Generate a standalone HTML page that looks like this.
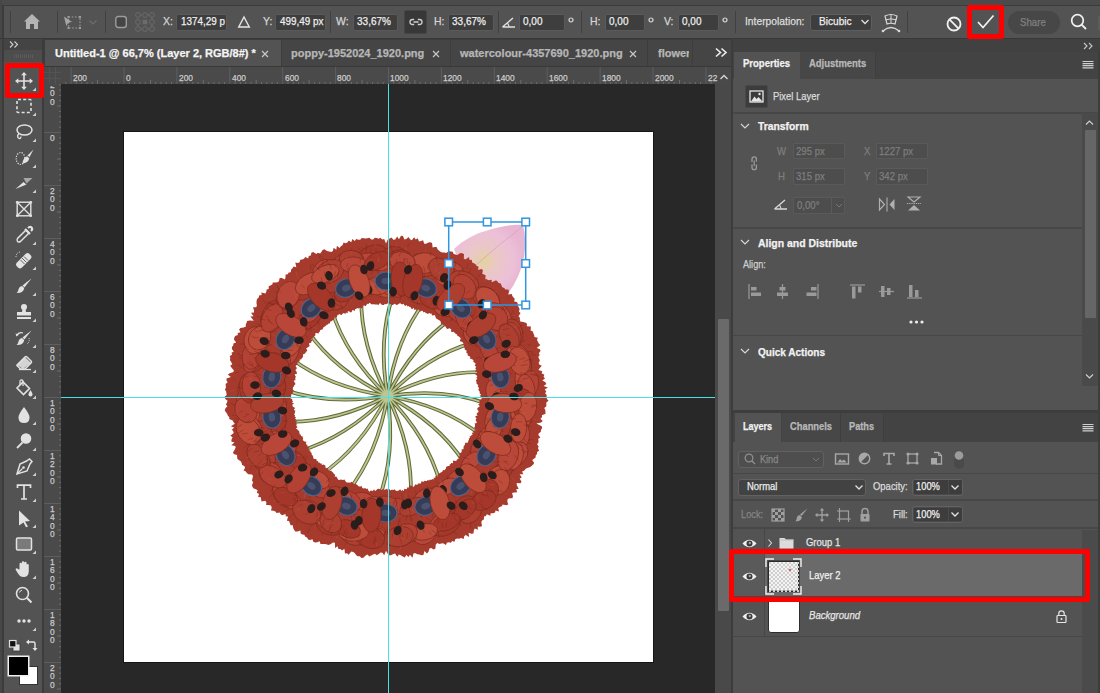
<!DOCTYPE html>
<html><head><meta charset="utf-8">
<style>
*{margin:0;padding:0;box-sizing:border-box}
html,body{width:1100px;height:693px;overflow:hidden;background:#3c3c3c;font-family:"Liberation Sans",sans-serif;color:#d8d8d8}
.a{position:absolute}
.t{position:absolute;white-space:nowrap;-webkit-text-stroke:0.25px currentColor}
svg.a{overflow:visible}
</style></head><body>
<div class="a" style="left:0px;top:0px;width:1100px;height:5px;background:#4b4b4b;"></div>
<div class="a" style="left:0px;top:0px;width:2px;height:693px;background:#474747;"></div>
<div class="a" style="left:4px;top:6px;width:1096px;height:32px;background:#535353;"></div>
<div class="a" style="left:10px;top:11px;width:1px;height:22px;background:#404040;"></div>
<div class="a" style="left:57px;top:11px;width:1px;height:22px;background:#404040;"></div>
<div class="a" style="left:105px;top:11px;width:1px;height:22px;background:#404040;"></div>
<div class="a" style="left:330px;top:11px;width:1px;height:22px;background:#404040;"></div>
<div class="a" style="left:498px;top:11px;width:1px;height:22px;background:#404040;"></div>
<div class="a" style="left:581px;top:11px;width:1px;height:22px;background:#404040;"></div>
<div class="a" style="left:735px;top:11px;width:1px;height:22px;background:#404040;"></div>
<div class="a" style="left:907px;top:11px;width:1px;height:22px;background:#404040;"></div>
<svg class="a" style="left:22px;top:12px;" width="20" height="20" viewBox="0 0 20 20"><path d="M10 2 L18 9.5 L16 9.5 L16 17 L12 17 L12 12 L8 12 L8 17 L4 17 L4 9.5 L2 9.5 Z" fill="#b4b4b4"/></svg>
<svg class="a" style="left:62px;top:14px;" width="20" height="16" viewBox="0 0 20 16"><rect x="6.5" y="3" width="11.5" height="11" fill="none" stroke="#9c9c9c" stroke-width="1.2" stroke-dasharray="1.6 1.6"/><rect x="5.5" y="2" width="2" height="2" fill="#9c9c9c"/><rect x="17" y="2" width="2" height="2" fill="#9c9c9c"/><rect x="5.5" y="13" width="2" height="2" fill="#9c9c9c"/><rect x="17" y="13" width="2" height="2" fill="#9c9c9c"/><path d="M2 2.5 L10 8 L6.3 8.6 L4.3 12 Z" fill="#a6a6a6"/></svg>
<svg class="a" style="left:88px;top:18px;" width="10" height="8" viewBox="0 0 10 8"><path d="M1.5 2.5 L5 6 L8.5 2.5" fill="none" stroke="#6e6e6e" stroke-width="1.1"/></svg>
<svg class="a" style="left:114px;top:15px;" width="14" height="14" viewBox="0 0 14 14"><rect x="1.8" y="1.5" width="10.5" height="11" rx="2.5" fill="#454545" stroke="#9c9c9c" stroke-width="1.4"/></svg>
<svg class="a" style="left:134px;top:11px;" width="22" height="22" viewBox="0 0 22 22"><circle cx="4" cy="4" r="2.4" fill="none" stroke="#6a6a6a" stroke-width="1"/><circle cx="4" cy="11" r="2.4" fill="none" stroke="#6a6a6a" stroke-width="1"/><circle cx="4" cy="18" r="2.4" fill="none" stroke="#6a6a6a" stroke-width="1"/><circle cx="11" cy="4" r="2.4" fill="none" stroke="#6a6a6a" stroke-width="1"/><rect x="8.7" y="8.7" width="4.6" height="4.6" fill="#6c6c6c"/><circle cx="11" cy="18" r="2.4" fill="none" stroke="#6a6a6a" stroke-width="1"/><circle cx="18" cy="4" r="2.4" fill="none" stroke="#6a6a6a" stroke-width="1"/><circle cx="18" cy="11" r="2.4" fill="none" stroke="#6a6a6a" stroke-width="1"/><circle cx="18" cy="18" r="2.4" fill="none" stroke="#6a6a6a" stroke-width="1"/><path d="M6.4 4 H8.6 M13.4 4 H15.6 M4 6.4 V8.6 M18 6.4 V8.6 M4 13.4 V15.6 M18 13.4 V15.6 M6.4 18 H8.6 M13.4 18 H15.6" stroke="#6a6a6a" stroke-width="1"/></svg>
<div class="t" style="left:163px;top:16.19px;font-size:11px;line-height:11px;color:#d6d6d6;font-weight:400;font-style:normal;transform:scaleX(0.95);transform-origin:0 0;">X:</div>
<div class="a" style="left:176px;top:13.5px;width:51px;height:17.0px;background:#3e3e3e;border:1px solid #5a5a5a;border-radius:2px"></div>
<div class="t" style="left:181px;top:15.77px;font-size:11.5px;line-height:11.5px;color:#f0f0f0;font-weight:400;font-style:normal;transform:scaleX(0.86);transform-origin:0 0;width:52px;overflow:hidden">1374,29 p</div>
<svg class="a" style="left:236px;top:14px;" width="16" height="16" viewBox="0 0 16 16"><path d="M8 3 L13.3 13 L2.7 13 Z" fill="none" stroke="#e6e6e6" stroke-width="1.4" stroke-linejoin="miter"/></svg>
<div class="t" style="left:262.5px;top:16.19px;font-size:11px;line-height:11px;color:#d6d6d6;font-weight:400;font-style:normal;transform:scaleX(0.95);transform-origin:0 0;">Y:</div>
<div class="a" style="left:275px;top:13.5px;width:51px;height:17.0px;background:#3e3e3e;border:1px solid #5a5a5a;border-radius:2px"></div>
<div class="t" style="left:280px;top:15.77px;font-size:11.5px;line-height:11.5px;color:#f0f0f0;font-weight:400;font-style:normal;transform:scaleX(0.86);transform-origin:0 0;">499,49 px</div>
<div class="t" style="left:336px;top:16.19px;font-size:11px;line-height:11px;color:#d6d6d6;font-weight:400;font-style:normal;transform:scaleX(0.95);transform-origin:0 0;">W:</div>
<div class="a" style="left:353px;top:13.5px;width:45px;height:17.0px;background:#3e3e3e;border:1px solid #5a5a5a;border-radius:2px"></div>
<div class="t" style="left:357px;top:15.77px;font-size:11.5px;line-height:11.5px;color:#f0f0f0;font-weight:400;font-style:normal;transform:scaleX(0.87);transform-origin:0 0;">33,67%</div>
<div class="a" style="left:404px;top:10px;width:23px;height:24px;background:#383838;border-radius:2px;border:1px solid #454545"></div>
<svg class="a" style="left:408px;top:16px;" width="16" height="12" viewBox="0 0 16 12"><path d="M6.2 3.5 H4.5 A2.5 2.5 0 0 0 4.5 8.5 H6.2 M9.8 3.5 H11.5 A2.5 2.5 0 0 1 11.5 8.5 H9.8 M5.5 6 H10.5" fill="none" stroke="#cfcfcf" stroke-width="1.3"/></svg>
<div class="t" style="left:434px;top:16.19px;font-size:11px;line-height:11px;color:#d6d6d6;font-weight:400;font-style:normal;transform:scaleX(0.95);transform-origin:0 0;">H:</div>
<div class="a" style="left:448px;top:13.5px;width:46px;height:17.0px;background:#3e3e3e;border:1px solid #5a5a5a;border-radius:2px"></div>
<div class="t" style="left:452px;top:15.77px;font-size:11.5px;line-height:11.5px;color:#f0f0f0;font-weight:400;font-style:normal;transform:scaleX(0.87);transform-origin:0 0;">33,67%</div>
<svg class="a" style="left:500px;top:14px;" width="18" height="16" viewBox="0 0 18 16"><path d="M2.5 13 H15 M2.5 13 L13 4" fill="none" stroke="#e0e0e0" stroke-width="1.4"/><path d="M9 13 A7 7 0 0 0 7.5 9.2" fill="none" stroke="#e0e0e0" stroke-width="1.2"/></svg>
<div class="a" style="left:519px;top:13.5px;width:46px;height:17.0px;background:#3e3e3e;border:1px solid #5a5a5a;border-radius:2px"></div>
<div class="t" style="left:523px;top:15.77px;font-size:11.5px;line-height:11.5px;color:#f0f0f0;font-weight:400;font-style:normal;transform:scaleX(0.87);transform-origin:0 0;">0,00</div>
<svg class="a" style="left:567px;top:16px;" width="8" height="8" viewBox="0 0 8 8"><circle cx="4" cy="4" r="2" fill="none" stroke="#dcdcdc" stroke-width="1.2"/></svg>
<div class="t" style="left:590px;top:16.19px;font-size:11px;line-height:11px;color:#d6d6d6;font-weight:400;font-style:normal;transform:scaleX(0.95);transform-origin:0 0;">H:</div>
<div class="a" style="left:605px;top:13.5px;width:40px;height:17.0px;background:#3e3e3e;border:1px solid #5a5a5a;border-radius:2px"></div>
<div class="t" style="left:609px;top:15.77px;font-size:11.5px;line-height:11.5px;color:#f0f0f0;font-weight:400;font-style:normal;transform:scaleX(0.87);transform-origin:0 0;">0,00</div>
<svg class="a" style="left:647px;top:16px;" width="8" height="8" viewBox="0 0 8 8"><circle cx="4" cy="4" r="2" fill="none" stroke="#dcdcdc" stroke-width="1.2"/></svg>
<div class="t" style="left:664px;top:16.19px;font-size:11px;line-height:11px;color:#d6d6d6;font-weight:400;font-style:normal;transform:scaleX(0.95);transform-origin:0 0;">V:</div>
<div class="a" style="left:678px;top:13.5px;width:41px;height:17.0px;background:#3e3e3e;border:1px solid #5a5a5a;border-radius:2px"></div>
<div class="t" style="left:682px;top:15.77px;font-size:11.5px;line-height:11.5px;color:#f0f0f0;font-weight:400;font-style:normal;transform:scaleX(0.87);transform-origin:0 0;">0,00</div>
<svg class="a" style="left:721px;top:16px;" width="8" height="8" viewBox="0 0 8 8"><circle cx="4" cy="4" r="2" fill="none" stroke="#dcdcdc" stroke-width="1.2"/></svg>
<div class="t" style="left:745px;top:16.19px;font-size:11px;line-height:11px;color:#dedede;font-weight:400;font-style:normal;transform:scaleX(0.935);transform-origin:0 0;">Interpolation:</div>
<div class="a" style="left:810px;top:13.5px;width:62px;height:17px;background:#3e3e3e;border:1px solid #5e5e5e;border-radius:3px"></div>
<div class="t" style="left:819px;top:16.19px;font-size:11px;line-height:11px;color:#efefef;font-weight:400;font-style:normal;transform:scaleX(0.92);transform-origin:0 0;">Bicubic</div>
<svg class="a" style="left:860px;top:18px;" width="10" height="8" viewBox="0 0 10 8"><path d="M1.5 2 L5 5.5 L8.5 2" fill="none" stroke="#e0e0e0" stroke-width="1.3"/></svg>
<svg class="a" style="left:880px;top:13px;" width="22" height="20" viewBox="0 0 22 20"><path d="M5 3 Q11 0 17 3 L15 11 Q11 9.5 7 11 Z" fill="none" stroke="#d8d8d8" stroke-width="1.2"/><path d="M11 1.8 V10 M5.8 6.8 Q11 5 16.2 6.8" fill="none" stroke="#d8d8d8" stroke-width="1"/><path d="M3 18 Q11 11 19 18" fill="none" stroke="#d8d8d8" stroke-width="1.3"/><circle cx="3" cy="18" r="1.3" fill="#d8d8d8"/><circle cx="19" cy="18" r="1.3" fill="#d8d8d8"/></svg>
<svg class="a" style="left:944px;top:15px;" width="20" height="18" viewBox="0 0 20 18"><circle cx="10" cy="9" r="6.5" fill="none" stroke="#f2f2f2" stroke-width="1.8"/><path d="M5.4 4.4 L14.6 13.6" stroke="#f2f2f2" stroke-width="1.8"/></svg>
<svg class="a" style="left:975px;top:12px;" width="22" height="20" viewBox="0 0 22 20"><path d="M3 10 L8 15.5 L18.5 3.5" fill="none" stroke="#f4f4f4" stroke-width="1.7"/></svg>
<div class="a" style="left:1008px;top:10.5px;width:52px;height:23.5px;background:#474747;border-radius:12px"></div>
<div class="t" style="left:1020px;top:16.69px;font-size:11px;line-height:11px;color:#808080;font-weight:400;font-style:normal;transform:scaleX(0.88);transform-origin:0 0;">Share</div>
<svg class="a" style="left:1067.5px;top:12px;" width="22" height="22" viewBox="0 0 22 22"><circle cx="9.5" cy="8.5" r="5.8" fill="none" stroke="#f0f0f0" stroke-width="1.7"/><path d="M13.6 12.6 L18 17" stroke="#f0f0f0" stroke-width="1.9"/></svg>
<div class="a" style="left:1098px;top:16px;width:2px;height:14px;background:#5c5c5c;"></div>
<div class="a" style="left:0px;top:38px;width:1100px;height:1px;background:#383838;"></div>
<div class="a" style="left:44px;top:39px;width:688px;height:27px;background:#3d3d3d;"></div>
<div class="a" style="left:45px;top:40px;width:236px;height:26px;background:#535353;"></div>
<div class="t" style="left:55px;top:47.89px;font-size:11px;line-height:11px;color:#f4f4f4;font-weight:700;font-style:normal;">Untitled-1 @ 66,7% (Layer 2, RGB/8#) *</div>
<svg class="a" style="left:259px;top:48px;" width="12" height="12" viewBox="0 0 12 12"><path d="M3 3 L9 9 M9 3 L3 9" stroke="#c8c8c8" stroke-width="1.2"/></svg>
<div class="a" style="left:282px;top:40px;width:168px;height:26px;background:#454545;"></div>
<div class="t" style="left:291px;top:47.89px;font-size:11px;line-height:11px;color:#b6b6b6;font-weight:700;font-style:normal;">poppy-1952024_1920.png</div>
<svg class="a" style="left:430px;top:48px;" width="12" height="12" viewBox="0 0 12 12"><path d="M3 3 L9 9 M9 3 L3 9" stroke="#c8c8c8" stroke-width="1.2"/></svg>
<div class="a" style="left:451px;top:40px;width:196px;height:26px;background:#454545;"></div>
<div class="t" style="left:460px;top:47.89px;font-size:11px;line-height:11px;color:#b6b6b6;font-weight:700;font-style:normal;">watercolour-4357690_1920.png</div>
<svg class="a" style="left:627px;top:48px;" width="12" height="12" viewBox="0 0 12 12"><path d="M3 3 L9 9 M9 3 L3 9" stroke="#c8c8c8" stroke-width="1.2"/></svg>
<div class="a" style="left:648px;top:40px;width:44px;height:26px;background:#454545;"></div>
<div class="t" style="left:658px;top:47.89px;font-size:11px;line-height:11px;color:#b6b6b6;font-weight:700;font-style:normal;width:31px;overflow:hidden">flower</div>
<div class="a" style="left:693px;top:40px;width:38px;height:26px;background:#454545;"></div>
<svg class="a" style="left:713px;top:47px;" width="16" height="12" viewBox="0 0 16 12"><path d="M3 1.5 L7.5 5.5 L3 9.5 M8.5 1.5 L13 5.5 L8.5 9.5" fill="none" stroke="#eeeeee" stroke-width="1.6"/></svg>
<div class="a" style="left:44px;top:66px;width:687px;height:1.2px;background:#383838;"></div>
<div class="a" style="left:4px;top:39px;width:37.5px;height:11px;background:#444444;"></div>
<svg class="a" style="left:8px;top:40px;" width="14" height="9" viewBox="0 0 14 9"><path d="M2 1.5 L5 4.5 L2 7.5 M6.5 1.5 L9.5 4.5 L6.5 7.5" fill="none" stroke="#cfcfcf" stroke-width="1.1"/></svg>
<div class="a" style="left:4px;top:50px;width:37.5px;height:643px;background:#535353;"></div>
<div class="a" style="left:4px;top:50px;width:37.5px;height:12px;background:#4d4d4d;"></div>
<svg class="a" style="left:14px;top:54px;" width="20" height="5" viewBox="0 0 20 5"><rect x="0" y="0.5" width="1" height="3.5" fill="#5c5c5c"/><rect x="2" y="0.5" width="1" height="3.5" fill="#5c5c5c"/><rect x="4" y="0.5" width="1" height="3.5" fill="#5c5c5c"/><rect x="6" y="0.5" width="1" height="3.5" fill="#5c5c5c"/><rect x="8" y="0.5" width="1" height="3.5" fill="#5c5c5c"/><rect x="10" y="0.5" width="1" height="3.5" fill="#5c5c5c"/><rect x="12" y="0.5" width="1" height="3.5" fill="#5c5c5c"/><rect x="14" y="0.5" width="1" height="3.5" fill="#5c5c5c"/><rect x="16" y="0.5" width="1" height="3.5" fill="#5c5c5c"/><rect x="18" y="0.5" width="1" height="3.5" fill="#5c5c5c"/></svg>
<svg class="a" style="left:13.5px;top:70.8px;" width="20" height="20" viewBox="0 0 20 20"><path d="M10 2.5 V17.5 M2.5 10 H17.5" stroke="#e2e2e2" stroke-width="1.6"/><path d="M10 1 L12.8 4.3 H7.2 Z M10 19 L12.8 15.7 H7.2 Z M1 10 L4.3 7.2 V12.8 Z M19 10 L15.7 7.2 V12.8 Z" fill="#e2e2e2"/></svg>
<svg class="a" style="left:32px;top:86.8px;" width="5" height="5" viewBox="0 0 5 5"><path d="M4 0.5 V4 H0.5 Z" fill="#d0d0d0"/></svg>
<svg class="a" style="left:13.5px;top:96px;" width="20" height="20" viewBox="0 0 20 20"><rect x="3" y="3.5" width="14" height="13" rx="1" fill="none" stroke="#e2e2e2" stroke-width="1.6" stroke-dasharray="3 2.2"/></svg>
<svg class="a" style="left:32px;top:112px;" width="5" height="5" viewBox="0 0 5 5"><path d="M4 0.5 V4 H0.5 Z" fill="#d0d0d0"/></svg>
<svg class="a" style="left:13.5px;top:121.6px;" width="20" height="20" viewBox="0 0 20 20"><ellipse cx="10.5" cy="8" rx="7.5" ry="5" fill="none" stroke="#e2e2e2" stroke-width="1.5"/><path d="M5 11.5 Q2.5 14 4.5 16 Q6.5 17.5 7 14.5" fill="none" stroke="#e2e2e2" stroke-width="1.4"/></svg>
<svg class="a" style="left:32px;top:137.6px;" width="5" height="5" viewBox="0 0 5 5"><path d="M4 0.5 V4 H0.5 Z" fill="#d0d0d0"/></svg>
<svg class="a" style="left:13.5px;top:147.6px;" width="20" height="20" viewBox="0 0 20 20"><ellipse cx="6.5" cy="10.5" rx="4.3" ry="6" fill="none" stroke="#e2e2e2" stroke-width="1.2" stroke-dasharray="1.2 1.3"/><path d="M19.5 1.5 L15.5 9 L13.5 7.5 Z" fill="#e2e2e2"/><path d="M13.2 8.2 Q9 9.5 8.5 15.5 Q14 15 15.3 10.5 Z" fill="#e2e2e2"/></svg>
<svg class="a" style="left:32px;top:163.6px;" width="5" height="5" viewBox="0 0 5 5"><path d="M4 0.5 V4 H0.5 Z" fill="#d0d0d0"/></svg>
<svg class="a" style="left:13.5px;top:173.3px;" width="20" height="20" viewBox="0 0 20 20"><path d="M1.5 16 L9.5 9 L12.5 11.5 Z" fill="#e2e2e2"/><path d="M9.5 5 L18.5 5 L12.5 10.5 Z" fill="#a8a8a8"/></svg>
<svg class="a" style="left:32px;top:189.3px;" width="5" height="5" viewBox="0 0 5 5"><path d="M4 0.5 V4 H0.5 Z" fill="#d0d0d0"/></svg>
<svg class="a" style="left:13.5px;top:199px;" width="20" height="20" viewBox="0 0 20 20"><rect x="3.2" y="3.2" width="13.6" height="13.6" fill="none" stroke="#e2e2e2" stroke-width="1.4"/><path d="M3.2 3.2 L16.8 16.8 M16.8 3.2 L3.2 16.8" stroke="#e2e2e2" stroke-width="1.3"/><circle cx="3.2" cy="3.2" r="1.3" fill="#e2e2e2"/><circle cx="16.8" cy="3.2" r="1.3" fill="#e2e2e2"/><circle cx="3.2" cy="16.8" r="1.3" fill="#e2e2e2"/><circle cx="16.8" cy="16.8" r="1.3" fill="#e2e2e2"/></svg>
<svg class="a" style="left:13.5px;top:224.5px;" width="20" height="20" viewBox="0 0 20 20"><path d="M12 5 L15 8 L6.5 16.5 Q4.5 17.5 3.5 16.5 Q2.5 15.5 3.5 13.5 Z" fill="none" stroke="#e2e2e2" stroke-width="1.5"/><path d="M11 4 L16 9 M14 3 Q16 1 17.5 2.5 Q19 4 17 6" fill="none" stroke="#e2e2e2" stroke-width="2.2"/></svg>
<svg class="a" style="left:32px;top:240.5px;" width="5" height="5" viewBox="0 0 5 5"><path d="M4 0.5 V4 H0.5 Z" fill="#d0d0d0"/></svg>
<svg class="a" style="left:13.5px;top:250.3px;" width="20" height="20" viewBox="0 0 20 20"><path d="M3 12.5 L11.5 4 Q13.5 2 15.5 4 L16.5 5 Q18.5 7 16.5 9 L8 17.5 Q6 19.5 4 17.5 L3 16.5 Q1 14.5 3 12.5 Z" fill="#e2e2e2"/><path d="M8 8 L12.5 12.5 M10 6.5 L14 10.5 M6.5 10 L10.5 14" stroke="#535353" stroke-width="0.9"/><path d="M2 7 Q2 3 6 2" fill="none" stroke="#e2e2e2" stroke-width="1" stroke-dasharray="1 1"/></svg>
<svg class="a" style="left:32px;top:266.3px;" width="5" height="5" viewBox="0 0 5 5"><path d="M4 0.5 V4 H0.5 Z" fill="#d0d0d0"/></svg>
<svg class="a" style="left:13.5px;top:276px;" width="20" height="20" viewBox="0 0 20 20"><path d="M17.5 2.5 Q13 8 10.5 11.5 L8.5 9.5 Q12 6.5 17.5 2.5 Z" fill="#e2e2e2"/><path d="M8 10 Q5 10.5 4.5 13.5 Q4 16 2.5 17 Q7 17.5 9 15 Q10 13.5 10.2 12 Z" fill="#e2e2e2"/></svg>
<svg class="a" style="left:32px;top:292px;" width="5" height="5" viewBox="0 0 5 5"><path d="M4 0.5 V4 H0.5 Z" fill="#d0d0d0"/></svg>
<svg class="a" style="left:13.5px;top:301.8px;" width="20" height="20" viewBox="0 0 20 20"><circle cx="10" cy="5" r="3" fill="#e2e2e2"/><path d="M8.5 7 H11.5 L12 10 H17 V13.5 H3 V10 H8 Z" fill="#e2e2e2"/><rect x="3" y="15" width="14" height="2" fill="#e2e2e2"/></svg>
<svg class="a" style="left:32px;top:317.8px;" width="5" height="5" viewBox="0 0 5 5"><path d="M4 0.5 V4 H0.5 Z" fill="#d0d0d0"/></svg>
<svg class="a" style="left:13.5px;top:327.6px;" width="20" height="20" viewBox="0 0 20 20"><path d="M17.5 2.5 Q13 8 10.5 11.5 L8.5 9.5 Q12 6.5 17.5 2.5 Z" fill="#e2e2e2"/><path d="M8 10 Q5 10.5 4.5 13.5 Q4 16 2.5 17 Q7 17.5 9 15 Q10 13.5 10.2 12 Z" fill="#e2e2e2"/><path d="M2.5 7.5 Q5 3.5 9 5" fill="none" stroke="#e2e2e2" stroke-width="1.3"/><path d="M1.5 5.5 L2.5 8.5 L5 6.5 Z" fill="#e2e2e2"/><path d="M15 10 Q16 14 13 16" fill="none" stroke="#e2e2e2" stroke-width="1" stroke-dasharray="1 1"/></svg>
<svg class="a" style="left:32px;top:343.6px;" width="5" height="5" viewBox="0 0 5 5"><path d="M4 0.5 V4 H0.5 Z" fill="#d0d0d0"/></svg>
<svg class="a" style="left:13.5px;top:353.3px;" width="20" height="20" viewBox="0 0 20 20"><path d="M3 12 L11 4 Q12 3 13 4 L17 8 Q18 9 17 10 L11 16 H6.5 L3.5 13 Q2.5 12.5 3 12 Z" fill="none" stroke="#e2e2e2" stroke-width="1.5"/><path d="M3 12 L11 4 L17 10 L9 16 Z" fill="#e2e2e2" opacity="0.9"/><path d="M5 16.5 H17" stroke="#e2e2e2" stroke-width="1.3"/></svg>
<svg class="a" style="left:32px;top:369.3px;" width="5" height="5" viewBox="0 0 5 5"><path d="M4 0.5 V4 H0.5 Z" fill="#d0d0d0"/></svg>
<svg class="a" style="left:13.5px;top:379.1px;" width="20" height="20" viewBox="0 0 20 20"><path d="M3 9 L9 3 L15.5 9.5 L9.5 15.5 Z" fill="none" stroke="#e2e2e2" stroke-width="1.6"/><path d="M6 6 V2.5 Q6 1 7.5 1 Q9 1 9 2.5 V7" fill="none" stroke="#e2e2e2" stroke-width="1.3"/><path d="M16.5 11 Q18.5 14 18.5 15.5 Q18.5 17.5 16.5 17.5 Q14.5 17.5 14.5 15.5 Q14.5 14 16.5 11 Z" fill="#e2e2e2"/></svg>
<svg class="a" style="left:32px;top:395.1px;" width="5" height="5" viewBox="0 0 5 5"><path d="M4 0.5 V4 H0.5 Z" fill="#d0d0d0"/></svg>
<svg class="a" style="left:13.5px;top:404.8px;" width="20" height="20" viewBox="0 0 20 20"><path d="M10 2 Q15.5 9 15.5 12.5 Q15.5 18 10 18 Q4.5 18 4.5 12.5 Q4.5 9 10 2 Z" fill="#e2e2e2"/></svg>
<svg class="a" style="left:32px;top:420.8px;" width="5" height="5" viewBox="0 0 5 5"><path d="M4 0.5 V4 H0.5 Z" fill="#d0d0d0"/></svg>
<svg class="a" style="left:13.5px;top:430.6px;" width="20" height="20" viewBox="0 0 20 20"><circle cx="12" cy="7.5" r="5.3" fill="#e2e2e2"/><path d="M8.5 11.5 L3 17" stroke="#e2e2e2" stroke-width="1.8"/></svg>
<svg class="a" style="left:32px;top:446.6px;" width="5" height="5" viewBox="0 0 5 5"><path d="M4 0.5 V4 H0.5 Z" fill="#d0d0d0"/></svg>
<svg class="a" style="left:13.5px;top:456.3px;" width="20" height="20" viewBox="0 0 20 20"><path d="M15.5 3 L18 5.5 L16 8 L13 15 Q8 16.5 3 18 Q4.5 13 6 8 L12.5 5 Z" fill="none" stroke="#e2e2e2" stroke-width="1.5"/><path d="M3 18 L8.5 12.5" stroke="#e2e2e2" stroke-width="1.1"/><circle cx="9.5" cy="11.5" r="1.3" fill="#e2e2e2"/></svg>
<svg class="a" style="left:32px;top:472.3px;" width="5" height="5" viewBox="0 0 5 5"><path d="M4 0.5 V4 H0.5 Z" fill="#d0d0d0"/></svg>
<svg class="a" style="left:13.5px;top:482.1px;" width="20" height="20" viewBox="0 0 20 20"><path d="M3.5 6 V3.2 H16.5 V6 M10 3.2 V17 M7 17 H13" fill="none" stroke="#e2e2e2" stroke-width="1.7"/></svg>
<svg class="a" style="left:32px;top:498.1px;" width="5" height="5" viewBox="0 0 5 5"><path d="M4 0.5 V4 H0.5 Z" fill="#d0d0d0"/></svg>
<svg class="a" style="left:13.5px;top:507.79999999999995px;" width="20" height="20" viewBox="0 0 20 20"><path d="M5 2.5 L16 13 L11 13.5 L14 18.5 L12 19.3 L9.5 14.5 L5 17.5 Z" fill="#e2e2e2"/></svg>
<svg class="a" style="left:32px;top:523.8px;" width="5" height="5" viewBox="0 0 5 5"><path d="M4 0.5 V4 H0.5 Z" fill="#d0d0d0"/></svg>
<svg class="a" style="left:13.5px;top:533.6px;" width="20" height="20" viewBox="0 0 20 20"><rect x="2.5" y="4" width="15" height="12" rx="1.3" fill="#7a7a7a" stroke="#e2e2e2" stroke-width="1.5"/></svg>
<svg class="a" style="left:32px;top:549.6px;" width="5" height="5" viewBox="0 0 5 5"><path d="M4 0.5 V4 H0.5 Z" fill="#d0d0d0"/></svg>
<svg class="a" style="left:13.5px;top:559.3px;" width="20" height="20" viewBox="0 0 20 20"><path d="M5.5 10.5 V5 Q5.5 3.8 6.7 3.8 Q7.8 3.8 7.8 5 V9 V3.5 Q7.8 2.3 9 2.3 Q10.2 2.3 10.2 3.5 V9 V4 Q10.2 2.8 11.4 2.8 Q12.6 2.8 12.6 4 V9.5 V6 Q12.6 5 13.7 5 Q14.8 5 14.8 6 V12 Q14.8 18 9.5 18 Q6 18 4 14.5 L1.8 11 Q1.2 9.8 2.3 9.4 Q3.3 9 4.2 10.2 Z" fill="#e2e2e2"/></svg>
<svg class="a" style="left:32px;top:575.3px;" width="5" height="5" viewBox="0 0 5 5"><path d="M4 0.5 V4 H0.5 Z" fill="#d0d0d0"/></svg>
<svg class="a" style="left:13.5px;top:585.1px;" width="20" height="20" viewBox="0 0 20 20"><circle cx="8.5" cy="8.5" r="6" fill="none" stroke="#e2e2e2" stroke-width="1.6"/><path d="M12.8 12.8 L17.5 17.5" stroke="#e2e2e2" stroke-width="2"/><path d="M5.5 7.5 Q6 5.5 8 5.2" fill="none" stroke="#e2e2e2" stroke-width="1"/></svg>
<svg class="a" style="left:13.5px;top:610.8px;" width="20" height="20" viewBox="0 0 20 20"><circle cx="5" cy="10" r="1.7" fill="#e2e2e2"/><circle cx="10" cy="10" r="1.7" fill="#e2e2e2"/><circle cx="15" cy="10" r="1.7" fill="#e2e2e2"/></svg>
<svg class="a" style="left:32px;top:626.8px;" width="5" height="5" viewBox="0 0 5 5"><path d="M4 0.5 V4 H0.5 Z" fill="#d0d0d0"/></svg>
<svg class="a" style="left:8px;top:639px;" width="13" height="13" viewBox="0 0 13 13"><rect x="5" y="5" width="7" height="7" fill="#e0e0e0" stroke="#3a3a3a" stroke-width="0.8"/><rect x="1.5" y="1.5" width="6.5" height="6.5" fill="#111" stroke="#e0e0e0" stroke-width="1.2"/></svg>
<svg class="a" style="left:25px;top:639px;" width="13" height="13" viewBox="0 0 13 13"><path d="M3.5 3 H8.5 Q10 3 10 4.5 V9.5" fill="none" stroke="#e6e6e6" stroke-width="1.4"/><path d="M1 3 L4 0.5 V5.5 Z M10 12 L7.5 9 H12.5 Z" fill="#e6e6e6"/></svg>
<div class="a" style="left:19px;top:665.5px;width:19px;height:19px;background:#ffffff;border:1px solid #333"></div>
<div class="a" style="left:8.5px;top:656.5px;width:19.5px;height:18px;background:#000000;box-shadow:0 0 0 1.5px #f0f0f0"></div>
<div class="a" style="left:44px;top:67px;width:687px;height:17px;background:#4a4a4a;"></div>
<svg class="a" style="left:719px;top:74px;" width="10" height="7" viewBox="0 0 10 7"><path d="M1.5 5 L5 1.5 L8.5 5" fill="none" stroke="#d8d8d8" stroke-width="1.3"/></svg>
<div class="a" style="left:44px;top:67px;width:17px;height:626px;background:#4a4a4a;"></div>
<svg class="a" style="left:44px;top:67px;" width="17" height="17" viewBox="0 0 17 17"><path d="M5.5 0 V17 M11.5 0 V17 M0 5.5 H17 M0 11.5 H17" stroke="#545454" stroke-width="1"/></svg>
<svg class="a" style="left:61px;top:67px;overflow:hidden" width="654" height="17" viewBox="0 0 654 17"><path d="M4.8 15 V17" stroke="#6c6c6c" stroke-width="1"/><path d="M10.1 0 V17" stroke="#5e5e5e" stroke-width="1"/><path d="M15.4 15 V17" stroke="#6c6c6c" stroke-width="1"/><path d="M20.7 15 V17" stroke="#6c6c6c" stroke-width="1"/><path d="M26.0 15 V17" stroke="#6c6c6c" stroke-width="1"/><path d="M31.3 15 V17" stroke="#6c6c6c" stroke-width="1"/><path d="M36.5 13 V17" stroke="#6c6c6c" stroke-width="1"/><path d="M41.8 15 V17" stroke="#6c6c6c" stroke-width="1"/><path d="M47.1 15 V17" stroke="#6c6c6c" stroke-width="1"/><path d="M52.4 15 V17" stroke="#6c6c6c" stroke-width="1"/><path d="M57.7 15 V17" stroke="#6c6c6c" stroke-width="1"/><path d="M63.0 0 V17" stroke="#5e5e5e" stroke-width="1"/><path d="M68.3 15 V17" stroke="#6c6c6c" stroke-width="1"/><path d="M73.6 15 V17" stroke="#6c6c6c" stroke-width="1"/><path d="M78.9 15 V17" stroke="#6c6c6c" stroke-width="1"/><path d="M84.2 15 V17" stroke="#6c6c6c" stroke-width="1"/><path d="M89.5 13 V17" stroke="#6c6c6c" stroke-width="1"/><path d="M94.7 15 V17" stroke="#6c6c6c" stroke-width="1"/><path d="M100.0 15 V17" stroke="#6c6c6c" stroke-width="1"/><path d="M105.3 15 V17" stroke="#6c6c6c" stroke-width="1"/><path d="M110.6 15 V17" stroke="#6c6c6c" stroke-width="1"/><path d="M115.9 0 V17" stroke="#5e5e5e" stroke-width="1"/><path d="M121.2 15 V17" stroke="#6c6c6c" stroke-width="1"/><path d="M126.5 15 V17" stroke="#6c6c6c" stroke-width="1"/><path d="M131.8 15 V17" stroke="#6c6c6c" stroke-width="1"/><path d="M137.1 15 V17" stroke="#6c6c6c" stroke-width="1"/><path d="M142.3 13 V17" stroke="#6c6c6c" stroke-width="1"/><path d="M147.6 15 V17" stroke="#6c6c6c" stroke-width="1"/><path d="M152.9 15 V17" stroke="#6c6c6c" stroke-width="1"/><path d="M158.2 15 V17" stroke="#6c6c6c" stroke-width="1"/><path d="M163.5 15 V17" stroke="#6c6c6c" stroke-width="1"/><path d="M168.8 0 V17" stroke="#5e5e5e" stroke-width="1"/><path d="M174.1 15 V17" stroke="#6c6c6c" stroke-width="1"/><path d="M179.4 15 V17" stroke="#6c6c6c" stroke-width="1"/><path d="M184.7 15 V17" stroke="#6c6c6c" stroke-width="1"/><path d="M190.0 15 V17" stroke="#6c6c6c" stroke-width="1"/><path d="M195.2 13 V17" stroke="#6c6c6c" stroke-width="1"/><path d="M200.5 15 V17" stroke="#6c6c6c" stroke-width="1"/><path d="M205.8 15 V17" stroke="#6c6c6c" stroke-width="1"/><path d="M211.1 15 V17" stroke="#6c6c6c" stroke-width="1"/><path d="M216.4 15 V17" stroke="#6c6c6c" stroke-width="1"/><path d="M221.7 0 V17" stroke="#5e5e5e" stroke-width="1"/><path d="M227.0 15 V17" stroke="#6c6c6c" stroke-width="1"/><path d="M232.3 15 V17" stroke="#6c6c6c" stroke-width="1"/><path d="M237.6 15 V17" stroke="#6c6c6c" stroke-width="1"/><path d="M242.9 15 V17" stroke="#6c6c6c" stroke-width="1"/><path d="M248.1 13 V17" stroke="#6c6c6c" stroke-width="1"/><path d="M253.4 15 V17" stroke="#6c6c6c" stroke-width="1"/><path d="M258.7 15 V17" stroke="#6c6c6c" stroke-width="1"/><path d="M264.0 15 V17" stroke="#6c6c6c" stroke-width="1"/><path d="M269.3 15 V17" stroke="#6c6c6c" stroke-width="1"/><path d="M274.6 0 V17" stroke="#5e5e5e" stroke-width="1"/><path d="M279.9 15 V17" stroke="#6c6c6c" stroke-width="1"/><path d="M285.2 15 V17" stroke="#6c6c6c" stroke-width="1"/><path d="M290.5 15 V17" stroke="#6c6c6c" stroke-width="1"/><path d="M295.8 15 V17" stroke="#6c6c6c" stroke-width="1"/><path d="M301.1 13 V17" stroke="#6c6c6c" stroke-width="1"/><path d="M306.3 15 V17" stroke="#6c6c6c" stroke-width="1"/><path d="M311.6 15 V17" stroke="#6c6c6c" stroke-width="1"/><path d="M316.9 15 V17" stroke="#6c6c6c" stroke-width="1"/><path d="M322.2 15 V17" stroke="#6c6c6c" stroke-width="1"/><path d="M327.5 0 V17" stroke="#5e5e5e" stroke-width="1"/><path d="M332.8 15 V17" stroke="#6c6c6c" stroke-width="1"/><path d="M338.1 15 V17" stroke="#6c6c6c" stroke-width="1"/><path d="M343.4 15 V17" stroke="#6c6c6c" stroke-width="1"/><path d="M348.7 15 V17" stroke="#6c6c6c" stroke-width="1"/><path d="M353.9 13 V17" stroke="#6c6c6c" stroke-width="1"/><path d="M359.2 15 V17" stroke="#6c6c6c" stroke-width="1"/><path d="M364.5 15 V17" stroke="#6c6c6c" stroke-width="1"/><path d="M369.8 15 V17" stroke="#6c6c6c" stroke-width="1"/><path d="M375.1 15 V17" stroke="#6c6c6c" stroke-width="1"/><path d="M380.4 0 V17" stroke="#5e5e5e" stroke-width="1"/><path d="M385.7 15 V17" stroke="#6c6c6c" stroke-width="1"/><path d="M391.0 15 V17" stroke="#6c6c6c" stroke-width="1"/><path d="M396.3 15 V17" stroke="#6c6c6c" stroke-width="1"/><path d="M401.6 15 V17" stroke="#6c6c6c" stroke-width="1"/><path d="M406.8 13 V17" stroke="#6c6c6c" stroke-width="1"/><path d="M412.1 15 V17" stroke="#6c6c6c" stroke-width="1"/><path d="M417.4 15 V17" stroke="#6c6c6c" stroke-width="1"/><path d="M422.7 15 V17" stroke="#6c6c6c" stroke-width="1"/><path d="M428.0 15 V17" stroke="#6c6c6c" stroke-width="1"/><path d="M433.3 0 V17" stroke="#5e5e5e" stroke-width="1"/><path d="M438.6 15 V17" stroke="#6c6c6c" stroke-width="1"/><path d="M443.9 15 V17" stroke="#6c6c6c" stroke-width="1"/><path d="M449.2 15 V17" stroke="#6c6c6c" stroke-width="1"/><path d="M454.5 15 V17" stroke="#6c6c6c" stroke-width="1"/><path d="M459.8 13 V17" stroke="#6c6c6c" stroke-width="1"/><path d="M465.0 15 V17" stroke="#6c6c6c" stroke-width="1"/><path d="M470.3 15 V17" stroke="#6c6c6c" stroke-width="1"/><path d="M475.6 15 V17" stroke="#6c6c6c" stroke-width="1"/><path d="M480.9 15 V17" stroke="#6c6c6c" stroke-width="1"/><path d="M486.2 0 V17" stroke="#5e5e5e" stroke-width="1"/><path d="M491.5 15 V17" stroke="#6c6c6c" stroke-width="1"/><path d="M496.8 15 V17" stroke="#6c6c6c" stroke-width="1"/><path d="M502.1 15 V17" stroke="#6c6c6c" stroke-width="1"/><path d="M507.4 15 V17" stroke="#6c6c6c" stroke-width="1"/><path d="M512.7 13 V17" stroke="#6c6c6c" stroke-width="1"/><path d="M517.9 15 V17" stroke="#6c6c6c" stroke-width="1"/><path d="M523.2 15 V17" stroke="#6c6c6c" stroke-width="1"/><path d="M528.5 15 V17" stroke="#6c6c6c" stroke-width="1"/><path d="M533.8 15 V17" stroke="#6c6c6c" stroke-width="1"/><path d="M539.1 0 V17" stroke="#5e5e5e" stroke-width="1"/><path d="M544.4 15 V17" stroke="#6c6c6c" stroke-width="1"/><path d="M549.7 15 V17" stroke="#6c6c6c" stroke-width="1"/><path d="M555.0 15 V17" stroke="#6c6c6c" stroke-width="1"/><path d="M560.3 15 V17" stroke="#6c6c6c" stroke-width="1"/><path d="M565.5 13 V17" stroke="#6c6c6c" stroke-width="1"/><path d="M570.8 15 V17" stroke="#6c6c6c" stroke-width="1"/><path d="M576.1 15 V17" stroke="#6c6c6c" stroke-width="1"/><path d="M581.4 15 V17" stroke="#6c6c6c" stroke-width="1"/><path d="M586.7 15 V17" stroke="#6c6c6c" stroke-width="1"/><path d="M592.0 0 V17" stroke="#5e5e5e" stroke-width="1"/><path d="M597.3 15 V17" stroke="#6c6c6c" stroke-width="1"/><path d="M602.6 15 V17" stroke="#6c6c6c" stroke-width="1"/><path d="M607.9 15 V17" stroke="#6c6c6c" stroke-width="1"/><path d="M613.2 15 V17" stroke="#6c6c6c" stroke-width="1"/><path d="M618.5 13 V17" stroke="#6c6c6c" stroke-width="1"/><path d="M623.7 15 V17" stroke="#6c6c6c" stroke-width="1"/><path d="M629.0 15 V17" stroke="#6c6c6c" stroke-width="1"/><path d="M634.3 15 V17" stroke="#6c6c6c" stroke-width="1"/><path d="M639.6 15 V17" stroke="#6c6c6c" stroke-width="1"/><path d="M644.9 0 V17" stroke="#5e5e5e" stroke-width="1"/><path d="M650.2 15 V17" stroke="#6c6c6c" stroke-width="1"/></svg>
<div class="t" style="left:72.89999999999999px;top:73.16px;font-size:9.5px;line-height:9.5px;color:#cdcdcd;font-weight:400;font-style:normal;transform:scaleX(0.88);transform-origin:0 0;">200</div>
<div class="t" style="left:125.8px;top:73.16px;font-size:9.5px;line-height:9.5px;color:#cdcdcd;font-weight:400;font-style:normal;transform:scaleX(0.88);transform-origin:0 0;">0</div>
<div class="t" style="left:178.70000000000002px;top:73.16px;font-size:9.5px;line-height:9.5px;color:#cdcdcd;font-weight:400;font-style:normal;transform:scaleX(0.88);transform-origin:0 0;">200</div>
<div class="t" style="left:231.60000000000002px;top:73.16px;font-size:9.5px;line-height:9.5px;color:#cdcdcd;font-weight:400;font-style:normal;transform:scaleX(0.88);transform-origin:0 0;">400</div>
<div class="t" style="left:284.5px;top:73.16px;font-size:9.5px;line-height:9.5px;color:#cdcdcd;font-weight:400;font-style:normal;transform:scaleX(0.88);transform-origin:0 0;">600</div>
<div class="t" style="left:337.40000000000003px;top:73.16px;font-size:9.5px;line-height:9.5px;color:#cdcdcd;font-weight:400;font-style:normal;transform:scaleX(0.88);transform-origin:0 0;">800</div>
<div class="t" style="left:390.3px;top:73.16px;font-size:9.5px;line-height:9.5px;color:#cdcdcd;font-weight:400;font-style:normal;transform:scaleX(0.88);transform-origin:0 0;">1000</div>
<div class="t" style="left:443.2px;top:73.16px;font-size:9.5px;line-height:9.5px;color:#cdcdcd;font-weight:400;font-style:normal;transform:scaleX(0.88);transform-origin:0 0;">1200</div>
<div class="t" style="left:496.1px;top:73.16px;font-size:9.5px;line-height:9.5px;color:#cdcdcd;font-weight:400;font-style:normal;transform:scaleX(0.88);transform-origin:0 0;">1400</div>
<div class="t" style="left:549.0px;top:73.16px;font-size:9.5px;line-height:9.5px;color:#cdcdcd;font-weight:400;font-style:normal;transform:scaleX(0.88);transform-origin:0 0;">1600</div>
<div class="t" style="left:601.8999999999999px;top:73.16px;font-size:9.5px;line-height:9.5px;color:#cdcdcd;font-weight:400;font-style:normal;transform:scaleX(0.88);transform-origin:0 0;">1800</div>
<div class="t" style="left:654.8px;top:73.16px;font-size:9.5px;line-height:9.5px;color:#cdcdcd;font-weight:400;font-style:normal;transform:scaleX(0.88);transform-origin:0 0;">2000</div>
<div class="t" style="left:707.6999999999999px;top:73.16px;font-size:9.5px;line-height:9.5px;color:#cdcdcd;font-weight:400;font-style:normal;transform:scaleX(0.88);transform-origin:0 0;">22</div>
<svg class="a" style="left:44px;top:84px;overflow:hidden" width="17" height="609" viewBox="0 0 17 609"><path d="M15 0.8 H17" stroke="#6c6c6c" stroke-width="1"/><path d="M15 6.1 H17" stroke="#6c6c6c" stroke-width="1"/><path d="M15 11.4 H17" stroke="#6c6c6c" stroke-width="1"/><path d="M15 16.7 H17" stroke="#6c6c6c" stroke-width="1"/><path d="M13 22.0 H17" stroke="#6c6c6c" stroke-width="1"/><path d="M15 27.3 H17" stroke="#6c6c6c" stroke-width="1"/><path d="M15 32.6 H17" stroke="#6c6c6c" stroke-width="1"/><path d="M15 37.9 H17" stroke="#6c6c6c" stroke-width="1"/><path d="M15 43.2 H17" stroke="#6c6c6c" stroke-width="1"/><path d="M0 48.5 H17" stroke="#5e5e5e" stroke-width="1"/><path d="M15 53.8 H17" stroke="#6c6c6c" stroke-width="1"/><path d="M15 59.1 H17" stroke="#6c6c6c" stroke-width="1"/><path d="M15 64.4 H17" stroke="#6c6c6c" stroke-width="1"/><path d="M15 69.7 H17" stroke="#6c6c6c" stroke-width="1"/><path d="M13 75.0 H17" stroke="#6c6c6c" stroke-width="1"/><path d="M15 80.3 H17" stroke="#6c6c6c" stroke-width="1"/><path d="M15 85.6 H17" stroke="#6c6c6c" stroke-width="1"/><path d="M15 90.9 H17" stroke="#6c6c6c" stroke-width="1"/><path d="M15 96.2 H17" stroke="#6c6c6c" stroke-width="1"/><path d="M0 101.5 H17" stroke="#5e5e5e" stroke-width="1"/><path d="M15 106.8 H17" stroke="#6c6c6c" stroke-width="1"/><path d="M15 112.1 H17" stroke="#6c6c6c" stroke-width="1"/><path d="M15 117.4 H17" stroke="#6c6c6c" stroke-width="1"/><path d="M15 122.7 H17" stroke="#6c6c6c" stroke-width="1"/><path d="M13 128.0 H17" stroke="#6c6c6c" stroke-width="1"/><path d="M15 133.3 H17" stroke="#6c6c6c" stroke-width="1"/><path d="M15 138.6 H17" stroke="#6c6c6c" stroke-width="1"/><path d="M15 143.9 H17" stroke="#6c6c6c" stroke-width="1"/><path d="M15 149.2 H17" stroke="#6c6c6c" stroke-width="1"/><path d="M0 154.5 H17" stroke="#5e5e5e" stroke-width="1"/><path d="M15 159.8 H17" stroke="#6c6c6c" stroke-width="1"/><path d="M15 165.1 H17" stroke="#6c6c6c" stroke-width="1"/><path d="M15 170.4 H17" stroke="#6c6c6c" stroke-width="1"/><path d="M15 175.7 H17" stroke="#6c6c6c" stroke-width="1"/><path d="M13 181.0 H17" stroke="#6c6c6c" stroke-width="1"/><path d="M15 186.3 H17" stroke="#6c6c6c" stroke-width="1"/><path d="M15 191.6 H17" stroke="#6c6c6c" stroke-width="1"/><path d="M15 196.9 H17" stroke="#6c6c6c" stroke-width="1"/><path d="M15 202.2 H17" stroke="#6c6c6c" stroke-width="1"/><path d="M0 207.5 H17" stroke="#5e5e5e" stroke-width="1"/><path d="M15 212.8 H17" stroke="#6c6c6c" stroke-width="1"/><path d="M15 218.1 H17" stroke="#6c6c6c" stroke-width="1"/><path d="M15 223.4 H17" stroke="#6c6c6c" stroke-width="1"/><path d="M15 228.7 H17" stroke="#6c6c6c" stroke-width="1"/><path d="M13 234.0 H17" stroke="#6c6c6c" stroke-width="1"/><path d="M15 239.3 H17" stroke="#6c6c6c" stroke-width="1"/><path d="M15 244.6 H17" stroke="#6c6c6c" stroke-width="1"/><path d="M15 249.9 H17" stroke="#6c6c6c" stroke-width="1"/><path d="M15 255.2 H17" stroke="#6c6c6c" stroke-width="1"/><path d="M0 260.5 H17" stroke="#5e5e5e" stroke-width="1"/><path d="M15 265.8 H17" stroke="#6c6c6c" stroke-width="1"/><path d="M15 271.1 H17" stroke="#6c6c6c" stroke-width="1"/><path d="M15 276.4 H17" stroke="#6c6c6c" stroke-width="1"/><path d="M15 281.7 H17" stroke="#6c6c6c" stroke-width="1"/><path d="M13 287.0 H17" stroke="#6c6c6c" stroke-width="1"/><path d="M15 292.3 H17" stroke="#6c6c6c" stroke-width="1"/><path d="M15 297.6 H17" stroke="#6c6c6c" stroke-width="1"/><path d="M15 302.9 H17" stroke="#6c6c6c" stroke-width="1"/><path d="M15 308.2 H17" stroke="#6c6c6c" stroke-width="1"/><path d="M0 313.5 H17" stroke="#5e5e5e" stroke-width="1"/><path d="M15 318.8 H17" stroke="#6c6c6c" stroke-width="1"/><path d="M15 324.1 H17" stroke="#6c6c6c" stroke-width="1"/><path d="M15 329.4 H17" stroke="#6c6c6c" stroke-width="1"/><path d="M15 334.7 H17" stroke="#6c6c6c" stroke-width="1"/><path d="M13 340.0 H17" stroke="#6c6c6c" stroke-width="1"/><path d="M15 345.3 H17" stroke="#6c6c6c" stroke-width="1"/><path d="M15 350.6 H17" stroke="#6c6c6c" stroke-width="1"/><path d="M15 355.9 H17" stroke="#6c6c6c" stroke-width="1"/><path d="M15 361.2 H17" stroke="#6c6c6c" stroke-width="1"/><path d="M0 366.5 H17" stroke="#5e5e5e" stroke-width="1"/><path d="M15 371.8 H17" stroke="#6c6c6c" stroke-width="1"/><path d="M15 377.1 H17" stroke="#6c6c6c" stroke-width="1"/><path d="M15 382.4 H17" stroke="#6c6c6c" stroke-width="1"/><path d="M15 387.7 H17" stroke="#6c6c6c" stroke-width="1"/><path d="M13 393.0 H17" stroke="#6c6c6c" stroke-width="1"/><path d="M15 398.3 H17" stroke="#6c6c6c" stroke-width="1"/><path d="M15 403.6 H17" stroke="#6c6c6c" stroke-width="1"/><path d="M15 408.9 H17" stroke="#6c6c6c" stroke-width="1"/><path d="M15 414.2 H17" stroke="#6c6c6c" stroke-width="1"/><path d="M0 419.5 H17" stroke="#5e5e5e" stroke-width="1"/><path d="M15 424.8 H17" stroke="#6c6c6c" stroke-width="1"/><path d="M15 430.1 H17" stroke="#6c6c6c" stroke-width="1"/><path d="M15 435.4 H17" stroke="#6c6c6c" stroke-width="1"/><path d="M15 440.7 H17" stroke="#6c6c6c" stroke-width="1"/><path d="M13 446.0 H17" stroke="#6c6c6c" stroke-width="1"/><path d="M15 451.3 H17" stroke="#6c6c6c" stroke-width="1"/><path d="M15 456.6 H17" stroke="#6c6c6c" stroke-width="1"/><path d="M15 461.9 H17" stroke="#6c6c6c" stroke-width="1"/><path d="M15 467.2 H17" stroke="#6c6c6c" stroke-width="1"/><path d="M0 472.5 H17" stroke="#5e5e5e" stroke-width="1"/><path d="M15 477.8 H17" stroke="#6c6c6c" stroke-width="1"/><path d="M15 483.1 H17" stroke="#6c6c6c" stroke-width="1"/><path d="M15 488.4 H17" stroke="#6c6c6c" stroke-width="1"/><path d="M15 493.7 H17" stroke="#6c6c6c" stroke-width="1"/><path d="M13 499.0 H17" stroke="#6c6c6c" stroke-width="1"/><path d="M15 504.3 H17" stroke="#6c6c6c" stroke-width="1"/><path d="M15 509.6 H17" stroke="#6c6c6c" stroke-width="1"/><path d="M15 514.9 H17" stroke="#6c6c6c" stroke-width="1"/><path d="M15 520.2 H17" stroke="#6c6c6c" stroke-width="1"/><path d="M0 525.5 H17" stroke="#5e5e5e" stroke-width="1"/><path d="M15 530.8 H17" stroke="#6c6c6c" stroke-width="1"/><path d="M15 536.1 H17" stroke="#6c6c6c" stroke-width="1"/><path d="M15 541.4 H17" stroke="#6c6c6c" stroke-width="1"/><path d="M15 546.7 H17" stroke="#6c6c6c" stroke-width="1"/><path d="M13 552.0 H17" stroke="#6c6c6c" stroke-width="1"/><path d="M15 557.3 H17" stroke="#6c6c6c" stroke-width="1"/><path d="M15 562.6 H17" stroke="#6c6c6c" stroke-width="1"/><path d="M15 567.9 H17" stroke="#6c6c6c" stroke-width="1"/><path d="M15 573.2 H17" stroke="#6c6c6c" stroke-width="1"/><path d="M0 578.5 H17" stroke="#5e5e5e" stroke-width="1"/><path d="M15 583.8 H17" stroke="#6c6c6c" stroke-width="1"/><path d="M15 589.1 H17" stroke="#6c6c6c" stroke-width="1"/><path d="M15 594.4 H17" stroke="#6c6c6c" stroke-width="1"/><path d="M15 599.7 H17" stroke="#6c6c6c" stroke-width="1"/><path d="M13 605.0 H17" stroke="#6c6c6c" stroke-width="1"/></svg>
<div class="t" style="left:50.2px;top:80.06px;font-size:9.5px;line-height:9.5px;color:#cdcdcd;font-weight:400;font-style:normal;transform:scaleX(0.88);transform-origin:0 0;">2</div>
<div class="t" style="left:50.2px;top:88.36px;font-size:9.5px;line-height:9.5px;color:#cdcdcd;font-weight:400;font-style:normal;transform:scaleX(0.88);transform-origin:0 0;">0</div>
<div class="t" style="left:50.2px;top:96.66px;font-size:9.5px;line-height:9.5px;color:#cdcdcd;font-weight:400;font-style:normal;transform:scaleX(0.88);transform-origin:0 0;">0</div>
<div class="t" style="left:50.2px;top:133.06px;font-size:9.5px;line-height:9.5px;color:#cdcdcd;font-weight:400;font-style:normal;transform:scaleX(0.88);transform-origin:0 0;">0</div>
<div class="t" style="left:50.2px;top:186.06px;font-size:9.5px;line-height:9.5px;color:#cdcdcd;font-weight:400;font-style:normal;transform:scaleX(0.88);transform-origin:0 0;">2</div>
<div class="t" style="left:50.2px;top:194.36px;font-size:9.5px;line-height:9.5px;color:#cdcdcd;font-weight:400;font-style:normal;transform:scaleX(0.88);transform-origin:0 0;">0</div>
<div class="t" style="left:50.2px;top:202.66px;font-size:9.5px;line-height:9.5px;color:#cdcdcd;font-weight:400;font-style:normal;transform:scaleX(0.88);transform-origin:0 0;">0</div>
<div class="t" style="left:50.2px;top:239.06px;font-size:9.5px;line-height:9.5px;color:#cdcdcd;font-weight:400;font-style:normal;transform:scaleX(0.88);transform-origin:0 0;">4</div>
<div class="t" style="left:50.2px;top:247.36px;font-size:9.5px;line-height:9.5px;color:#cdcdcd;font-weight:400;font-style:normal;transform:scaleX(0.88);transform-origin:0 0;">0</div>
<div class="t" style="left:50.2px;top:255.66px;font-size:9.5px;line-height:9.5px;color:#cdcdcd;font-weight:400;font-style:normal;transform:scaleX(0.88);transform-origin:0 0;">0</div>
<div class="t" style="left:50.2px;top:292.06px;font-size:9.5px;line-height:9.5px;color:#cdcdcd;font-weight:400;font-style:normal;transform:scaleX(0.88);transform-origin:0 0;">6</div>
<div class="t" style="left:50.2px;top:300.36px;font-size:9.5px;line-height:9.5px;color:#cdcdcd;font-weight:400;font-style:normal;transform:scaleX(0.88);transform-origin:0 0;">0</div>
<div class="t" style="left:50.2px;top:308.66px;font-size:9.5px;line-height:9.5px;color:#cdcdcd;font-weight:400;font-style:normal;transform:scaleX(0.88);transform-origin:0 0;">0</div>
<div class="t" style="left:50.2px;top:345.06px;font-size:9.5px;line-height:9.5px;color:#cdcdcd;font-weight:400;font-style:normal;transform:scaleX(0.88);transform-origin:0 0;">8</div>
<div class="t" style="left:50.2px;top:353.36px;font-size:9.5px;line-height:9.5px;color:#cdcdcd;font-weight:400;font-style:normal;transform:scaleX(0.88);transform-origin:0 0;">0</div>
<div class="t" style="left:50.2px;top:361.66px;font-size:9.5px;line-height:9.5px;color:#cdcdcd;font-weight:400;font-style:normal;transform:scaleX(0.88);transform-origin:0 0;">0</div>
<div class="t" style="left:50.2px;top:398.06px;font-size:9.5px;line-height:9.5px;color:#cdcdcd;font-weight:400;font-style:normal;transform:scaleX(0.88);transform-origin:0 0;">1</div>
<div class="t" style="left:50.2px;top:406.36px;font-size:9.5px;line-height:9.5px;color:#cdcdcd;font-weight:400;font-style:normal;transform:scaleX(0.88);transform-origin:0 0;">0</div>
<div class="t" style="left:50.2px;top:414.66px;font-size:9.5px;line-height:9.5px;color:#cdcdcd;font-weight:400;font-style:normal;transform:scaleX(0.88);transform-origin:0 0;">0</div>
<div class="t" style="left:50.2px;top:422.96px;font-size:9.5px;line-height:9.5px;color:#cdcdcd;font-weight:400;font-style:normal;transform:scaleX(0.88);transform-origin:0 0;">0</div>
<div class="t" style="left:50.2px;top:451.06px;font-size:9.5px;line-height:9.5px;color:#cdcdcd;font-weight:400;font-style:normal;transform:scaleX(0.88);transform-origin:0 0;">1</div>
<div class="t" style="left:50.2px;top:459.36px;font-size:9.5px;line-height:9.5px;color:#cdcdcd;font-weight:400;font-style:normal;transform:scaleX(0.88);transform-origin:0 0;">2</div>
<div class="t" style="left:50.2px;top:467.66px;font-size:9.5px;line-height:9.5px;color:#cdcdcd;font-weight:400;font-style:normal;transform:scaleX(0.88);transform-origin:0 0;">0</div>
<div class="t" style="left:50.2px;top:475.96px;font-size:9.5px;line-height:9.5px;color:#cdcdcd;font-weight:400;font-style:normal;transform:scaleX(0.88);transform-origin:0 0;">0</div>
<div class="t" style="left:50.2px;top:504.06px;font-size:9.5px;line-height:9.5px;color:#cdcdcd;font-weight:400;font-style:normal;transform:scaleX(0.88);transform-origin:0 0;">1</div>
<div class="t" style="left:50.2px;top:512.36px;font-size:9.5px;line-height:9.5px;color:#cdcdcd;font-weight:400;font-style:normal;transform:scaleX(0.88);transform-origin:0 0;">4</div>
<div class="t" style="left:50.2px;top:520.66px;font-size:9.5px;line-height:9.5px;color:#cdcdcd;font-weight:400;font-style:normal;transform:scaleX(0.88);transform-origin:0 0;">0</div>
<div class="t" style="left:50.2px;top:528.96px;font-size:9.5px;line-height:9.5px;color:#cdcdcd;font-weight:400;font-style:normal;transform:scaleX(0.88);transform-origin:0 0;">0</div>
<div class="t" style="left:50.2px;top:557.06px;font-size:9.5px;line-height:9.5px;color:#cdcdcd;font-weight:400;font-style:normal;transform:scaleX(0.88);transform-origin:0 0;">1</div>
<div class="t" style="left:50.2px;top:565.36px;font-size:9.5px;line-height:9.5px;color:#cdcdcd;font-weight:400;font-style:normal;transform:scaleX(0.88);transform-origin:0 0;">6</div>
<div class="t" style="left:50.2px;top:573.66px;font-size:9.5px;line-height:9.5px;color:#cdcdcd;font-weight:400;font-style:normal;transform:scaleX(0.88);transform-origin:0 0;">0</div>
<div class="t" style="left:50.2px;top:581.96px;font-size:9.5px;line-height:9.5px;color:#cdcdcd;font-weight:400;font-style:normal;transform:scaleX(0.88);transform-origin:0 0;">0</div>
<div class="t" style="left:50.2px;top:610.06px;font-size:9.5px;line-height:9.5px;color:#cdcdcd;font-weight:400;font-style:normal;transform:scaleX(0.88);transform-origin:0 0;">1</div>
<div class="t" style="left:50.2px;top:618.36px;font-size:9.5px;line-height:9.5px;color:#cdcdcd;font-weight:400;font-style:normal;transform:scaleX(0.88);transform-origin:0 0;">8</div>
<div class="t" style="left:50.2px;top:626.66px;font-size:9.5px;line-height:9.5px;color:#cdcdcd;font-weight:400;font-style:normal;transform:scaleX(0.88);transform-origin:0 0;">0</div>
<div class="t" style="left:50.2px;top:634.96px;font-size:9.5px;line-height:9.5px;color:#cdcdcd;font-weight:400;font-style:normal;transform:scaleX(0.88);transform-origin:0 0;">0</div>
<div class="t" style="left:50.2px;top:663.06px;font-size:9.5px;line-height:9.5px;color:#cdcdcd;font-weight:400;font-style:normal;transform:scaleX(0.88);transform-origin:0 0;">2</div>
<div class="t" style="left:50.2px;top:671.36px;font-size:9.5px;line-height:9.5px;color:#cdcdcd;font-weight:400;font-style:normal;transform:scaleX(0.88);transform-origin:0 0;">0</div>
<div class="t" style="left:50.2px;top:679.66px;font-size:9.5px;line-height:9.5px;color:#cdcdcd;font-weight:400;font-style:normal;transform:scaleX(0.88);transform-origin:0 0;">0</div>
<div class="a" style="left:44px;top:67px;width:17px;height:17px;background:#4a4a4a;"></div>
<div class="a" style="left:44px;top:84px;width:14px;height:1.8px;background:#4a4a4a;"></div>
<svg class="a" style="left:44px;top:67px;" width="17" height="17" viewBox="0 0 17 17"><path d="M5.5 0 V17 M11.5 0 V17 M0 5.5 H17 M0 11.5 H17" stroke="#545454" stroke-width="1"/></svg>
<div class="a" style="left:61px;top:84px;width:654px;height:609px;background:#282828;"></div>
<div class="a" style="left:715px;top:84px;width:16px;height:609px;background:#494949;"></div>
<div class="a" style="left:718px;top:319px;width:11px;height:292px;background:#6a6a6a;border-radius:1px"></div>
<div class="a" style="left:124px;top:132px;width:529px;height:530px;background:#ffffff;box-shadow:0 0 0 1px #161616"></div>
<svg class="a" style="left:440px;top:215px;" width="100" height="100" viewBox="0 0 100 100"><defs><radialGradient id="pg" cx="0.42" cy="0.5" r="0.55"><stop offset="0" stop-color="#e2d49a"/><stop offset="0.3" stop-color="#eac8c4"/><stop offset="0.75" stop-color="#ecc0d8"/><stop offset="1" stop-color="#e8b6d2"/></radialGradient></defs><path d="M14 34 Q28 20 52 14 Q70 9 83 10 Q87 24 84 42 Q80 64 66 81 L30 60 Q18 46 14 34 Z" fill="url(#pg)"/><path d="M36 50 Q58 30 82 12" fill="none" stroke="#d9a3bd" stroke-width="0.8"/></svg>
<svg class="a" style="left:205.5px;top:217.0px;" width="360" height="360" viewBox="0 0 360 360"><path d="M181.5 179.0 Q171.7 122.2 187.1 78.2 M181.5 179.0 Q189.9 122.2 218.2 85.4 M181.5 179.0 Q207.1 127.8 245.6 101.9 M181.5 179.0 Q221.8 138.5 266.5 125.9 M181.5 179.0 Q232.5 153.2 279.0 155.3 M181.5 179.0 Q238.1 170.4 281.8 187.1 M181.5 179.0 Q238.1 188.6 274.6 218.2 M181.5 179.0 Q232.5 205.8 258.1 245.6 M181.5 179.0 Q221.8 220.5 234.1 266.5 M181.5 179.0 Q207.1 231.2 204.7 279.0 M181.5 179.0 Q189.9 236.8 172.9 281.8 M181.5 179.0 Q171.7 236.8 141.8 274.6 M181.5 179.0 Q154.5 231.2 114.4 258.1 M181.5 179.0 Q139.8 220.5 93.5 234.1 M181.5 179.0 Q129.1 205.8 81.0 204.7 M181.5 179.0 Q123.5 188.6 78.2 172.9 M181.5 179.0 Q123.5 170.4 85.4 141.8 M181.5 179.0 Q129.1 153.2 101.9 114.4 M181.5 179.0 Q139.8 138.5 125.9 93.5 M181.5 179.0 Q154.5 127.8 155.3 81.0" fill="none" stroke="#5f6b3a" stroke-width="3.8"/><path d="M181.5 179.0 Q171.7 122.2 187.1 78.2 M181.5 179.0 Q189.9 122.2 218.2 85.4 M181.5 179.0 Q207.1 127.8 245.6 101.9 M181.5 179.0 Q221.8 138.5 266.5 125.9 M181.5 179.0 Q232.5 153.2 279.0 155.3 M181.5 179.0 Q238.1 170.4 281.8 187.1 M181.5 179.0 Q238.1 188.6 274.6 218.2 M181.5 179.0 Q232.5 205.8 258.1 245.6 M181.5 179.0 Q221.8 220.5 234.1 266.5 M181.5 179.0 Q207.1 231.2 204.7 279.0 M181.5 179.0 Q189.9 236.8 172.9 281.8 M181.5 179.0 Q171.7 236.8 141.8 274.6 M181.5 179.0 Q154.5 231.2 114.4 258.1 M181.5 179.0 Q139.8 220.5 93.5 234.1 M181.5 179.0 Q129.1 205.8 81.0 204.7 M181.5 179.0 Q123.5 188.6 78.2 172.9 M181.5 179.0 Q123.5 170.4 85.4 141.8 M181.5 179.0 Q129.1 153.2 101.9 114.4 M181.5 179.0 Q139.8 138.5 125.9 93.5 M181.5 179.0 Q154.5 127.8 155.3 81.0" fill="none" stroke="#bfc590" stroke-width="1.7"/><path d="M340.5 180.0 L341.0 181.9 L342.5 183.8 L340.3 185.6 L340.3 187.5 L340.4 189.3 L338.2 191.1 L339.3 193.0 L339.4 194.9 L339.6 196.8 L335.8 198.2 L336.1 200.1 L334.4 201.7 L336.7 203.9 L335.1 205.5 L330.4 206.5 L335.7 209.3 L336.1 211.3 L334.9 212.9 L334.9 214.8 L332.9 216.2 L332.3 218.0 L334.4 220.4 L332.2 221.7 L332.5 223.7 L332.4 225.6 L331.1 227.2 L332.6 229.6 L332.0 231.3 L333.1 233.7 L331.1 235.0 L331.0 236.9 L329.7 238.5 L329.6 240.4 L327.9 241.8 L326.2 243.1 L328.2 246.0 L327.2 247.6 L325.5 248.9 L323.8 250.2 L321.1 250.9 L319.5 252.1 L318.4 253.6 L316.1 254.4 L317.3 257.2 L313.6 257.2 L315.8 260.5 L313.7 261.4 L315.5 264.7 L314.5 266.3 L310.7 266.0 L310.8 268.2 L312.7 271.8 L310.2 272.3 L311.2 275.3 L308.2 275.4 L306.0 276.1 L307.0 279.2 L306.4 281.2 L303.5 281.2 L301.7 282.1 L301.3 284.3 L302.2 287.5 L300.2 288.2 L296.7 287.6 L295.7 289.2 L293.8 289.9 L292.2 290.9 L293.0 294.4 L289.5 293.4 L289.1 295.6 L287.1 296.2 L284.6 296.2 L284.4 298.7 L280.8 297.3 L279.9 299.0 L278.0 299.6 L277.9 302.4 L276.3 303.3 L275.3 305.0 L276.0 309.0 L274.3 309.8 L271.7 309.4 L271.9 312.8 L268.8 311.6 L267.8 313.5 L267.5 316.4 L265.4 316.7 L262.6 315.7 L263.1 320.1 L259.7 318.1 L258.2 319.2 L257.7 322.1 L255.0 321.1 L253.2 321.7 L251.1 321.5 L249.3 322.2 L248.5 324.7 L246.1 323.9 L244.9 325.8 L242.6 325.2 L240.9 325.8 L239.9 328.1 L237.1 326.3 L235.3 326.6 L233.5 327.0 L231.3 326.1 L229.8 327.4 L229.3 331.7 L227.6 332.4 L225.2 331.0 L223.5 331.6 L222.5 334.8 L221.0 336.5 L218.4 334.0 L217.4 337.9 L215.6 338.2 L213.5 337.5 L211.5 337.2 L209.4 336.2 L207.6 336.3 L206.4 340.7 L204.0 337.7 L202.5 339.9 L200.3 338.0 L198.8 340.6 L196.8 339.6 L194.8 338.2 L192.9 337.5 L191.2 339.7 L189.1 336.5 L187.3 336.9 L185.5 337.9 L183.7 338.6 L181.8 336.8 L180.0 333.8 L178.2 338.2 L176.4 335.7 L174.6 335.4 L172.7 337.0 L170.8 338.2 L169.0 336.8 L167.1 337.5 L165.2 338.5 L163.2 339.5 L161.6 337.5 L159.6 338.5 L157.4 340.8 L155.5 341.0 L153.8 339.3 L151.9 339.2 L150.2 338.3 L148.7 336.0 L147.1 335.0 L145.3 334.4 L142.6 337.7 L141.1 336.2 L139.0 336.6 L138.4 331.7 L136.0 333.5 L134.5 332.0 L132.5 332.1 L131.5 329.2 L129.0 331.0 L128.9 325.7 L127.0 325.6 L124.5 327.2 L122.2 328.0 L120.5 327.2 L118.7 326.9 L116.6 326.9 L114.5 327.1 L113.7 324.3 L111.3 325.2 L109.1 325.5 L107.3 324.7 L106.5 322.2 L104.0 322.9 L102.1 322.4 L101.1 320.4 L99.3 319.7 L98.3 317.8 L96.3 317.6 L94.7 316.6 L94.4 313.5 L91.6 314.4 L89.3 314.5 L88.1 312.8 L87.2 310.9 L86.8 308.3 L84.6 308.2 L83.8 306.1 L83.1 304.1 L80.9 303.8 L82.1 299.4 L79.8 299.4 L79.5 296.9 L76.0 298.3 L74.5 297.1 L73.6 295.5 L70.5 296.1 L69.5 294.4 L67.5 293.8 L65.0 293.6 L65.7 290.4 L65.0 288.5 L62.7 288.1 L60.1 288.0 L60.4 285.2 L59.2 283.8 L55.5 284.5 L55.1 282.3 L54.8 280.2 L52.1 279.9 L53.1 276.8 L50.9 276.1 L51.6 273.3 L49.9 272.2 L47.7 271.5 L46.5 270.0 L46.0 268.2 L47.2 265.1 L45.9 263.8 L46.5 261.3 L47.0 258.9 L46.0 257.4 L42.4 257.3 L40.8 256.1 L39.9 254.5 L37.6 253.6 L39.1 250.8 L38.3 249.1 L36.1 248.1 L35.7 246.3 L35.0 244.6 L33.2 243.3 L31.4 242.0 L31.1 240.1 L31.1 238.1 L28.2 237.3 L26.9 235.7 L28.5 233.1 L29.6 230.8 L29.3 229.0 L25.3 228.3 L28.5 225.4 L25.3 224.4 L25.6 222.3 L26.6 220.2 L24.3 218.8 L27.7 216.1 L27.2 214.3 L25.9 212.7 L28.1 210.5 L24.9 209.2 L28.8 206.7 L27.4 205.1 L26.7 203.4 L23.2 202.0 L23.3 200.2 L21.8 198.5 L21.1 196.7 L19.8 195.0 L18.7 193.2 L19.5 191.2 L21.4 189.2 L19.9 187.5 L21.0 185.6 L21.6 183.7 L19.4 181.9 L18.3 180.0 L20.7 178.1 L20.4 176.3 L20.2 174.4 L18.9 172.5 L19.9 170.7 L19.8 168.8 L19.6 166.9 L21.7 165.2 L20.5 163.2 L20.5 161.4 L24.9 160.0 L21.9 157.8 L23.7 156.2 L27.4 154.9 L27.8 153.2 L25.8 151.0 L24.2 148.8 L26.3 147.3 L25.3 145.2 L23.9 143.0 L24.3 141.2 L23.8 139.1 L26.1 137.8 L25.5 135.7 L27.8 134.4 L25.9 131.9 L25.9 129.9 L27.2 128.4 L27.4 126.5 L30.2 125.5 L27.9 122.6 L28.3 120.8 L29.1 119.0 L31.8 118.1 L31.7 116.0 L34.5 115.2 L33.1 112.6 L34.4 111.1 L37.6 110.5 L39.9 109.6 L39.7 107.5 L40.5 105.9 L41.1 104.1 L43.8 103.5 L47.8 103.7 L44.4 99.6 L47.5 99.3 L45.1 95.7 L48.0 95.4 L48.0 93.2 L47.0 90.3 L50.2 90.2 L50.9 88.5 L50.5 85.9 L50.6 83.7 L51.2 81.8 L52.8 80.6 L53.0 78.4 L55.7 78.1 L55.3 75.4 L59.5 76.5 L60.3 74.7 L60.6 72.5 L62.7 71.9 L62.7 69.3 L64.4 68.4 L66.3 67.6 L66.8 65.5 L69.3 65.4 L71.7 65.2 L73.1 64.0 L73.4 61.6 L75.1 60.7 L79.0 62.4 L79.5 60.2 L79.6 57.5 L81.8 57.3 L82.7 55.5 L84.8 55.2 L85.1 52.6 L86.5 51.3 L87.5 49.5 L90.3 50.3 L89.3 45.6 L91.9 46.0 L93.6 45.3 L94.2 42.7 L96.3 42.5 L98.0 41.8 L99.2 40.0 L102.2 41.6 L102.8 38.9 L104.8 38.6 L105.4 35.7 L107.2 35.1 L110.3 37.1 L111.7 35.7 L114.1 36.6 L115.4 34.9 L116.6 33.0 L118.3 32.3 L121.0 33.9 L123.2 34.4 L125.3 35.1 L126.9 34.1 L127.6 30.7 L130.3 32.8 L130.9 28.8 L133.5 31.0 L134.9 29.3 L136.5 28.2 L137.6 25.4 L139.7 26.2 L141.4 25.4 L142.9 23.5 L145.2 25.2 L146.4 21.9 L148.8 24.1 L150.2 22.0 L152.3 22.8 L154.2 22.7 L155.8 21.0 L157.7 21.3 L159.6 21.4 L161.4 21.2 L163.3 20.7 L165.3 22.4 L167.1 22.4 L168.9 20.7 L170.7 20.9 L172.6 21.8 L174.4 20.8 L176.3 22.5 L178.2 22.1 L180.0 26.5 L181.8 22.6 L183.7 21.6 L185.6 20.6 L187.3 22.8 L189.2 22.4 L191.2 19.4 L192.9 22.3 L195.1 18.7 L196.9 19.1 L198.4 22.5 L200.3 22.0 L202.5 20.0 L204.0 22.2 L205.8 23.2 L208.2 20.2 L209.7 22.4 L211.8 21.2 L213.0 24.6 L215.1 23.9 L217.1 23.3 L218.2 26.8 L220.1 26.7 L222.4 25.4 L224.4 25.3 L226.1 25.9 L226.6 30.6 L228.7 30.0 L230.6 30.1 L231.7 32.5 L233.2 33.8 L234.7 35.1 L236.4 35.5 L238.4 35.4 L240.2 35.9 L243.0 34.1 L244.7 34.6 L246.7 34.8 L247.7 37.0 L249.5 37.4 L251.3 38.0 L254.4 36.1 L256.4 36.3 L258.0 37.3 L257.8 41.5 L259.4 42.5 L263.0 40.0 L263.5 42.9 L265.7 42.8 L266.2 45.6 L268.0 46.2 L269.5 47.3 L270.7 48.9 L272.5 49.5 L272.2 53.0 L275.3 52.0 L276.9 52.9 L276.2 56.8 L278.0 57.5 L279.7 58.3 L279.2 61.8 L281.0 62.5 L282.8 63.2 L285.6 62.8 L285.8 65.2 L290.1 63.3 L291.5 64.6 L292.7 65.9 L294.8 66.5 L295.5 68.4 L296.3 70.3 L298.3 71.0 L299.3 72.5 L302.3 72.5 L303.0 74.4 L302.3 77.4 L305.8 77.0 L306.3 78.9 L307.5 80.4 L308.7 81.8 L308.2 84.6 L310.9 84.9 L311.7 86.6 L311.9 88.8 L312.9 90.4 L313.6 92.1 L312.9 94.8 L314.6 95.9 L312.5 99.3 L313.8 100.6 L313.9 102.7 L314.3 104.5 L317.3 105.0 L319.8 105.7 L321.1 107.1 L320.7 109.3 L324.8 109.4 L324.8 111.4 L324.5 113.6 L326.9 114.6 L327.4 116.4 L328.2 118.1 L328.4 120.0 L331.8 120.7 L331.0 123.0 L331.9 124.7 L332.8 126.4 L334.3 127.9 L330.7 131.0 L333.6 132.0 L334.6 133.7 L332.8 136.2 L333.7 137.9 L332.3 140.1 L333.1 141.8 L333.9 143.5 L332.6 145.7 L333.2 147.4 L335.8 148.8 L333.8 151.0 L332.4 153.1 L336.3 154.3 L335.6 156.3 L338.4 157.7 L337.6 159.7 L339.0 161.4 L336.3 163.6 L339.2 165.1 L340.4 166.9 L337.6 169.0 L341.9 170.6 L338.7 172.6 L340.3 174.4 L339.1 176.3 L340.7 178.1Z M275.3 180.0 L273.5 178.9 L275.3 177.8 L273.8 176.7 L273.7 175.6 L273.6 174.5 L272.8 173.5 L272.4 172.5 L273.0 171.3 L272.5 170.3 L271.6 169.3 L272.4 168.1 L271.2 167.2 L270.3 166.2 L270.7 165.1 L270.0 164.1 L270.1 163.0 L271.3 161.7 L270.3 160.8 L271.3 159.5 L270.9 158.5 L269.1 157.8 L271.1 156.1 L270.9 155.1 L268.8 154.5 L270.6 152.9 L269.4 152.1 L269.4 151.0 L270.4 149.5 L268.7 148.9 L269.3 147.5 L269.5 146.2 L268.3 145.5 L267.1 144.8 L267.6 143.4 L266.6 142.6 L265.5 141.9 L263.8 141.5 L264.4 140.1 L263.4 139.3 L262.3 138.7 L261.4 137.9 L261.8 136.5 L260.4 136.0 L260.5 134.7 L260.5 133.5 L259.5 132.9 L258.6 132.2 L258.7 130.8 L257.9 130.1 L258.1 128.7 L257.1 128.0 L257.5 126.4 L256.9 125.5 L256.0 124.8 L254.5 124.5 L253.8 123.7 L254.8 121.5 L254.2 120.7 L253.4 119.9 L252.5 119.2 L251.3 118.7 L251.1 117.4 L250.0 117.0 L249.1 116.3 L248.3 115.6 L247.6 114.7 L245.7 115.0 L245.0 114.3 L245.3 112.4 L244.3 111.8 L243.4 111.2 L241.2 112.0 L240.4 111.3 L239.9 110.2 L239.3 109.3 L238.8 108.2 L237.2 108.5 L237.1 107.0 L235.6 107.1 L234.8 106.4 L234.8 104.5 L233.9 104.0 L233.2 103.1 L232.0 102.8 L231.4 101.9 L230.2 101.6 L229.6 100.6 L229.3 99.0 L228.7 97.9 L227.0 98.6 L225.9 98.3 L225.6 96.6 L224.3 96.7 L223.4 96.1 L221.7 97.0 L220.8 96.2 L219.6 96.3 L219.1 94.8 L217.7 95.4 L216.9 94.5 L216.2 93.4 L214.5 94.5 L213.7 93.7 L212.9 92.9 L212.0 92.1 L210.6 92.9 L209.5 92.6 L208.3 92.9 L207.9 90.7 L206.3 92.1 L205.3 91.7 L204.6 90.1 L203.6 89.9 L202.7 89.0 L201.5 89.4 L200.7 87.9 L199.3 89.0 L198.4 88.2 L197.6 86.7 L196.3 87.4 L195.3 87.1 L194.3 86.3 L193.2 86.4 L191.9 87.5 L190.8 87.9 L189.7 87.5 L188.7 86.7 L187.5 87.6 L186.4 88.3 L185.4 86.9 L184.3 87.3 L183.3 86.5 L182.2 86.4 L181.1 86.5 L180.0 87.6 L178.9 86.8 L177.9 87.9 L176.8 87.9 L175.7 87.7 L174.5 86.3 L173.5 86.4 L172.5 87.9 L171.4 87.5 L170.3 87.5 L169.2 87.4 L168.1 87.2 L167.0 87.2 L165.9 87.5 L164.6 86.5 L163.4 85.7 L162.5 86.9 L161.3 86.8 L160.4 87.9 L159.6 89.3 L158.3 88.4 L157.2 88.5 L156.5 90.4 L155.7 91.4 L154.4 90.7 L153.4 91.0 L152.3 91.4 L151.0 90.9 L150.3 92.0 L149.1 92.0 L148.7 94.1 L147.3 93.3 L146.1 93.2 L145.7 95.1 L144.7 95.4 L143.0 94.3 L141.8 94.3 L141.6 96.4 L140.0 95.5 L139.4 96.9 L137.7 95.9 L136.8 96.4 L136.1 97.5 L135.1 97.9 L133.3 97.0 L132.5 97.7 L131.4 98.1 L131.1 99.7 L130.4 100.6 L128.8 100.1 L128.4 101.5 L127.8 102.6 L126.9 103.3 L125.9 103.7 L125.1 104.4 L124.0 104.8 L123.9 106.5 L122.5 106.4 L121.9 107.4 L120.8 107.8 L120.1 108.6 L119.2 109.2 L118.3 109.8 L117.3 110.4 L117.0 111.6 L116.3 112.5 L115.1 112.8 L114.1 113.3 L113.9 114.6 L113.0 115.3 L112.6 116.4 L110.6 116.0 L109.3 116.3 L109.4 117.9 L108.9 118.9 L107.8 119.4 L107.0 120.2 L106.8 121.4 L105.0 121.4 L106.3 123.8 L105.3 124.4 L105.2 125.7 L103.7 125.9 L102.9 126.7 L103.6 128.5 L103.4 129.6 L102.1 130.0 L101.3 130.8 L100.1 131.4 L101.4 133.4 L100.7 134.2 L100.0 135.1 L99.4 135.9 L98.8 136.8 L97.2 137.2 L96.9 138.3 L97.1 139.6 L96.6 140.5 L95.8 141.3 L95.4 142.3 L93.5 142.7 L93.9 144.0 L92.7 144.7 L91.5 145.4 L91.5 146.6 L91.3 147.7 L89.9 148.4 L89.7 149.5 L90.9 151.1 L90.4 152.0 L89.3 152.9 L90.3 154.3 L90.8 155.5 L91.0 156.7 L88.8 157.3 L89.0 158.4 L89.9 159.7 L89.4 160.7 L89.2 161.8 L89.6 163.0 L87.7 163.7 L88.3 164.9 L89.1 166.1 L89.5 167.3 L88.1 168.2 L88.2 169.3 L86.9 170.2 L86.9 171.3 L86.9 172.4 L87.7 173.5 L87.4 174.6 L86.7 175.7 L86.6 176.7 L84.9 177.8 L85.4 178.9 L84.7 180.0 L84.2 181.1 L86.3 182.2 L86.0 183.3 L87.2 184.3 L85.9 185.5 L88.1 186.4 L86.4 187.6 L86.5 188.7 L86.9 189.8 L88.9 190.7 L88.6 191.8 L87.8 193.0 L89.5 193.8 L88.8 195.0 L89.0 196.0 L88.0 197.3 L89.1 198.2 L88.6 199.4 L90.0 200.2 L89.1 201.6 L90.1 202.4 L89.0 203.8 L91.1 204.4 L89.5 206.0 L91.0 206.6 L90.4 208.0 L90.5 209.1 L91.5 209.9 L90.0 211.6 L91.2 212.3 L91.9 213.2 L93.1 213.9 L93.3 215.0 L93.5 216.1 L93.6 217.3 L95.0 217.8 L94.9 219.1 L96.8 219.4 L96.7 220.6 L97.2 221.6 L96.7 223.1 L97.5 223.8 L98.5 224.6 L100.4 224.7 L100.1 226.1 L100.0 227.4 L101.5 227.8 L101.3 229.2 L102.1 230.0 L103.5 230.3 L102.0 232.6 L102.9 233.3 L104.6 233.5 L104.2 235.0 L105.4 235.6 L105.7 236.7 L105.8 237.9 L106.8 238.6 L107.1 239.7 L107.4 240.9 L107.9 241.9 L109.6 241.9 L110.7 242.4 L110.6 243.9 L112.2 243.9 L112.1 245.6 L113.6 245.6 L114.2 246.5 L115.8 246.5 L115.8 248.1 L117.9 247.4 L118.6 248.2 L119.5 248.8 L119.4 250.5 L120.2 251.2 L121.9 251.0 L122.3 252.1 L122.5 253.6 L123.7 253.9 L125.2 253.6 L125.8 254.6 L126.7 255.2 L127.5 255.9 L127.9 257.2 L129.1 257.3 L128.8 259.8 L130.3 259.6 L131.0 260.6 L131.6 261.7 L132.2 262.8 L133.3 263.1 L134.9 262.5 L136.0 262.7 L137.0 263.1 L138.5 262.6 L139.2 263.7 L139.9 264.7 L140.7 265.6 L141.9 265.5 L143.1 265.5 L144.2 265.8 L145.7 264.8 L146.5 265.8 L147.5 266.2 L148.2 267.3 L149.7 266.4 L150.5 267.4 L151.4 268.1 L152.2 269.1 L153.2 269.6 L154.3 269.5 L155.6 268.9 L156.2 270.8 L157.2 271.5 L158.4 271.2 L159.5 271.2 L160.5 272.0 L161.6 271.6 L162.4 273.5 L163.3 274.7 L164.7 273.4 L165.7 273.7 L166.8 273.9 L168.1 272.3 L169.0 274.0 L170.2 273.2 L171.4 272.1 L172.5 271.7 L173.6 272.1 L174.6 272.8 L175.7 273.0 L176.8 272.1 L177.8 273.5 L178.9 272.2 L180.0 272.4 L181.1 271.6 L182.2 273.7 L183.2 271.7 L184.4 273.5 L185.4 272.7 L186.5 272.8 L187.6 272.9 L188.6 272.2 L189.9 273.8 L191.0 274.1 L192.1 273.8 L193.1 273.3 L194.1 272.3 L195.5 274.1 L196.4 273.1 L197.7 273.9 L198.4 271.8 L199.6 272.1 L200.7 272.3 L201.4 270.3 L202.6 270.7 L203.3 269.2 L204.3 268.6 L205.4 268.6 L206.9 270.0 L207.9 269.5 L208.7 268.4 L209.5 267.2 L210.8 267.7 L211.8 267.5 L212.5 266.3 L213.7 266.4 L215.0 266.5 L215.3 264.4 L216.5 264.5 L217.8 264.8 L218.5 263.8 L219.8 264.0 L221.0 264.1 L221.6 262.9 L223.1 263.4 L223.9 262.5 L225.3 262.9 L226.1 262.1 L227.7 262.6 L227.7 260.4 L229.2 260.9 L229.4 259.0 L231.2 259.9 L231.5 258.4 L232.2 257.3 L232.9 256.5 L234.0 256.1 L234.9 255.5 L235.8 254.9 L236.6 254.2 L237.0 252.9 L238.6 253.2 L239.2 252.2 L240.0 251.5 L240.1 250.0 L241.0 249.4 L242.1 248.9 L243.5 248.9 L243.7 247.5 L244.6 246.9 L245.3 246.0 L247.0 246.2 L246.9 244.6 L247.3 243.5 L249.4 243.9 L250.6 243.6 L251.2 242.6 L251.9 241.8 L253.2 241.5 L252.8 239.7 L253.8 239.1 L253.3 237.3 L253.9 236.3 L254.9 235.8 L255.5 234.9 L255.8 233.7 L255.6 232.3 L257.4 232.2 L257.6 231.0 L257.5 229.7 L258.1 228.8 L258.8 228.0 L259.0 226.9 L259.2 225.7 L261.5 225.8 L262.2 224.9 L262.1 223.7 L263.1 223.0 L262.7 221.6 L264.1 221.0 L263.5 219.5 L265.2 219.1 L265.4 218.0 L266.8 217.4 L265.7 215.8 L267.8 215.5 L267.0 214.0 L268.6 213.4 L270.3 212.9 L268.1 210.9 L268.7 210.0 L269.0 208.9 L269.1 207.8 L268.6 206.5 L270.7 206.0 L270.6 204.8 L269.8 203.5 L269.8 202.4 L270.5 201.4 L269.4 200.1 L269.5 199.0 L271.7 198.4 L270.5 197.0 L271.1 196.1 L272.3 195.2 L272.6 194.1 L271.6 192.9 L271.2 191.7 L271.7 190.7 L273.4 189.8 L273.6 188.7 L272.1 187.5 L273.9 186.6 L273.1 185.4 L273.6 184.4 L273.2 183.3 L275.2 182.2 L275.8 181.1Z" fill="#a63b2d" fill-rule="evenodd"/><ellipse cx="118.2" cy="54.3" rx="12.8" ry="10.6" transform="rotate(-48.7 118.2 54.3)" fill="#b8473a" stroke="#7e2a1d" stroke-width="0.7"/><ellipse cx="141.5" cy="43.8" rx="15.8" ry="8.8" transform="rotate(-19.8 141.5 43.8)" fill="#ad3f31" stroke="#7e2a1d" stroke-width="0.7"/><ellipse cx="165.9" cy="38.0" rx="15.1" ry="9.2" transform="rotate(-22.2 165.9 38.0)" fill="#a43729" stroke="#7e2a1d" stroke-width="0.7"/><ellipse cx="188.5" cy="39.7" rx="13.1" ry="10.2" transform="rotate(3.6 188.5 39.7)" fill="#a43729" stroke="#7e2a1d" stroke-width="0.7"/><ellipse cx="218.4" cy="47.5" rx="14.6" ry="10.7" transform="rotate(20.7 218.4 47.5)" fill="#ad3f31" stroke="#7e2a1d" stroke-width="0.7"/><ellipse cx="244.3" cy="53.2" rx="12.7" ry="8.7" transform="rotate(8.5 244.3 53.2)" fill="#b8473a" stroke="#7e2a1d" stroke-width="0.7"/><ellipse cx="167.8" cy="44.9" rx="15.7" ry="8.2" transform="rotate(15.2 167.8 44.9)" fill="#b8473a" stroke="#7e2a1d" stroke-width="0.7"/><ellipse cx="192.9" cy="43.3" rx="13.0" ry="10.4" transform="rotate(-15.2 192.9 43.3)" fill="#a43729" stroke="#7e2a1d" stroke-width="0.7"/><ellipse cx="219.8" cy="49.4" rx="12.7" ry="10.2" transform="rotate(-6.6 219.8 49.4)" fill="#ad3f31" stroke="#7e2a1d" stroke-width="0.7"/><ellipse cx="241.3" cy="59.4" rx="13.8" ry="10.3" transform="rotate(21.2 241.3 59.4)" fill="#bd4c3a" stroke="#7e2a1d" stroke-width="0.7"/><ellipse cx="254.3" cy="66.7" rx="15.1" ry="10.7" transform="rotate(24.3 254.3 66.7)" fill="#bd4c3a" stroke="#7e2a1d" stroke-width="0.7"/><ellipse cx="280.3" cy="83.6" rx="14.0" ry="10.5" transform="rotate(55.3 280.3 83.6)" fill="#b34234" stroke="#7e2a1d" stroke-width="0.7"/><ellipse cx="218.3" cy="46.1" rx="14.4" ry="10.3" transform="rotate(-3.4 218.3 46.1)" fill="#bd4c3a" stroke="#7e2a1d" stroke-width="0.7"/><ellipse cx="236.2" cy="53.4" rx="15.1" ry="10.4" transform="rotate(38.5 236.2 53.4)" fill="#ad3f31" stroke="#7e2a1d" stroke-width="0.7"/><ellipse cx="258.0" cy="64.5" rx="15.4" ry="9.8" transform="rotate(22.1 258.0 64.5)" fill="#ad3f31" stroke="#7e2a1d" stroke-width="0.7"/><ellipse cx="280.2" cy="81.2" rx="14.3" ry="10.6" transform="rotate(29.4 280.2 81.2)" fill="#ad3f31" stroke="#7e2a1d" stroke-width="0.7"/><ellipse cx="295.2" cy="100.6" rx="15.2" ry="9.5" transform="rotate(66.6 295.2 100.6)" fill="#b8473a" stroke="#7e2a1d" stroke-width="0.7"/><ellipse cx="307.1" cy="116.1" rx="14.3" ry="9.6" transform="rotate(77.9 307.1 116.1)" fill="#ad3f31" stroke="#7e2a1d" stroke-width="0.7"/><ellipse cx="258.6" cy="69.7" rx="13.7" ry="10.1" transform="rotate(51.5 258.6 69.7)" fill="#b34234" stroke="#7e2a1d" stroke-width="0.7"/><ellipse cx="281.7" cy="82.2" rx="14.0" ry="10.0" transform="rotate(46.7 281.7 82.2)" fill="#bd4c3a" stroke="#7e2a1d" stroke-width="0.7"/><ellipse cx="290.3" cy="99.9" rx="14.8" ry="10.5" transform="rotate(68.4 290.3 99.9)" fill="#b8473a" stroke="#7e2a1d" stroke-width="0.7"/><ellipse cx="305.0" cy="119.8" rx="14.8" ry="10.1" transform="rotate(87.1 305.0 119.8)" fill="#ad3f31" stroke="#7e2a1d" stroke-width="0.7"/><ellipse cx="316.3" cy="143.4" rx="15.9" ry="8.4" transform="rotate(72.7 316.3 143.4)" fill="#b8473a" stroke="#7e2a1d" stroke-width="0.7"/><ellipse cx="317.3" cy="163.2" rx="14.1" ry="8.3" transform="rotate(85.8 317.3 163.2)" fill="#bd4c3a" stroke="#7e2a1d" stroke-width="0.7"/><ellipse cx="290.7" cy="101.6" rx="12.1" ry="11.0" transform="rotate(67.9 290.7 101.6)" fill="#b34234" stroke="#7e2a1d" stroke-width="0.7"/><ellipse cx="303.1" cy="119.8" rx="14.2" ry="8.7" transform="rotate(62.0 303.1 119.8)" fill="#ad3f31" stroke="#7e2a1d" stroke-width="0.7"/><ellipse cx="312.7" cy="143.1" rx="15.9" ry="9.8" transform="rotate(51.4 312.7 143.1)" fill="#bd4c3a" stroke="#7e2a1d" stroke-width="0.7"/><ellipse cx="322.5" cy="168.4" rx="14.9" ry="9.7" transform="rotate(105.9 322.5 168.4)" fill="#b34234" stroke="#7e2a1d" stroke-width="0.7"/><ellipse cx="315.5" cy="195.9" rx="15.4" ry="10.8" transform="rotate(82.4 315.5 195.9)" fill="#bd4c3a" stroke="#7e2a1d" stroke-width="0.7"/><ellipse cx="311.3" cy="218.0" rx="13.4" ry="8.6" transform="rotate(108.6 311.3 218.0)" fill="#ad3f31" stroke="#7e2a1d" stroke-width="0.7"/><ellipse cx="313.4" cy="144.0" rx="14.4" ry="10.3" transform="rotate(73.5 313.4 144.0)" fill="#bd4c3a" stroke="#7e2a1d" stroke-width="0.7"/><ellipse cx="320.2" cy="172.6" rx="15.5" ry="8.6" transform="rotate(81.1 320.2 172.6)" fill="#b8473a" stroke="#7e2a1d" stroke-width="0.7"/><ellipse cx="317.0" cy="187.6" rx="15.8" ry="9.9" transform="rotate(94.1 317.0 187.6)" fill="#a43729" stroke="#7e2a1d" stroke-width="0.7"/><ellipse cx="314.8" cy="216.2" rx="14.6" ry="8.7" transform="rotate(85.2 314.8 216.2)" fill="#b8473a" stroke="#7e2a1d" stroke-width="0.7"/><ellipse cx="310.6" cy="237.1" rx="13.4" ry="10.3" transform="rotate(124.8 310.6 237.1)" fill="#b8473a" stroke="#7e2a1d" stroke-width="0.7"/><ellipse cx="295.3" cy="255.1" rx="13.5" ry="8.2" transform="rotate(142.2 295.3 255.1)" fill="#a43729" stroke="#7e2a1d" stroke-width="0.7"/><ellipse cx="321.7" cy="190.0" rx="14.7" ry="8.9" transform="rotate(99.4 321.7 190.0)" fill="#bd4c3a" stroke="#7e2a1d" stroke-width="0.7"/><ellipse cx="312.6" cy="211.0" rx="14.4" ry="8.1" transform="rotate(93.8 312.6 211.0)" fill="#bd4c3a" stroke="#7e2a1d" stroke-width="0.7"/><ellipse cx="307.5" cy="239.2" rx="14.1" ry="9.6" transform="rotate(105.6 307.5 239.2)" fill="#bd4c3a" stroke="#7e2a1d" stroke-width="0.7"/><ellipse cx="290.6" cy="259.4" rx="12.8" ry="8.8" transform="rotate(136.3 290.6 259.4)" fill="#bd4c3a" stroke="#7e2a1d" stroke-width="0.7"/><ellipse cx="280.8" cy="275.9" rx="13.4" ry="8.3" transform="rotate(127.1 280.8 275.9)" fill="#b34234" stroke="#7e2a1d" stroke-width="0.7"/><ellipse cx="259.8" cy="289.3" rx="12.1" ry="9.9" transform="rotate(147.2 259.8 289.3)" fill="#a43729" stroke="#7e2a1d" stroke-width="0.7"/><ellipse cx="302.2" cy="238.7" rx="15.4" ry="9.7" transform="rotate(108.3 302.2 238.7)" fill="#b8473a" stroke="#7e2a1d" stroke-width="0.7"/><ellipse cx="293.6" cy="265.1" rx="12.9" ry="9.9" transform="rotate(106.3 293.6 265.1)" fill="#bd4c3a" stroke="#7e2a1d" stroke-width="0.7"/><ellipse cx="280.8" cy="275.6" rx="14.0" ry="10.8" transform="rotate(122.7 280.8 275.6)" fill="#a43729" stroke="#7e2a1d" stroke-width="0.7"/><ellipse cx="263.9" cy="295.0" rx="12.8" ry="10.3" transform="rotate(136.4 263.9 295.0)" fill="#ad3f31" stroke="#7e2a1d" stroke-width="0.7"/><ellipse cx="239.4" cy="307.8" rx="15.6" ry="10.4" transform="rotate(154.0 239.4 307.8)" fill="#a43729" stroke="#7e2a1d" stroke-width="0.7"/><ellipse cx="214.2" cy="315.2" rx="14.8" ry="8.1" transform="rotate(160.4 214.2 315.2)" fill="#a43729" stroke="#7e2a1d" stroke-width="0.7"/><ellipse cx="277.7" cy="283.5" rx="13.1" ry="9.1" transform="rotate(154.0 277.7 283.5)" fill="#a43729" stroke="#7e2a1d" stroke-width="0.7"/><ellipse cx="259.2" cy="292.5" rx="13.0" ry="8.1" transform="rotate(137.2 259.2 292.5)" fill="#a43729" stroke="#7e2a1d" stroke-width="0.7"/><ellipse cx="237.4" cy="304.5" rx="14.7" ry="8.6" transform="rotate(153.7 237.4 304.5)" fill="#b34234" stroke="#7e2a1d" stroke-width="0.7"/><ellipse cx="218.3" cy="316.9" rx="12.1" ry="10.1" transform="rotate(150.2 218.3 316.9)" fill="#b8473a" stroke="#7e2a1d" stroke-width="0.7"/><ellipse cx="191.0" cy="319.5" rx="13.6" ry="9.2" transform="rotate(164.3 191.0 319.5)" fill="#bd4c3a" stroke="#7e2a1d" stroke-width="0.7"/><ellipse cx="164.3" cy="317.2" rx="15.6" ry="8.1" transform="rotate(168.3 164.3 317.2)" fill="#b34234" stroke="#7e2a1d" stroke-width="0.7"/><ellipse cx="240.7" cy="305.0" rx="13.9" ry="8.1" transform="rotate(159.4 240.7 305.0)" fill="#a43729" stroke="#7e2a1d" stroke-width="0.7"/><ellipse cx="218.9" cy="314.9" rx="12.9" ry="8.0" transform="rotate(166.1 218.9 314.9)" fill="#bd4c3a" stroke="#7e2a1d" stroke-width="0.7"/><ellipse cx="197.0" cy="318.3" rx="15.4" ry="10.3" transform="rotate(152.0 197.0 318.3)" fill="#b34234" stroke="#7e2a1d" stroke-width="0.7"/><ellipse cx="164.0" cy="319.6" rx="15.2" ry="8.8" transform="rotate(166.7 164.0 319.6)" fill="#b8473a" stroke="#7e2a1d" stroke-width="0.7"/><ellipse cx="145.4" cy="316.4" rx="14.8" ry="10.1" transform="rotate(217.4 145.4 316.4)" fill="#ad3f31" stroke="#7e2a1d" stroke-width="0.7"/><ellipse cx="123.9" cy="308.2" rx="14.0" ry="9.7" transform="rotate(197.1 123.9 308.2)" fill="#a43729" stroke="#7e2a1d" stroke-width="0.7"/><ellipse cx="193.5" cy="319.7" rx="14.0" ry="9.9" transform="rotate(167.6 193.5 319.7)" fill="#ad3f31" stroke="#7e2a1d" stroke-width="0.7"/><ellipse cx="163.6" cy="319.9" rx="15.5" ry="11.0" transform="rotate(202.6 163.6 319.9)" fill="#a43729" stroke="#7e2a1d" stroke-width="0.7"/><ellipse cx="147.8" cy="314.8" rx="15.1" ry="9.4" transform="rotate(176.6 147.8 314.8)" fill="#bd4c3a" stroke="#7e2a1d" stroke-width="0.7"/><ellipse cx="119.6" cy="301.2" rx="13.0" ry="9.5" transform="rotate(221.3 119.6 301.2)" fill="#bd4c3a" stroke="#7e2a1d" stroke-width="0.7"/><ellipse cx="101.6" cy="296.1" rx="13.5" ry="10.0" transform="rotate(198.2 101.6 296.1)" fill="#ad3f31" stroke="#7e2a1d" stroke-width="0.7"/><ellipse cx="77.5" cy="277.7" rx="14.3" ry="9.3" transform="rotate(236.7 77.5 277.7)" fill="#b34234" stroke="#7e2a1d" stroke-width="0.7"/><ellipse cx="142.3" cy="311.9" rx="12.6" ry="8.6" transform="rotate(202.0 142.3 311.9)" fill="#a43729" stroke="#7e2a1d" stroke-width="0.7"/><ellipse cx="124.7" cy="304.8" rx="12.1" ry="9.8" transform="rotate(226.0 124.7 304.8)" fill="#ad3f31" stroke="#7e2a1d" stroke-width="0.7"/><ellipse cx="103.2" cy="293.6" rx="13.0" ry="10.0" transform="rotate(208.4 103.2 293.6)" fill="#ad3f31" stroke="#7e2a1d" stroke-width="0.7"/><ellipse cx="83.7" cy="282.6" rx="12.5" ry="8.1" transform="rotate(212.5 83.7 282.6)" fill="#b34234" stroke="#7e2a1d" stroke-width="0.7"/><ellipse cx="66.0" cy="254.1" rx="13.3" ry="8.1" transform="rotate(239.1 66.0 254.1)" fill="#bd4c3a" stroke="#7e2a1d" stroke-width="0.7"/><ellipse cx="58.5" cy="240.1" rx="13.8" ry="10.6" transform="rotate(251.2 58.5 240.1)" fill="#ad3f31" stroke="#7e2a1d" stroke-width="0.7"/><ellipse cx="100.6" cy="295.2" rx="15.1" ry="10.9" transform="rotate(209.0 100.6 295.2)" fill="#ad3f31" stroke="#7e2a1d" stroke-width="0.7"/><ellipse cx="79.7" cy="279.7" rx="12.6" ry="8.5" transform="rotate(205.5 79.7 279.7)" fill="#a43729" stroke="#7e2a1d" stroke-width="0.7"/><ellipse cx="64.5" cy="256.4" rx="12.6" ry="10.7" transform="rotate(225.0 64.5 256.4)" fill="#b34234" stroke="#7e2a1d" stroke-width="0.7"/><ellipse cx="54.6" cy="242.3" rx="13.1" ry="8.7" transform="rotate(242.7 54.6 242.3)" fill="#a43729" stroke="#7e2a1d" stroke-width="0.7"/><ellipse cx="45.2" cy="215.6" rx="12.6" ry="8.0" transform="rotate(268.2 45.2 215.6)" fill="#b8473a" stroke="#7e2a1d" stroke-width="0.7"/><ellipse cx="43.3" cy="196.7" rx="12.6" ry="10.4" transform="rotate(287.6 43.3 196.7)" fill="#bd4c3a" stroke="#7e2a1d" stroke-width="0.7"/><ellipse cx="66.8" cy="259.5" rx="15.2" ry="9.2" transform="rotate(212.8 66.8 259.5)" fill="#b34234" stroke="#7e2a1d" stroke-width="0.7"/><ellipse cx="51.2" cy="238.8" rx="13.0" ry="8.6" transform="rotate(235.0 51.2 238.8)" fill="#ad3f31" stroke="#7e2a1d" stroke-width="0.7"/><ellipse cx="45.0" cy="211.2" rx="15.3" ry="10.2" transform="rotate(240.8 45.0 211.2)" fill="#b8473a" stroke="#7e2a1d" stroke-width="0.7"/><ellipse cx="40.9" cy="187.8" rx="14.7" ry="8.8" transform="rotate(243.0 40.9 187.8)" fill="#b34234" stroke="#7e2a1d" stroke-width="0.7"/><ellipse cx="41.3" cy="169.7" rx="12.0" ry="8.6" transform="rotate(297.2 41.3 169.7)" fill="#b8473a" stroke="#7e2a1d" stroke-width="0.7"/><ellipse cx="48.2" cy="142.0" rx="13.0" ry="10.8" transform="rotate(285.8 48.2 142.0)" fill="#a43729" stroke="#7e2a1d" stroke-width="0.7"/><ellipse cx="42.5" cy="213.8" rx="15.1" ry="11.0" transform="rotate(236.3 42.5 213.8)" fill="#bd4c3a" stroke="#7e2a1d" stroke-width="0.7"/><ellipse cx="40.0" cy="193.2" rx="13.0" ry="10.7" transform="rotate(240.8 40.0 193.2)" fill="#b34234" stroke="#7e2a1d" stroke-width="0.7"/><ellipse cx="42.7" cy="171.4" rx="14.9" ry="9.5" transform="rotate(262.4 42.7 171.4)" fill="#a43729" stroke="#7e2a1d" stroke-width="0.7"/><ellipse cx="46.4" cy="142.9" rx="13.2" ry="8.2" transform="rotate(293.2 46.4 142.9)" fill="#b34234" stroke="#7e2a1d" stroke-width="0.7"/><ellipse cx="53.6" cy="125.4" rx="15.0" ry="8.6" transform="rotate(305.5 53.6 125.4)" fill="#b34234" stroke="#7e2a1d" stroke-width="0.7"/><ellipse cx="67.0" cy="103.2" rx="13.4" ry="8.5" transform="rotate(297.9 67.0 103.2)" fill="#ad3f31" stroke="#7e2a1d" stroke-width="0.7"/><ellipse cx="45.4" cy="168.9" rx="14.0" ry="9.2" transform="rotate(265.8 45.4 168.9)" fill="#b34234" stroke="#7e2a1d" stroke-width="0.7"/><ellipse cx="44.6" cy="140.3" rx="12.1" ry="8.5" transform="rotate(264.7 44.6 140.3)" fill="#b34234" stroke="#7e2a1d" stroke-width="0.7"/><ellipse cx="48.9" cy="123.2" rx="13.7" ry="10.9" transform="rotate(279.4 48.9 123.2)" fill="#bd4c3a" stroke="#7e2a1d" stroke-width="0.7"/><ellipse cx="65.2" cy="96.2" rx="15.3" ry="8.2" transform="rotate(300.6 65.2 96.2)" fill="#a43729" stroke="#7e2a1d" stroke-width="0.7"/><ellipse cx="82.8" cy="77.5" rx="14.1" ry="8.0" transform="rotate(328.0 82.8 77.5)" fill="#bd4c3a" stroke="#7e2a1d" stroke-width="0.7"/><ellipse cx="105.5" cy="66.9" rx="14.5" ry="9.0" transform="rotate(323.6 105.5 66.9)" fill="#bd4c3a" stroke="#7e2a1d" stroke-width="0.7"/><ellipse cx="53.6" cy="121.0" rx="12.5" ry="10.5" transform="rotate(304.5 53.6 121.0)" fill="#bd4c3a" stroke="#7e2a1d" stroke-width="0.7"/><ellipse cx="66.0" cy="100.9" rx="15.3" ry="9.5" transform="rotate(298.5 66.0 100.9)" fill="#b34234" stroke="#7e2a1d" stroke-width="0.7"/><ellipse cx="82.1" cy="81.1" rx="12.1" ry="9.9" transform="rotate(312.6 82.1 81.1)" fill="#b34234" stroke="#7e2a1d" stroke-width="0.7"/><ellipse cx="98.8" cy="71.6" rx="13.3" ry="9.6" transform="rotate(314.6 98.8 71.6)" fill="#a43729" stroke="#7e2a1d" stroke-width="0.7"/><ellipse cx="124.0" cy="54.4" rx="14.9" ry="11.0" transform="rotate(331.1 124.0 54.4)" fill="#ad3f31" stroke="#7e2a1d" stroke-width="0.7"/><ellipse cx="145.6" cy="42.0" rx="12.4" ry="8.6" transform="rotate(367.2 145.6 42.0)" fill="#ad3f31" stroke="#7e2a1d" stroke-width="0.7"/><ellipse cx="82.4" cy="77.8" rx="14.0" ry="11.0" transform="rotate(294.6 82.4 77.8)" fill="#b8473a" stroke="#7e2a1d" stroke-width="0.7"/><ellipse cx="103.1" cy="66.6" rx="15.2" ry="9.4" transform="rotate(327.7 103.1 66.6)" fill="#bd4c3a" stroke="#7e2a1d" stroke-width="0.7"/><ellipse cx="119.4" cy="56.9" rx="14.6" ry="8.2" transform="rotate(336.5 119.4 56.9)" fill="#bd4c3a" stroke="#7e2a1d" stroke-width="0.7"/><ellipse cx="148.4" cy="48.2" rx="14.0" ry="8.2" transform="rotate(365.0 148.4 48.2)" fill="#b8473a" stroke="#7e2a1d" stroke-width="0.7"/><ellipse cx="170.9" cy="44.1" rx="13.5" ry="8.3" transform="rotate(333.0 170.9 44.1)" fill="#a43729" stroke="#7e2a1d" stroke-width="0.7"/><ellipse cx="196.2" cy="44.2" rx="13.2" ry="9.2" transform="rotate(372.5 196.2 44.2)" fill="#b8473a" stroke="#7e2a1d" stroke-width="0.7"/><ellipse cx="155.8" cy="71.7" rx="13.7" ry="7.1" transform="rotate(2.0 155.8 71.7)" fill="#ad3f31" stroke="#7e2a1d" stroke-width="0.7"/><ellipse cx="180.2" cy="71.5" rx="13.9" ry="8.9" transform="rotate(1.9 180.2 71.5)" fill="#bd4c3a" stroke="#7e2a1d" stroke-width="0.7"/><ellipse cx="206.3" cy="70.6" rx="13.1" ry="8.7" transform="rotate(26.9 206.3 70.6)" fill="#b34234" stroke="#7e2a1d" stroke-width="0.7"/><ellipse cx="189.1" cy="72.7" rx="13.3" ry="7.3" transform="rotate(7.3 189.1 72.7)" fill="#b8473a" stroke="#7e2a1d" stroke-width="0.7"/><ellipse cx="214.0" cy="78.6" rx="13.8" ry="8.2" transform="rotate(14.2 214.0 78.6)" fill="#ad3f31" stroke="#7e2a1d" stroke-width="0.7"/><ellipse cx="236.5" cy="89.7" rx="11.6" ry="8.4" transform="rotate(43.1 236.5 89.7)" fill="#bd4c3a" stroke="#7e2a1d" stroke-width="0.7"/><ellipse cx="224.7" cy="83.3" rx="11.8" ry="7.7" transform="rotate(28.2 224.7 83.3)" fill="#a43729" stroke="#7e2a1d" stroke-width="0.7"/><ellipse cx="250.5" cy="95.5" rx="13.8" ry="7.7" transform="rotate(45.9 250.5 95.5)" fill="#ad3f31" stroke="#7e2a1d" stroke-width="0.7"/><ellipse cx="266.5" cy="117.1" rx="11.4" ry="8.8" transform="rotate(67.5 266.5 117.1)" fill="#b8473a" stroke="#7e2a1d" stroke-width="0.7"/><ellipse cx="259.8" cy="104.8" rx="13.8" ry="7.8" transform="rotate(54.0 259.8 104.8)" fill="#b34234" stroke="#7e2a1d" stroke-width="0.7"/><ellipse cx="275.1" cy="122.6" rx="12.1" ry="7.7" transform="rotate(61.4 275.1 122.6)" fill="#a43729" stroke="#7e2a1d" stroke-width="0.7"/><ellipse cx="286.8" cy="147.7" rx="13.0" ry="7.5" transform="rotate(70.5 286.8 147.7)" fill="#ad3f31" stroke="#7e2a1d" stroke-width="0.7"/><ellipse cx="283.5" cy="134.7" rx="12.2" ry="7.6" transform="rotate(54.4 283.5 134.7)" fill="#b34234" stroke="#7e2a1d" stroke-width="0.7"/><ellipse cx="289.0" cy="157.7" rx="12.4" ry="7.4" transform="rotate(87.1 289.0 157.7)" fill="#b8473a" stroke="#7e2a1d" stroke-width="0.7"/><ellipse cx="291.6" cy="186.8" rx="13.0" ry="7.7" transform="rotate(105.4 291.6 186.8)" fill="#b8473a" stroke="#7e2a1d" stroke-width="0.7"/><ellipse cx="287.1" cy="173.8" rx="11.2" ry="7.3" transform="rotate(86.8 287.1 173.8)" fill="#bd4c3a" stroke="#7e2a1d" stroke-width="0.7"/><ellipse cx="288.9" cy="200.5" rx="13.9" ry="9.0" transform="rotate(115.5 288.9 200.5)" fill="#bd4c3a" stroke="#7e2a1d" stroke-width="0.7"/><ellipse cx="278.7" cy="223.4" rx="12.6" ry="7.2" transform="rotate(100.5 278.7 223.4)" fill="#bd4c3a" stroke="#7e2a1d" stroke-width="0.7"/><ellipse cx="287.6" cy="212.1" rx="13.8" ry="8.0" transform="rotate(109.2 287.6 212.1)" fill="#bd4c3a" stroke="#7e2a1d" stroke-width="0.7"/><ellipse cx="273.3" cy="232.7" rx="12.2" ry="8.5" transform="rotate(107.0 273.3 232.7)" fill="#ad3f31" stroke="#7e2a1d" stroke-width="0.7"/><ellipse cx="257.7" cy="260.0" rx="13.4" ry="8.8" transform="rotate(140.7 257.7 260.0)" fill="#bd4c3a" stroke="#7e2a1d" stroke-width="0.7"/><ellipse cx="265.3" cy="244.5" rx="12.4" ry="7.0" transform="rotate(137.9 265.3 244.5)" fill="#b8473a" stroke="#7e2a1d" stroke-width="0.7"/><ellipse cx="252.5" cy="261.8" rx="12.7" ry="8.9" transform="rotate(146.7 252.5 261.8)" fill="#b8473a" stroke="#7e2a1d" stroke-width="0.7"/><ellipse cx="229.6" cy="278.2" rx="11.4" ry="8.1" transform="rotate(142.1 229.6 278.2)" fill="#b8473a" stroke="#7e2a1d" stroke-width="0.7"/><ellipse cx="240.6" cy="270.0" rx="12.1" ry="7.5" transform="rotate(148.8 240.6 270.0)" fill="#bd4c3a" stroke="#7e2a1d" stroke-width="0.7"/><ellipse cx="220.0" cy="280.0" rx="12.4" ry="8.1" transform="rotate(157.0 220.0 280.0)" fill="#b8473a" stroke="#7e2a1d" stroke-width="0.7"/><ellipse cx="189.1" cy="289.7" rx="11.4" ry="8.1" transform="rotate(165.4 189.1 289.7)" fill="#b34234" stroke="#7e2a1d" stroke-width="0.7"/><ellipse cx="206.5" cy="289.8" rx="13.9" ry="7.8" transform="rotate(151.8 206.5 289.8)" fill="#ad3f31" stroke="#7e2a1d" stroke-width="0.7"/><ellipse cx="177.8" cy="286.9" rx="13.2" ry="7.8" transform="rotate(175.0 177.8 286.9)" fill="#b34234" stroke="#7e2a1d" stroke-width="0.7"/><ellipse cx="157.6" cy="284.5" rx="11.9" ry="8.9" transform="rotate(196.4 157.6 284.5)" fill="#b8473a" stroke="#7e2a1d" stroke-width="0.7"/><ellipse cx="169.5" cy="287.9" rx="11.6" ry="8.1" transform="rotate(190.3 169.5 287.9)" fill="#bd4c3a" stroke="#7e2a1d" stroke-width="0.7"/><ellipse cx="143.6" cy="283.7" rx="13.0" ry="8.8" transform="rotate(212.7 143.6 283.7)" fill="#b34234" stroke="#7e2a1d" stroke-width="0.7"/><ellipse cx="113.5" cy="271.8" rx="11.3" ry="8.3" transform="rotate(208.9 113.5 271.8)" fill="#b34234" stroke="#7e2a1d" stroke-width="0.7"/><ellipse cx="133.9" cy="278.7" rx="12.3" ry="8.0" transform="rotate(200.8 133.9 278.7)" fill="#bd4c3a" stroke="#7e2a1d" stroke-width="0.7"/><ellipse cx="112.2" cy="262.7" rx="11.9" ry="8.1" transform="rotate(209.2 112.2 262.7)" fill="#bd4c3a" stroke="#7e2a1d" stroke-width="0.7"/><ellipse cx="91.4" cy="243.9" rx="11.7" ry="7.2" transform="rotate(230.3 91.4 243.9)" fill="#a43729" stroke="#7e2a1d" stroke-width="0.7"/><ellipse cx="99.1" cy="259.7" rx="12.6" ry="8.1" transform="rotate(232.4 99.1 259.7)" fill="#a43729" stroke="#7e2a1d" stroke-width="0.7"/><ellipse cx="81.9" cy="237.5" rx="11.0" ry="8.2" transform="rotate(253.5 81.9 237.5)" fill="#a43729" stroke="#7e2a1d" stroke-width="0.7"/><ellipse cx="71.8" cy="207.3" rx="13.5" ry="7.4" transform="rotate(263.7 71.8 207.3)" fill="#b8473a" stroke="#7e2a1d" stroke-width="0.7"/><ellipse cx="80.1" cy="226.0" rx="12.5" ry="8.5" transform="rotate(231.9 80.1 226.0)" fill="#b8473a" stroke="#7e2a1d" stroke-width="0.7"/><ellipse cx="71.4" cy="201.4" rx="13.4" ry="8.9" transform="rotate(263.3 71.4 201.4)" fill="#a43729" stroke="#7e2a1d" stroke-width="0.7"/><ellipse cx="71.9" cy="173.2" rx="13.0" ry="7.2" transform="rotate(288.1 71.9 173.2)" fill="#a43729" stroke="#7e2a1d" stroke-width="0.7"/><ellipse cx="71.8" cy="188.9" rx="13.5" ry="8.6" transform="rotate(269.6 71.8 188.9)" fill="#b8473a" stroke="#7e2a1d" stroke-width="0.7"/><ellipse cx="72.5" cy="157.1" rx="12.2" ry="7.2" transform="rotate(271.2 72.5 157.1)" fill="#a43729" stroke="#7e2a1d" stroke-width="0.7"/><ellipse cx="83.4" cy="135.9" rx="13.8" ry="8.5" transform="rotate(296.9 83.4 135.9)" fill="#b8473a" stroke="#7e2a1d" stroke-width="0.7"/><ellipse cx="75.1" cy="147.3" rx="12.0" ry="8.3" transform="rotate(299.7 75.1 147.3)" fill="#b8473a" stroke="#7e2a1d" stroke-width="0.7"/><ellipse cx="86.4" cy="128.8" rx="13.1" ry="7.3" transform="rotate(306.4 86.4 128.8)" fill="#bd4c3a" stroke="#7e2a1d" stroke-width="0.7"/><ellipse cx="102.8" cy="102.3" rx="13.7" ry="8.5" transform="rotate(325.3 102.8 102.3)" fill="#a43729" stroke="#7e2a1d" stroke-width="0.7"/><ellipse cx="91.5" cy="114.1" rx="11.3" ry="7.2" transform="rotate(301.0 91.5 114.1)" fill="#b34234" stroke="#7e2a1d" stroke-width="0.7"/><ellipse cx="105.1" cy="95.5" rx="11.3" ry="7.6" transform="rotate(307.7 105.1 95.5)" fill="#b8473a" stroke="#7e2a1d" stroke-width="0.7"/><ellipse cx="130.2" cy="83.9" rx="12.2" ry="8.8" transform="rotate(345.5 130.2 83.9)" fill="#ad3f31" stroke="#7e2a1d" stroke-width="0.7"/><ellipse cx="117.7" cy="85.2" rx="12.5" ry="8.4" transform="rotate(323.3 117.7 85.2)" fill="#bd4c3a" stroke="#7e2a1d" stroke-width="0.7"/><ellipse cx="138.8" cy="75.9" rx="11.5" ry="8.2" transform="rotate(329.5 138.8 75.9)" fill="#a43729" stroke="#7e2a1d" stroke-width="0.7"/><ellipse cx="170.9" cy="69.2" rx="12.1" ry="8.6" transform="rotate(360.8 170.9 69.2)" fill="#bd4c3a" stroke="#7e2a1d" stroke-width="0.7"/><path d="M52.0 115.5 L48.3 113.1 M30.2 198.5 L25.9 198.0 M191.5 290.8 L191.5 296.7 M175.5 280.4 L176.2 286.7 M154.7 61.9 L154.0 56.5 M325.3 157.7 L330.1 156.9 M196.2 317.5 L197.4 320.7 M236.9 99.0 L240.6 94.6 M70.7 143.3 L68.4 140.6 M193.1 39.3 L194.5 36.2 M201.2 285.9 L201.6 291.0 M280.9 275.7 L282.6 280.8 M299.8 117.9 L304.2 118.3 M157.8 69.2 L158.3 62.8 M169.8 290.2 L169.4 293.3 M177.5 293.1 L179.1 296.7 M68.5 190.6 L64.6 192.1 M35.2 171.6 L32.0 169.9 M259.8 76.7 L264.0 73.7 M49.8 151.3 L44.2 147.8 M173.8 279.8 L174.5 286.5 M205.5 73.2 L205.9 68.4 M160.6 32.4 L160.4 27.3 M116.2 269.3 L115.2 276.0 M303.9 131.4 L307.2 131.8 M282.7 256.6 L283.8 259.9 M127.2 315.0 L125.4 317.7 M269.8 220.8 L272.6 225.3 M122.9 47.8 L120.6 42.1 M291.5 238.7 L294.7 240.6 M104.2 278.7 L101.2 281.0 M72.6 241.5 L69.8 243.1 M39.2 126.7 L34.0 127.2 M144.2 289.8 L139.8 293.6 M327.6 157.6 L334.0 159.5 M270.0 141.0 L274.8 139.6 M128.6 59.8 L129.3 54.4 M287.5 244.9 L294.3 244.7 M290.6 273.5 L297.3 274.3 M319.8 208.5 L325.4 209.7 M58.5 113.1 L52.3 113.8 M308.1 238.2 L312.7 243.3 M83.5 243.3 L81.8 247.4 M194.1 69.5 L194.9 64.2 M111.5 295.3 L110.4 300.0 M258.6 107.9 L260.4 104.8 M41.1 198.4 L37.2 200.3 M117.1 88.2 L113.1 85.0 M256.7 105.2 L258.8 101.9 M114.3 300.2 L110.0 303.9 M81.9 154.8 L75.8 155.1 M204.0 297.4 L206.5 303.9 M88.8 295.4 L85.2 301.4 M272.5 285.7 L277.4 289.4 M209.6 65.9 L211.1 62.0 M173.4 57.0 L169.6 52.0 M62.1 180.8 L59.2 179.2 M247.2 264.9 L247.9 271.4 M285.2 131.7 L289.6 126.5 M147.1 34.7 L144.7 31.7 M116.6 49.0 L117.1 43.1 M67.4 213.7 L64.5 215.5 M273.6 142.2 L276.7 140.2 M288.5 214.7 L292.2 214.1 M55.1 158.7 L50.4 156.2 M33.0 155.1 L29.7 155.6 M281.0 232.8 L284.3 237.9 M74.2 177.5 L69.9 177.0 M141.3 315.2 L139.7 321.9 M65.5 93.4 L60.9 92.1 M321.6 128.1 L324.7 128.0 M99.0 238.4 L97.1 241.5 M170.7 71.8 L169.4 69.0 M217.8 61.4 L219.3 56.0 M220.2 269.2 L223.7 271.5 M171.3 310.7 L171.1 315.2 M98.5 99.6 L97.1 95.4 M75.3 121.6 L70.6 119.3 M107.1 307.9 L103.7 309.9 M267.7 63.9 L269.9 61.0 M292.3 169.1 L296.0 169.7 M192.1 308.5 L190.5 311.8 M158.3 280.0 L158.1 285.7 M64.2 134.7 L58.0 132.2 M109.7 246.9 L107.2 251.2 M62.3 120.8 L57.5 120.9 M56.5 181.9 L51.8 179.0 M157.2 299.2 L155.4 302.0 M193.9 321.9 L196.3 327.6 M282.2 108.5 L286.2 106.1 M296.8 138.7 L300.9 135.9 M247.6 75.2 L248.4 70.9 M211.0 319.5 L208.8 325.3 M296.8 113.0 L302.8 111.4 M231.6 48.7 L234.2 46.0 M143.7 284.3 L145.3 290.8 M64.4 171.4 L58.4 170.1 M305.7 101.4 L308.3 96.4 M128.8 90.6 L128.3 83.7 M140.1 279.5 L136.4 284.0 M310.7 167.7 L314.1 168.3 M315.0 232.1 L319.6 236.1 M269.9 88.5 L275.4 84.5 M62.0 186.0 L58.4 188.6 M254.7 299.3 L256.1 303.0 M201.4 46.5 L201.0 41.5 M164.6 286.2 L162.6 291.4 M287.7 139.1 L294.3 140.0 M142.4 324.5 L138.4 328.3 M197.4 66.0 L198.2 61.9 M81.3 187.5 L74.9 187.8 M44.0 203.3 L40.6 205.3 M83.6 126.4 L79.3 126.5 M290.3 217.5 L293.6 221.4 M103.4 87.9 L99.5 85.5 M32.3 204.4 L28.9 205.3 M125.3 52.3 L124.1 47.2 M315.8 124.6 L319.6 123.3 M306.0 177.9 L309.6 179.0 M278.6 216.9 L283.8 217.3 M154.0 45.5 L154.6 41.3 M98.6 71.3 L95.4 67.7 M276.5 256.4 L279.3 262.6 M274.7 214.8 L278.1 217.1 M83.9 219.7 L79.4 221.1 M175.7 60.9 L176.7 55.4 M105.6 113.9 L100.0 112.3 M295.8 221.5 L298.9 221.0 M84.9 257.7 L81.5 258.1 M254.1 80.8 L256.2 75.9 M283.0 169.4 L286.9 167.6 M263.0 86.6 L265.7 82.8 M264.3 107.6 L269.9 104.9 M69.0 217.3 L64.6 219.1 M127.4 300.3 L126.6 304.9 M197.4 59.2 L200.2 55.2 M67.1 213.1 L60.8 211.1 M206.5 63.9 L209.3 59.0 M140.8 311.1 L137.6 317.1 M120.9 74.5 L116.7 70.7 M196.2 54.4 L195.7 47.5 M156.6 84.9 L157.0 80.3 M172.2 310.5 L172.5 314.4 M287.7 175.7 L293.3 172.1 M56.7 109.2 L50.8 106.8 M65.2 106.8 L61.3 102.2 M82.5 127.3 L77.6 124.1 M34.5 138.4 L31.7 136.4 M118.0 302.1 L116.7 308.8 M65.0 128.4 L60.0 128.3 M77.0 76.4 L72.1 73.5 M221.4 67.3 L223.1 64.1 M57.8 211.1 L50.9 212.2 M291.5 146.5 L295.6 142.1 M138.0 308.3 L134.2 312.7 M98.2 256.6 L94.9 259.5 M296.2 197.8 L301.7 196.2 M125.7 314.4 L125.2 321.1 M225.3 273.0 L225.6 276.4 M172.3 68.7 L173.1 63.8 M319.8 204.9 L326.2 203.8 M140.9 50.3 L141.7 46.0 M204.3 300.6 L205.4 304.7 M229.0 61.4 L233.5 58.4 M198.2 287.7 L201.2 292.3 M292.9 154.2 L297.4 152.8 M249.1 49.9 L249.6 44.2 M96.6 287.3 L93.1 288.9 M256.1 101.3 L257.9 97.3 M160.5 82.3 L156.6 78.0 M248.7 73.4 L249.2 68.0 M291.9 212.0 L298.3 214.7 M245.1 103.5 L245.5 100.2 M145.1 79.2 L144.6 75.1 M141.5 71.9 L138.7 67.9 M72.0 136.2 L67.6 135.8 M150.8 287.5 L150.7 290.5 M86.4 118.9 L84.5 116.0 M57.2 204.2 L53.1 203.0 M183.3 48.8 L184.8 43.3 M60.3 179.6 L55.7 179.6 M56.4 204.7 L51.3 203.9 M265.4 111.7 L267.2 109.2 M318.0 208.0 L323.5 207.7 M232.2 315.0 L233.1 321.3 M130.6 51.2 L128.3 47.0 M42.5 132.6 L37.9 127.4 M231.7 93.1 L235.3 91.4 M59.3 146.2 L56.1 143.4 M29.4 164.0 L26.9 161.9 M284.8 188.8 L289.2 190.0 M278.3 261.9 L283.8 265.8 M190.0 50.8 L188.4 45.8 M37.2 212.9 L32.4 216.0 M60.1 221.5 L55.9 222.5 M113.6 107.9 L111.6 104.6 M202.4 278.5 L204.9 284.0 M303.3 146.5 L306.7 146.2 M169.1 321.4 L166.8 326.8 M272.6 214.8 L278.7 214.3 M209.4 274.1 L210.6 277.6 M290.7 150.1 L294.7 150.7 M232.8 300.9 L232.2 306.3 M303.2 214.7 L306.7 217.5 M178.0 316.3 L178.0 320.1 M288.0 158.2 L291.9 159.5 M134.0 90.5 L131.3 87.9 M144.4 319.0 L140.1 322.9 M116.4 64.9 L115.3 60.5 M79.8 184.1 L75.0 185.0 M82.2 160.7 L80.0 158.5 M100.5 263.3 L97.8 265.6 M271.9 125.4 L276.2 122.8 M192.7 52.6 L191.6 48.8 M163.9 80.0 L159.6 75.2 M225.5 294.0 L227.0 300.2 M176.3 41.2 L173.1 36.2 M227.9 86.4 L227.6 82.8 M322.9 205.8 L327.2 204.3 M317.4 221.5 L321.2 225.4 M280.4 204.0 L284.5 203.4 M262.3 250.0 L267.6 251.6 M241.9 290.3 L245.5 292.9 M66.3 128.1 L62.1 126.4 M306.8 212.3 L310.5 212.5 M325.6 188.5 L330.9 188.1 M36.4 141.4 L32.9 140.9 M149.4 66.6 L150.8 60.9 M289.0 208.6 L292.5 210.8 M209.0 47.7 L207.9 41.1 M67.2 269.4 L64.7 274.9 M316.6 162.5 L322.8 160.6 M62.0 87.9 L57.2 83.4 M297.1 83.1 L302.6 80.1 M281.7 154.1 L286.2 153.3 M274.8 283.0 L276.6 285.7 M158.7 292.8 L159.7 298.1 M43.6 226.7 L38.0 230.7 M90.2 281.0 L86.8 282.6 M220.4 301.0 L223.9 303.6 M277.1 180.6 L281.3 179.5 M311.9 172.8 L315.1 173.5 M193.6 302.7 L191.7 308.3 M290.4 132.5 L294.0 130.3 M127.1 307.2 L124.3 311.2 M260.9 294.3 L266.6 298.1 M101.3 109.2 L98.7 107.3 M235.9 305.3 L236.9 310.5 M278.2 160.0 L280.6 157.6 M42.3 215.9 L36.6 217.0 M252.7 87.7 L255.2 85.4 M288.2 197.6 L291.2 196.8 M296.2 229.3 L299.2 231.1 M232.1 76.4 L234.3 73.7 M160.4 35.7 L160.2 30.5 M267.6 78.2 L270.6 72.0 M200.1 49.7 L198.0 45.3 M69.7 196.5 L64.4 197.2 M80.0 173.4 L76.5 172.8 M117.3 42.1 L113.4 37.3 M60.0 214.3 L54.3 216.8 M288.5 120.9 L292.5 118.6 M85.1 298.7 L83.4 301.4 M297.9 244.3 L301.5 244.5 M64.7 240.3 L59.5 243.4 M147.2 292.6 L147.7 299.1 M325.3 190.4 L329.9 188.6 M275.8 290.1 L281.5 292.0 M130.7 83.1 L129.1 78.6 M320.9 226.7 L325.2 226.2 M199.4 78.8 L200.6 75.9 M36.1 207.4 L30.8 210.6 M305.0 216.5 L309.9 216.7 M274.0 125.9 L276.8 121.1 M312.3 111.1 L316.5 107.6 M156.1 35.3 L152.0 30.6 M75.3 177.3 L71.0 174.5 M253.2 96.9 L255.7 92.4 M247.6 300.2 L251.6 304.8 M61.3 245.0 L56.3 248.1 M255.3 249.2 L256.8 252.5 M47.6 183.1 L43.2 183.9 M247.5 314.6 L251.8 317.9 M141.9 55.8 L142.1 50.4 M67.2 88.6 L61.4 84.9 M109.9 85.6 L106.6 82.4 M110.0 87.0 L109.0 82.7 M221.3 52.3 L222.4 46.0 M110.8 93.4 L106.9 91.8 M224.3 39.1 L225.0 35.0 M257.7 250.3 L259.7 255.5 M275.9 235.9 L281.8 237.0 M263.7 99.1 L265.8 94.7 M149.5 296.4 L147.4 300.0 M309.8 204.9 L316.0 204.8 M217.2 276.7 L217.3 280.0 M102.0 121.0 L98.5 117.7 M138.2 269.7 L137.0 274.2 M295.0 159.8 L301.5 161.6 M87.2 133.2 L81.0 133.4 M84.2 144.0 L80.9 143.2 M264.2 306.0 L264.7 311.3 M313.5 142.6 L318.9 140.9 M203.2 48.2 L204.0 44.7 M72.7 244.8 L67.1 246.6 M52.9 120.4 L46.6 120.8 M241.0 258.7 L241.4 262.3 M135.7 292.8 L133.6 297.1 M154.3 317.4 L151.8 321.0 M212.0 88.4 L211.2 83.2 M255.2 112.8 L258.9 111.3 M67.5 107.8 L63.7 105.1 M215.4 297.2 L215.7 301.2 M261.9 245.0 L264.8 247.5 M95.4 132.3 L91.2 126.8 M103.0 252.5 L96.8 253.5 M240.5 304.7 L240.0 310.9 M206.6 280.1 L208.7 283.2 M299.0 93.6 L301.3 89.3 M113.8 268.2 L109.3 271.6 M199.8 60.6 L200.4 55.8 M96.4 268.9 L91.5 271.9 M120.8 293.7 L121.1 297.3 M91.5 256.1 L90.4 259.1 M47.1 246.9 L43.9 252.4 M132.3 287.1 L132.4 291.4 M59.3 103.0 L54.9 102.2 M257.2 240.1 L262.9 242.1 M157.1 41.4 L155.4 38.5 M124.4 307.7 L123.4 313.6 M68.8 214.7 L63.9 214.4 M169.6 321.2 L168.3 327.7 M323.7 142.3 L327.2 143.5 M223.2 314.5 L225.0 317.5 M46.2 230.9 L41.9 234.7 M295.8 93.4 L297.7 88.7 M154.9 290.3 L151.6 293.6 M62.5 100.1 L59.4 99.1 M166.4 65.1 L164.0 62.0 M293.6 217.6 L298.7 218.6 M76.3 135.1 L73.8 133.3 M116.4 286.5 L115.2 290.8 M287.4 216.2 L291.5 215.6 M301.3 202.8 L303.8 204.6 M102.5 273.4 L101.9 278.5 M292.7 263.4 L296.9 266.5 M103.1 295.0 L99.1 297.9 M254.9 54.5 L259.0 50.2 M57.3 210.2 L52.1 211.3 M240.7 49.2 L242.9 46.8 M83.2 93.3 L76.7 92.1 M63.8 198.4 L58.1 202.0 M83.2 139.5 L77.6 137.3 M169.6 66.6 L165.4 61.6 M201.8 315.6 L200.6 322.0 M164.1 280.2 L161.6 285.5 M317.8 235.1 L322.8 234.2 M65.4 194.8 L62.1 193.7 M275.2 138.5 L278.9 135.5 M131.7 89.0 L129.2 85.4 M60.8 200.6 L55.8 198.6 M313.5 118.7 L318.1 114.3 M184.3 302.2 L183.7 307.8 M91.2 302.8 L91.1 307.1 M271.3 238.6 L274.6 243.5 M286.3 208.5 L289.5 210.8 M269.2 113.1 L272.6 112.9 M314.2 155.7 L319.1 156.3 M193.6 55.7 L194.2 51.7 M119.9 82.2 L115.2 79.1 M286.8 160.2 L290.4 161.7 M320.7 134.3 L327.0 135.0 M235.4 64.4 L237.6 62.0 M253.4 57.2 L253.4 54.0 M165.0 57.1 L168.0 51.2 M53.2 223.9 L47.6 224.4 M91.0 277.7 L87.9 278.8 M156.6 40.8 L154.2 36.6 M51.8 220.6 L48.2 224.3 M298.8 182.8 L302.6 181.6 M201.4 297.9 L199.5 303.4 M136.4 92.1 L134.3 86.0 M165.1 50.1 L163.7 45.9 M300.3 237.9 L302.8 239.9 M293.4 109.1 L298.7 108.1 M317.2 144.5 L323.8 142.4 M310.2 192.0 L315.0 194.8 M90.9 104.2 L89.5 101.5 M72.9 73.3 L71.0 68.3 M201.2 30.0 L204.0 26.1 M102.2 239.0 L99.3 242.1 M298.6 174.3 L302.6 175.0 M273.2 245.3 L277.7 246.0 M81.8 110.5 L76.2 108.0 M286.7 164.7 L291.2 162.3 M293.1 190.2 L299.6 189.1 M54.5 189.1 L50.5 189.3 M286.5 226.4 L289.4 229.4 M197.0 45.5 L199.9 41.0 M174.4 80.1 L175.2 76.7 M261.1 52.1 L262.0 46.1 M60.2 126.2 L54.8 126.4 M302.6 155.4 L306.4 156.9 M104.4 246.8 L101.5 251.6 M202.6 291.4 L204.8 296.3 M105.0 53.8 L104.6 46.9 M277.7 127.4 L281.1 122.2 M91.9 130.3 L90.3 127.3 M275.4 277.6 L280.4 278.5 M206.9 83.3 L210.9 78.2 M58.5 182.8 L55.5 182.2 M302.2 210.6 L308.1 213.6 M281.6 271.3 L286.7 274.3 M197.4 52.3 L198.2 47.8 M161.9 291.3 L162.0 297.9 M195.6 63.9 L193.8 60.5 M314.7 148.5 L321.6 147.7 M277.9 220.5 L280.7 222.1 M72.3 76.3 L68.5 74.5 M198.9 283.4 L199.5 286.4 M77.3 236.5 L72.2 241.1 M238.8 68.3 L238.5 64.9 M67.8 88.0 L65.9 85.4 M194.8 314.0 L193.8 320.2 M183.6 285.5 L180.5 291.6 M292.4 121.3 L294.9 119.4 M265.0 126.1 L266.8 122.3 M265.1 100.5 L267.1 97.8 M214.6 295.8 L215.2 301.2 M283.9 252.0 L286.7 253.6 M219.7 75.9 L220.0 69.6 M69.9 267.4 L67.4 269.1 M47.3 148.9 L41.2 145.9 M197.9 286.5 L199.9 290.9 M83.7 146.5 L78.1 145.2 M278.6 212.0 L283.5 216.6 M266.9 99.6 L269.8 93.2 M157.7 32.9 L155.0 30.1 M251.2 252.5 L254.9 257.4 M77.8 195.3 L73.2 198.4 M266.6 276.5 L268.5 281.7 M228.5 87.4 L228.7 83.2 M81.6 185.5 L75.2 184.4 M224.5 64.4 L229.2 59.7 M247.4 55.8 L248.5 52.1 M310.4 228.2 L313.3 232.1 M150.3 297.0 L145.6 301.4 M186.3 34.6 L184.8 28.1 M105.4 112.7 L103.8 107.2 M75.1 176.2 L70.4 178.7 M81.5 204.3 L76.9 203.6 M170.4 36.4 L169.7 31.6 M312.1 227.6 L317.2 228.8 M254.8 276.7 L257.7 278.1 M285.7 237.5 L288.0 240.3 M68.5 87.8 L63.5 86.4 M156.4 321.2 L154.6 326.2 M112.9 106.3 L110.2 103.7 M263.1 56.4 L264.7 51.3 M302.3 216.8 L305.5 220.2 M209.2 284.3 L211.5 286.3 M231.2 44.4 L230.3 40.9 M81.9 129.0 L78.9 124.5 M178.0 67.6 L176.5 62.4 M186.7 69.0 L188.5 62.8 M270.2 107.1 L275.9 103.4 M174.0 312.4 L175.7 316.3 M306.5 212.2 L310.4 211.3 M197.5 76.7 L196.8 70.7 M83.1 292.2 L77.4 295.0 M309.2 163.9 L315.9 164.1 M80.1 123.3 L76.4 120.8 M182.4 312.3 L180.8 318.5 M195.4 277.3 L196.4 281.7 M252.4 75.6 L255.8 71.8 M53.1 136.1 L48.3 134.1 M189.1 283.4 L187.4 287.8 M286.8 142.8 L291.9 141.2 M77.6 210.4 L73.3 214.8 M195.5 291.3 L197.4 294.6 M290.3 240.4 L293.2 242.7 M73.8 102.7 L70.3 99.2 M145.4 297.5 L145.7 303.3 M166.5 51.5 L166.7 44.6 M47.3 137.9 L43.2 137.3 M54.8 236.6 L50.8 240.9 M324.8 137.0 L329.5 138.5 M94.5 98.4 L91.2 97.9 M65.3 105.9 L62.0 101.6 M53.1 233.8 L47.8 235.0 M52.4 140.0 L47.3 141.0 M118.4 59.1 L118.9 54.4 M74.6 192.6 L69.8 194.1 M253.9 305.8 L254.9 309.3 M240.4 290.0 L246.3 293.7 M241.5 104.6 L247.9 102.0 M54.8 222.1 L51.2 225.3 M105.2 275.5 L104.0 281.8 M60.8 150.1 L56.5 147.1 M86.9 112.9 L81.9 108.3 M163.1 306.0 L165.7 311.9 M105.9 80.8 L102.3 78.8 M193.8 300.3 L193.8 305.0 M163.3 310.0 L161.0 314.3 M216.9 76.3 L219.6 70.0 M123.5 275.5 L120.9 280.8 M135.1 78.4 L130.9 73.5 M263.0 91.8 L266.4 88.7 M54.2 161.8 L50.1 158.4 M175.4 78.0 L171.3 72.4 M314.3 226.2 L318.3 225.2 M235.7 291.1 L241.2 294.2 M229.6 264.2 L231.8 266.5 M30.0 188.5 L24.8 186.5 M56.2 100.6 L50.7 99.2 M94.2 268.7 L90.9 269.7 M72.6 191.6 L67.8 190.3 M161.1 307.9 L161.6 311.2 M227.8 295.3 L231.7 299.6 M131.5 60.2 L132.8 54.4 M104.1 311.4 L101.6 315.6 M224.7 271.3 L229.2 274.6 M279.2 202.0 L284.3 201.2 M168.4 318.7 L170.0 323.2 M114.9 43.0 L112.2 38.2 M48.2 147.8 L43.0 144.2 M181.6 319.9 L183.1 322.9 M73.0 175.0 L67.8 176.1 M293.3 137.9 L299.4 139.1 M46.9 220.9 L42.3 222.9 M274.6 273.8 L278.2 279.4 M128.6 294.9 L127.4 299.2 M193.9 83.6 L194.7 78.8 M262.7 289.6 L265.5 292.4 M181.8 309.8 L180.8 314.5 M55.1 243.5 L52.1 247.7 M69.2 185.5 L65.5 183.5 M43.5 197.3 L39.8 197.2 M260.4 253.9 L263.9 254.4 M305.4 97.5 L307.1 93.4 M166.6 47.2 L167.3 44.1 M280.1 225.2 L284.6 229.4 M192.5 304.3 L192.3 310.5 M74.2 163.1 L71.0 163.8 M51.7 160.2 L47.2 158.6 M58.1 128.2 L54.9 124.8 M37.4 151.4 L31.7 147.5 M198.7 46.4 L197.8 41.2 M286.7 260.0 L289.5 262.8 M55.8 140.2 L51.1 140.3 M135.2 307.7 L134.5 314.2 M132.6 292.0 L130.1 296.0 M185.2 40.9 L187.1 34.9 M299.8 158.5 L304.6 158.6 M124.3 311.3 L122.2 315.4 M63.9 165.5 L60.9 166.0 M32.4 202.3 L29.0 201.1 M318.4 156.0 L321.4 153.2 M253.7 111.3 L257.8 110.4 M114.3 53.8 L109.5 49.7 M77.8 177.1 L73.3 177.0 M226.3 77.0 L226.2 71.3 M175.9 280.1 L175.1 285.4 M152.3 63.1 L152.6 56.4 M48.1 119.6 L44.5 118.9 M56.8 138.7 L50.9 135.2 M322.6 222.9 L327.5 222.6 M190.1 48.8 L191.0 42.5 M175.7 302.8 L176.4 307.6 M88.0 128.9 L84.0 128.8 M304.1 201.3 L310.0 201.6 M286.6 104.8 L290.2 100.4 M273.5 111.1 L277.2 105.9 M308.5 140.0 L312.2 139.9 M246.1 278.0 L249.3 281.1 M111.6 260.8 L110.7 265.3 M213.0 68.3 L214.1 62.6 M323.5 156.9 L329.2 158.3 M306.9 103.4 L311.1 101.5 M286.2 229.2 L289.8 231.6 M318.3 186.5 L321.6 186.3 M37.3 193.5 L32.5 196.3 M124.9 84.9 L121.7 80.5 M297.0 146.7 L300.6 144.7 M292.1 149.4 L295.9 148.5 M108.4 49.7 L106.2 47.1 M159.0 57.5 L159.3 51.8 M263.4 234.7 L266.9 236.0 M226.6 282.7 L229.5 284.6 M43.0 158.7 L39.5 160.0 M166.2 79.6 L165.7 76.1 M139.1 314.1 L137.5 318.8 M110.7 250.0 L106.9 255.1 M227.8 89.0 L230.2 84.9 M237.0 263.5 L237.4 270.2 M306.9 180.0 L312.8 180.7 M74.6 195.0 L69.2 196.1 M137.0 90.5 L133.6 88.0 M190.0 57.1 L191.7 53.3 M68.0 165.4 L63.9 167.5 M272.0 216.7 L276.5 221.8 M37.0 139.2 L32.4 136.7 M275.7 254.0 L280.4 256.8 M113.5 85.1 L108.9 81.9 M59.7 187.9 L55.5 190.8 M186.5 316.2 L186.8 319.9 M310.5 175.5 L316.1 177.2 M296.0 156.6 L300.5 157.1 M301.2 199.6 L305.2 200.5 M164.3 36.5 L164.9 31.5 M297.1 243.6 L302.5 247.6 M55.1 187.6 L51.0 189.7 M225.7 313.1 L229.7 316.2 M73.0 85.6 L67.7 83.8 M282.2 148.1 L286.9 146.4 M236.4 276.4 L239.4 278.6 M308.1 213.9 L313.8 213.6 M294.8 144.0 L299.5 145.1 M107.4 81.2 L105.4 75.6 M144.0 274.2 L140.3 278.8 M96.5 119.0 L90.7 117.6 M218.8 54.7 L217.6 49.2 M89.2 283.0 L88.7 286.4 M56.9 254.6 L53.4 258.8 M304.6 250.3 L309.2 254.7 M217.0 313.2 L218.9 315.6 M116.2 315.4 L116.1 318.5 M166.0 41.8 L163.7 38.5 M271.3 60.5 L275.8 55.6 M298.5 250.1 L301.8 254.6 M187.4 55.6 L187.5 48.7 M55.5 223.9 L49.5 225.3 M284.3 139.4 L290.9 140.0 M124.0 261.1 L120.3 265.1 M303.6 148.1 L309.5 148.5 M245.5 296.5 L249.1 299.6 M161.9 295.5 L160.6 301.3 M137.1 270.4 L132.9 274.8 M252.4 59.9 L253.3 56.8 M69.8 206.3 L64.6 209.9 M301.3 191.1 L304.1 189.6 M77.7 99.4 L72.6 98.7 M63.3 133.2 L59.1 133.0 M248.9 282.6 L251.0 286.5 M128.5 80.4 L124.7 76.5 M177.0 71.8 L178.4 66.6 M218.5 59.8 L223.8 55.7 M210.8 67.4 L212.4 63.7 M253.9 257.1 L255.7 259.9 M67.9 276.1 L63.0 280.0" stroke="#7c2619" stroke-width="0.7" opacity="0.6"/><path d="M118.2 276.6 L118.0 278.7 M258.6 98.3 L260.6 97.8 M78.1 275.4 L74.8 276.0 M287.6 239.6 L291.6 239.3 M280.4 122.6 L282.4 119.2 M269.6 228.1 L271.9 231.9 M289.0 116.4 L291.2 116.0 M40.1 173.8 L36.2 173.3 M230.0 272.2 L231.2 274.1 M143.8 325.0 L142.6 326.8 M254.9 250.2 L259.3 252.1 M73.2 107.4 L70.2 106.1 M265.9 284.5 L267.6 287.1 M222.4 88.1 L223.2 85.0 M299.4 125.8 L301.7 124.6 M304.8 191.5 L306.8 190.7 M53.6 173.4 L51.0 173.0 M128.8 305.6 L127.3 307.1 M78.9 213.6 L76.1 214.1 M301.7 262.7 L304.1 264.0 M289.6 233.8 L294.5 234.1 M235.4 294.4 L238.4 296.9 M205.1 307.8 L207.0 309.7 M130.6 43.9 L130.9 39.5 M206.5 290.9 L206.9 294.7 M90.5 89.3 L88.1 88.1 M266.3 230.8 L270.1 230.9 M286.9 75.2 L289.3 74.7 M110.7 111.7 L108.1 109.9 M143.5 273.8 L144.1 276.5 M63.0 219.4 L60.3 218.9 M273.8 98.2 L276.5 94.7 M182.5 40.2 L183.4 37.3 M116.7 265.6 L116.1 268.9 M157.9 71.4 L158.5 67.9 M60.2 94.8 L57.5 91.7 M172.2 45.2 L172.5 40.5 M112.3 72.2 L112.3 68.6 M146.7 282.2 L146.5 285.7 M150.5 51.4 L149.4 49.7 M93.0 99.1 L89.9 96.5 M283.2 266.9 L288.0 267.9 M82.5 92.9 L79.7 90.3 M28.7 173.6 L24.1 173.8 M231.7 56.7 L235.4 54.3 M277.9 227.1 L279.7 229.1 M277.2 129.8 L280.7 129.7 M157.7 52.7 L159.3 48.2 M306.2 261.3 L308.4 263.1 M182.2 66.9 L183.6 64.3 M218.7 34.3 L219.6 32.3 M170.2 30.7 L168.8 26.8 M265.8 243.1 L267.9 244.9 M133.6 274.4 L132.2 276.1 M221.1 84.7 L224.0 82.7 M98.9 276.9 L98.4 281.4 M277.5 80.1 L279.8 76.6 M31.5 187.7 L29.6 188.9 M84.9 64.8 L82.7 63.6 M44.0 214.9 L40.3 215.1 M282.3 214.5 L285.4 216.7 M265.7 235.3 L268.3 236.7 M126.8 272.1 L125.4 273.8 M306.3 142.1 L309.8 138.9 M92.6 102.1 L89.6 98.7 M68.9 83.3 L64.2 82.0 M86.0 218.9 L83.3 221.3 M143.0 69.5 L143.3 67.5 M258.4 259.7 L261.8 260.6 M199.0 44.9 L199.6 42.7 M267.2 271.2 L269.1 272.4 M59.2 219.0 L55.3 218.2 M120.7 280.0 L118.7 281.8 M107.0 260.5 L105.4 262.5 M242.6 76.3 L244.7 72.4 M83.2 125.6 L80.9 123.3 M285.3 241.6 L287.9 242.4 M123.3 271.8 L123.3 275.5 M188.3 291.2 L187.4 293.6 M123.3 45.7 L121.6 43.9 M131.5 295.2 L128.3 298.3 M242.4 104.5 L243.4 102.7 M92.3 222.2 L90.4 224.6 M256.2 102.6 L257.3 99.9 M239.7 95.9 L240.6 92.7 M183.6 331.7 L182.5 335.7 M87.5 299.0 L83.9 302.3 M194.3 278.6 L194.9 282.2 M278.9 64.7 L280.6 60.6 M310.1 167.4 L312.0 166.5 M316.0 143.9 L320.3 143.6 M327.0 201.5 L329.5 202.8 M59.9 149.6 L57.3 147.1 M240.5 77.9 L241.1 73.3 M113.1 273.1 L112.0 275.0 M330.3 182.0 L334.7 182.0 M283.2 222.1 L287.5 222.7 M279.9 247.4 L283.6 247.9 M88.7 269.1 L86.0 272.4 M290.9 173.9 L294.5 171.7 M289.3 115.5 L291.8 115.1 M257.4 110.3 L262.0 109.5 M93.4 290.6 L90.5 293.6 M93.3 254.3 L89.1 255.9 M274.9 146.1 L278.6 145.8 M199.9 276.1 L199.2 280.8 M153.4 67.8 L153.9 64.5 M293.8 255.8 L297.3 257.9 M306.0 141.5 L309.6 138.6 M85.3 241.7 L81.9 242.6 M326.9 172.1 L330.8 174.3 M165.8 43.2 L165.3 41.0 M77.4 187.0 L72.9 188.0 M184.2 281.4 L185.1 284.9 M305.0 137.8 L307.4 135.6 M308.5 220.8 L312.2 221.9 M60.5 175.3 L56.4 177.6 M196.5 319.7 L197.4 322.5 M76.9 226.8 L74.3 230.3 M51.9 133.4 L49.5 131.6 M99.6 283.7 L98.6 285.8 M58.7 131.4 L55.4 132.0 M39.8 144.7 L37.0 145.0 M100.4 104.4 L98.2 103.8 M77.0 77.2 L74.3 73.8 M281.4 78.2 L283.1 76.0 M326.8 155.7 L330.8 155.6 M124.0 265.3 L123.3 268.1 M90.1 81.9 L89.1 78.2 M288.3 180.5 L290.6 180.1 M285.1 116.7 L287.7 113.1 M94.0 291.7 L91.7 293.4 M72.0 102.3 L70.1 101.3 M297.1 168.6 L299.6 170.0 M65.7 107.6 L63.1 105.3 M93.7 251.6 L92.2 254.0 M145.1 84.3 L144.3 82.1 M319.7 171.1 L323.6 172.0 M213.8 300.4 L214.3 302.4 M281.2 200.8 L283.6 200.8 M72.3 196.9 L70.5 198.2 M323.8 133.3 L327.2 130.0 M223.4 318.7 L224.8 320.2 M91.1 59.2 L90.0 54.5 M123.4 305.1 L119.6 308.1 M316.6 154.6 L320.9 154.8 M66.3 239.9 L61.9 241.7 M300.1 199.3 L304.3 201.2 M32.5 196.3 L28.7 198.1 M136.5 41.8 L137.0 39.9 M49.3 239.6 L47.7 240.9 M143.9 282.8 L141.3 285.8 M93.4 61.2 L91.6 59.7 M65.6 261.8 L61.4 261.8 M267.8 89.4 L271.7 87.7 M46.7 162.9 L42.8 160.6 M234.3 262.4 L235.1 266.4 M233.3 313.5 L236.4 316.6 M254.9 290.1 L258.2 292.2 M271.1 120.5 L275.6 120.3 M278.3 273.3 L279.4 276.8 M67.7 221.4 L65.0 221.2 M117.2 313.0 L115.5 314.3 M315.8 196.3 L320.6 195.9 M79.3 115.2 L78.1 113.3 M39.0 185.6 L37.1 186.5 M197.8 320.8 L199.1 322.3 M94.9 262.2 L90.6 263.6 M188.9 317.5 L188.1 320.5 M125.7 95.0 L123.6 92.3 M56.6 212.2 L52.8 213.7 M38.6 162.5 L34.7 163.6 M252.5 265.3 L256.1 268.5 M288.9 76.8 L291.4 73.5 M176.1 55.5 L176.0 50.6 M91.8 78.2 L88.4 76.5 M70.4 129.8 L67.5 127.0 M211.8 292.9 L211.0 295.6 M58.5 187.3 L53.8 186.0 M258.9 83.4 L260.1 81.4 M282.9 239.8 L285.8 241.5 M305.1 162.8 L307.3 161.6 M126.4 66.6 L125.0 63.7 M66.7 252.1 L65.1 255.5 M69.3 183.0 L65.5 183.3 M190.2 30.3 L191.1 26.2 M76.9 175.1 L72.9 176.4 M86.1 268.6 L83.4 269.5 M35.8 136.8 L33.8 136.3 M123.2 295.4 L121.1 298.7 M292.7 135.2 L295.8 135.0 M74.6 142.7 L69.9 142.7 M292.8 237.4 L295.7 241.2 M232.8 60.6 L233.4 57.1 M241.8 284.5 L243.8 288.5 M320.0 163.6 L323.7 163.6 M52.3 252.6 L49.6 256.2 M289.5 102.3 L292.4 101.3 M61.0 244.0 L57.6 245.2 M308.3 110.4 L311.1 108.4 M150.8 49.5 L150.3 47.3 M155.7 310.4 L155.8 312.9 M178.6 292.4 L177.0 295.7 M96.2 77.3 L93.1 74.4 M60.6 238.1 L58.0 238.5 M307.9 110.8 L310.1 110.8 M197.0 282.8 L198.3 286.4 M236.0 297.8 L237.4 301.1 M49.4 170.6 L45.3 169.1 M141.0 42.9 L140.7 39.5 M257.1 246.0 L259.1 248.7 M194.4 329.1 L194.7 331.9 M32.5 209.5 L30.4 210.7 M102.2 92.7 L99.4 91.6 M285.2 119.7 L287.8 116.9 M274.6 139.6 L277.0 136.3 M67.4 157.4 L62.5 156.8 M232.3 96.4 L234.8 95.3 M112.3 252.4 L110.8 254.7 M63.8 159.8 L60.9 159.3 M74.9 200.7 L71.4 201.0 M56.7 118.6 L53.4 118.2 M276.9 143.7 L279.5 142.4 M87.3 236.6 L84.1 239.9 M55.1 142.0 L52.8 141.5 M265.2 273.9 L266.5 277.9 M275.8 141.7 L279.2 141.1 M75.3 285.9 L72.0 287.1 M288.0 228.5 L290.8 231.5 M35.8 184.3 L31.6 184.9 M147.7 58.8 L148.2 56.6 M261.6 58.9 L263.8 57.3 M300.9 209.8 L303.7 210.5 M85.6 265.4 L82.6 266.7 M118.6 86.0 L116.5 84.4 M124.4 286.7 L121.8 289.2 M290.7 167.6 L293.6 167.4 M311.8 185.7 L313.9 186.0 M79.1 118.6 L74.4 117.1 M282.3 191.1 L284.8 192.2 M172.3 63.8 L170.1 59.7 M197.3 307.2 L196.5 310.8 M127.1 316.7 L124.9 319.9 M83.0 131.1 L81.0 128.0 M294.7 190.9 L297.5 190.3 M197.8 48.5 L198.7 46.3 M252.7 110.4 L254.3 109.2 M273.3 93.5 L275.6 90.8 M45.5 120.2 L42.7 117.7 M37.8 211.1 L33.5 212.0 M143.8 287.6 L141.4 291.9 M293.3 234.3 L296.1 236.0 M149.4 323.5 L147.4 326.4 M171.1 325.5 L170.7 329.2 M43.6 239.5 L40.1 240.8 M100.1 272.4 L98.4 274.7 M171.4 280.9 L172.9 283.6 M127.4 92.3 L124.2 88.9 M162.9 306.1 L161.7 308.7 M130.8 319.2 L131.2 321.3 M279.7 89.2 L282.1 87.7 M100.2 276.1 L98.2 278.2 M94.7 64.6 L93.2 62.2 M47.6 120.6 L45.4 118.0 M286.4 125.6 L289.6 125.9 M69.3 119.5 L65.7 117.0 M47.7 164.7 L44.9 164.8 M316.4 187.4 L320.6 188.9 M316.4 155.4 L318.5 154.5 M270.8 131.5 L275.4 130.9 M245.2 266.8 L247.0 270.5 M303.9 203.6 L306.0 205.1 M84.7 158.2 L81.8 159.3 M301.1 98.8 L302.6 95.0 M283.2 137.7 L287.1 137.4 M83.6 142.6 L81.5 140.9 M263.9 262.6 L267.7 265.5 M256.4 288.6 L257.1 291.6 M85.6 286.8 L84.1 291.1 M63.7 144.8 L62.0 143.1 M108.6 289.4 L106.7 290.4 M313.6 163.4 L316.0 163.6 M59.3 204.0 L57.2 205.5 M253.1 72.2 L256.4 69.6 M76.4 253.9 L73.8 255.1 M52.9 239.0 L50.5 240.6 M266.3 228.9 L268.9 228.7 M75.2 234.0 L72.9 238.0 M281.8 170.4 L286.1 169.2 M183.5 310.5 L185.3 313.0 M271.6 278.3 L272.2 282.4 M177.3 319.3 L177.2 322.3 M158.7 297.7 L159.3 302.4 M49.3 247.3 L46.0 247.6 M66.4 155.2 L62.6 153.6 M68.9 283.6 L66.8 284.3 M155.3 46.2 L155.7 42.8 M308.8 216.6 L313.3 217.3 M171.9 45.0 L172.9 41.6 M76.9 190.2 L73.4 189.5 M242.8 285.1 L246.8 287.0 M255.9 91.8 L258.4 90.1 M79.0 129.7 L76.7 128.8 M296.7 83.1 L300.4 81.2 M123.4 44.0 L121.6 42.4 M234.5 98.4 L236.1 95.2 M294.4 115.5 L295.8 113.2 M54.5 201.9 L51.2 202.2 M288.1 224.2 L292.5 224.8 M220.3 278.9 L220.0 283.7 M84.7 244.6 L81.7 245.0 M305.5 98.9 L309.7 97.3 M290.5 279.7 L291.7 281.9 M118.3 257.4 L116.8 261.1 M261.5 110.8 L264.3 107.9 M287.5 213.1 L289.9 214.8 M200.0 32.9 L199.4 30.5 M99.7 261.8 L97.4 263.1 M306.5 184.4 L308.8 183.9 M148.1 298.2 L145.6 302.3 M43.1 244.8 L41.2 246.8 M88.6 74.8 L85.9 71.6 M160.4 66.4 L161.0 61.6 M219.8 59.7 L221.1 55.2 M295.7 143.3 L299.9 140.8 M52.8 167.0 L49.7 165.2 M241.6 92.5 L244.1 89.2 M94.7 238.4 L90.0 238.4 M159.4 53.3 L158.5 51.2 M131.5 269.5 L130.5 272.4 M93.9 232.4 L91.5 232.4 M76.6 143.0 L73.3 142.5 M73.7 189.8 L69.9 188.0 M76.3 71.9 L73.4 68.6 M46.3 161.3 L43.4 162.5 M44.5 222.1 L41.8 225.1 M225.9 91.7 L226.2 88.1 M146.0 284.3 L143.9 287.5 M273.3 97.1 L273.9 95.0 M269.5 233.1 L271.9 233.8 M264.3 296.5 L266.2 298.9 M203.0 75.6 L201.8 72.3 M32.6 194.1 L29.1 195.3 M96.7 87.4 L94.8 84.4 M144.8 38.3 L146.3 33.7 M229.9 55.0 L229.9 50.6 M226.3 315.7 L228.9 317.7 M176.7 75.7 L178.0 73.2 M232.8 312.3 L232.8 315.1 M86.1 266.8 L82.5 268.7" stroke="#d2624c" stroke-width="0.6" opacity="0.45"/><ellipse cx="180.0" cy="64.0" rx="11" ry="9" transform="rotate(0.0 180.0 64.0)" fill="#363c56" stroke="#55628a" stroke-width="1.1"/><ellipse cx="180.0" cy="64.0" rx="4.5" ry="3.2" transform="rotate(0.0 180.0 64.0)" fill="#4f5878" opacity="0.8"/><ellipse cx="194.5" cy="61.9" rx="17" ry="9.5" transform="rotate(-93.5 194.5 61.9)" fill="#a43729" stroke="#7e2a1d" stroke-width="0.7"/><ellipse cx="164.4" cy="48.9" rx="4.8" ry="3.8" transform="rotate(-73.3 164.4 48.9)" fill="#2a1d1b"/><ellipse cx="162.5" cy="72.5" rx="4.8" ry="3.8" transform="rotate(-113.2 162.5 72.5)" fill="#2a1d1b"/><ellipse cx="202.3" cy="53.7" rx="4.8" ry="3.8" transform="rotate(-98.3 202.3 53.7)" fill="#2a1d1b"/><ellipse cx="187.1" cy="74.8" rx="4.8" ry="3.8" transform="rotate(-89.9 187.1 74.8)" fill="#2a1d1b"/><ellipse cx="219.7" cy="71.0" rx="11" ry="9" transform="rotate(20.0 219.7 71.0)" fill="#363c56" stroke="#55628a" stroke-width="1.1"/><ellipse cx="219.7" cy="71.0" rx="4.5" ry="3.2" transform="rotate(20.0 219.7 71.0)" fill="#4f5878" opacity="0.8"/><ellipse cx="206.8" cy="64.0" rx="17" ry="9.5" transform="rotate(-75.6 206.8 64.0)" fill="#a43729" stroke="#7e2a1d" stroke-width="0.7"/><ellipse cx="238.0" cy="60.6" rx="4.8" ry="3.8" transform="rotate(-56.9 238.0 60.6)" fill="#2a1d1b"/><ellipse cx="230.3" cy="83.8" rx="4.8" ry="3.8" transform="rotate(-82.2 230.3 83.8)" fill="#2a1d1b"/><ellipse cx="202.1" cy="52.7" rx="4.8" ry="3.8" transform="rotate(-64.5 202.1 52.7)" fill="#2a1d1b"/><ellipse cx="208.4" cy="78.7" rx="4.8" ry="3.8" transform="rotate(-63.7 208.4 78.7)" fill="#2a1d1b"/><ellipse cx="254.6" cy="91.1" rx="11" ry="9" transform="rotate(40.0 254.6 91.1)" fill="#363c56" stroke="#55628a" stroke-width="1.1"/><ellipse cx="254.6" cy="91.1" rx="4.5" ry="3.2" transform="rotate(40.0 254.6 91.1)" fill="#4f5878" opacity="0.8"/><ellipse cx="244.8" cy="80.2" rx="17" ry="9.5" transform="rotate(-44.3 244.8 80.2)" fill="#ad3f31" stroke="#7e2a1d" stroke-width="0.7"/><ellipse cx="275.7" cy="86.6" rx="4.8" ry="3.8" transform="rotate(-64.7 275.7 86.6)" fill="#2a1d1b"/><ellipse cx="265.3" cy="108.5" rx="4.8" ry="3.8" transform="rotate(-57.7 265.3 108.5)" fill="#2a1d1b"/><ellipse cx="241.4" cy="68.0" rx="4.8" ry="3.8" transform="rotate(-68.1 241.4 68.0)" fill="#2a1d1b"/><ellipse cx="239.1" cy="95.0" rx="4.8" ry="3.8" transform="rotate(-21.5 239.1 95.0)" fill="#2a1d1b"/><ellipse cx="280.5" cy="122.0" rx="11" ry="9" transform="rotate(60.0 280.5 122.0)" fill="#363c56" stroke="#55628a" stroke-width="1.1"/><ellipse cx="280.5" cy="122.0" rx="4.5" ry="3.2" transform="rotate(60.0 280.5 122.0)" fill="#4f5878" opacity="0.8"/><ellipse cx="275.0" cy="108.4" rx="17" ry="9.5" transform="rotate(-35.6 275.0 108.4)" fill="#ad3f31" stroke="#7e2a1d" stroke-width="0.7"/><ellipse cx="300.2" cy="126.7" rx="4.8" ry="3.8" transform="rotate(-25.5 300.2 126.7)" fill="#2a1d1b"/><ellipse cx="282.8" cy="143.5" rx="4.8" ry="3.8" transform="rotate(-27.2 282.8 143.5)" fill="#2a1d1b"/><ellipse cx="276.9" cy="98.0" rx="4.8" ry="3.8" transform="rotate(-58.3 276.9 98.0)" fill="#2a1d1b"/><ellipse cx="267.7" cy="123.1" rx="4.8" ry="3.8" transform="rotate(-21.7 267.7 123.1)" fill="#2a1d1b"/><ellipse cx="294.2" cy="159.9" rx="11" ry="9" transform="rotate(80.0 294.2 159.9)" fill="#363c56" stroke="#55628a" stroke-width="1.1"/><ellipse cx="294.2" cy="159.9" rx="4.5" ry="3.2" transform="rotate(80.0 294.2 159.9)" fill="#4f5878" opacity="0.8"/><ellipse cx="293.8" cy="145.2" rx="17" ry="9.5" transform="rotate(-15.7 293.8 145.2)" fill="#b8473a" stroke="#7e2a1d" stroke-width="0.7"/><ellipse cx="312.3" cy="170.9" rx="4.8" ry="3.8" transform="rotate(-24.9 312.3 170.9)" fill="#2a1d1b"/><ellipse cx="290.5" cy="179.4" rx="4.8" ry="3.8" transform="rotate(-28.0 290.5 179.4)" fill="#2a1d1b"/><ellipse cx="299.3" cy="137.3" rx="4.8" ry="3.8" transform="rotate(-3.2 299.3 137.3)" fill="#2a1d1b"/><ellipse cx="280.8" cy="157.2" rx="4.8" ry="3.8" transform="rotate(8.7 280.8 157.2)" fill="#2a1d1b"/><ellipse cx="294.2" cy="200.1" rx="11" ry="9" transform="rotate(100.0 294.2 200.1)" fill="#363c56" stroke="#55628a" stroke-width="1.1"/><ellipse cx="294.2" cy="200.1" rx="4.5" ry="3.2" transform="rotate(100.0 294.2 200.1)" fill="#4f5878" opacity="0.8"/><ellipse cx="298.8" cy="186.2" rx="17" ry="9.5" transform="rotate(6.3 298.8 186.2)" fill="#bd4c3a" stroke="#7e2a1d" stroke-width="0.7"/><ellipse cx="309.7" cy="215.1" rx="4.8" ry="3.8" transform="rotate(20.9 309.7 215.1)" fill="#2a1d1b"/><ellipse cx="282.8" cy="217.9" rx="4.8" ry="3.8" transform="rotate(13.6 282.8 217.9)" fill="#2a1d1b"/><ellipse cx="308.0" cy="179.5" rx="4.8" ry="3.8" transform="rotate(13.7 308.0 179.5)" fill="#2a1d1b"/><ellipse cx="283.5" cy="189.1" rx="4.8" ry="3.8" transform="rotate(28.0 283.5 189.1)" fill="#2a1d1b"/><ellipse cx="280.5" cy="238.0" rx="11" ry="9" transform="rotate(120.0 280.5 238.0)" fill="#363c56" stroke="#55628a" stroke-width="1.1"/><ellipse cx="280.5" cy="238.0" rx="4.5" ry="3.2" transform="rotate(120.0 280.5 238.0)" fill="#4f5878" opacity="0.8"/><ellipse cx="289.5" cy="226.5" rx="17" ry="9.5" transform="rotate(31.5 289.5 226.5)" fill="#bd4c3a" stroke="#7e2a1d" stroke-width="0.7"/><ellipse cx="286.3" cy="258.1" rx="4.8" ry="3.8" transform="rotate(37.0 286.3 258.1)" fill="#2a1d1b"/><ellipse cx="265.1" cy="251.9" rx="4.8" ry="3.8" transform="rotate(48.7 265.1 251.9)" fill="#2a1d1b"/><ellipse cx="301.9" cy="221.7" rx="4.8" ry="3.8" transform="rotate(31.9 301.9 221.7)" fill="#2a1d1b"/><ellipse cx="271.1" cy="227.0" rx="4.8" ry="3.8" transform="rotate(51.5 271.1 227.0)" fill="#2a1d1b"/><ellipse cx="254.6" cy="268.9" rx="11" ry="9" transform="rotate(140.0 254.6 268.9)" fill="#363c56" stroke="#55628a" stroke-width="1.1"/><ellipse cx="254.6" cy="268.9" rx="4.5" ry="3.2" transform="rotate(140.0 254.6 268.9)" fill="#4f5878" opacity="0.8"/><ellipse cx="267.0" cy="261.2" rx="17" ry="9.5" transform="rotate(49.9 267.0 261.2)" fill="#bd4c3a" stroke="#7e2a1d" stroke-width="0.7"/><ellipse cx="257.3" cy="288.8" rx="4.8" ry="3.8" transform="rotate(44.0 257.3 288.8)" fill="#2a1d1b"/><ellipse cx="237.0" cy="272.8" rx="4.8" ry="3.8" transform="rotate(70.7 237.0 272.8)" fill="#2a1d1b"/><ellipse cx="277.7" cy="260.4" rx="4.8" ry="3.8" transform="rotate(74.5 277.7 260.4)" fill="#2a1d1b"/><ellipse cx="253.5" cy="255.0" rx="4.8" ry="3.8" transform="rotate(42.9 253.5 255.0)" fill="#2a1d1b"/><ellipse cx="219.7" cy="289.0" rx="11" ry="9" transform="rotate(160.0 219.7 289.0)" fill="#363c56" stroke="#55628a" stroke-width="1.1"/><ellipse cx="219.7" cy="289.0" rx="4.5" ry="3.2" transform="rotate(160.0 219.7 289.0)" fill="#4f5878" opacity="0.8"/><ellipse cx="234.0" cy="286.0" rx="17" ry="9.5" transform="rotate(75.9 234.0 286.0)" fill="#bd4c3a" stroke="#7e2a1d" stroke-width="0.7"/><ellipse cx="214.6" cy="308.2" rx="4.8" ry="3.8" transform="rotate(66.1 214.6 308.2)" fill="#2a1d1b"/><ellipse cx="202.3" cy="286.3" rx="4.8" ry="3.8" transform="rotate(92.2 202.3 286.3)" fill="#2a1d1b"/><ellipse cx="245.1" cy="288.7" rx="4.8" ry="3.8" transform="rotate(41.0 245.1 288.7)" fill="#2a1d1b"/><ellipse cx="220.8" cy="276.3" rx="4.8" ry="3.8" transform="rotate(90.6 220.8 276.3)" fill="#2a1d1b"/><ellipse cx="180.0" cy="296.0" rx="11" ry="9" transform="rotate(180.0 180.0 296.0)" fill="#363c56" stroke="#55628a" stroke-width="1.1"/><ellipse cx="180.0" cy="296.0" rx="4.5" ry="3.2" transform="rotate(180.0 180.0 296.0)" fill="#4f5878" opacity="0.8"/><ellipse cx="165.5" cy="298.1" rx="17" ry="9.5" transform="rotate(93.3 165.5 298.1)" fill="#a43729" stroke="#7e2a1d" stroke-width="0.7"/><ellipse cx="191.6" cy="313.6" rx="4.8" ry="3.8" transform="rotate(117.9 191.6 313.6)" fill="#2a1d1b"/><ellipse cx="198.9" cy="287.5" rx="4.8" ry="3.8" transform="rotate(102.5 198.9 287.5)" fill="#2a1d1b"/><ellipse cx="152.8" cy="303.7" rx="4.8" ry="3.8" transform="rotate(101.3 152.8 303.7)" fill="#2a1d1b"/><ellipse cx="173.9" cy="285.2" rx="4.8" ry="3.8" transform="rotate(75.4 173.9 285.2)" fill="#2a1d1b"/><ellipse cx="140.3" cy="289.0" rx="11" ry="9" transform="rotate(200.0 140.3 289.0)" fill="#363c56" stroke="#55628a" stroke-width="1.1"/><ellipse cx="140.3" cy="289.0" rx="4.5" ry="3.2" transform="rotate(200.0 140.3 289.0)" fill="#4f5878" opacity="0.8"/><ellipse cx="126.0" cy="286.0" rx="17" ry="9.5" transform="rotate(104.6 126.0 286.0)" fill="#ad3f31" stroke="#7e2a1d" stroke-width="0.7"/><ellipse cx="148.5" cy="308.0" rx="4.8" ry="3.8" transform="rotate(81.5 148.5 308.0)" fill="#2a1d1b"/><ellipse cx="157.6" cy="286.8" rx="4.8" ry="3.8" transform="rotate(86.7 157.6 286.8)" fill="#2a1d1b"/><ellipse cx="115.4" cy="289.5" rx="4.8" ry="3.8" transform="rotate(138.1 115.4 289.5)" fill="#2a1d1b"/><ellipse cx="138.5" cy="274.3" rx="4.8" ry="3.8" transform="rotate(112.0 138.5 274.3)" fill="#2a1d1b"/><ellipse cx="105.4" cy="268.9" rx="11" ry="9" transform="rotate(220.0 105.4 268.9)" fill="#363c56" stroke="#55628a" stroke-width="1.1"/><ellipse cx="105.4" cy="268.9" rx="4.5" ry="3.2" transform="rotate(220.0 105.4 268.9)" fill="#4f5878" opacity="0.8"/><ellipse cx="93.0" cy="261.2" rx="17" ry="9.5" transform="rotate(124.5 93.0 261.2)" fill="#b34234" stroke="#7e2a1d" stroke-width="0.7"/><ellipse cx="105.3" cy="291.6" rx="4.8" ry="3.8" transform="rotate(113.9 105.3 291.6)" fill="#2a1d1b"/><ellipse cx="125.0" cy="276.1" rx="4.8" ry="3.8" transform="rotate(158.0 125.0 276.1)" fill="#2a1d1b"/><ellipse cx="82.6" cy="261.9" rx="4.8" ry="3.8" transform="rotate(125.1 82.6 261.9)" fill="#2a1d1b"/><ellipse cx="108.1" cy="254.9" rx="4.8" ry="3.8" transform="rotate(128.4 108.1 254.9)" fill="#2a1d1b"/><ellipse cx="79.5" cy="238.0" rx="11" ry="9" transform="rotate(240.0 79.5 238.0)" fill="#363c56" stroke="#55628a" stroke-width="1.1"/><ellipse cx="79.5" cy="238.0" rx="4.5" ry="3.2" transform="rotate(240.0 79.5 238.0)" fill="#4f5878" opacity="0.8"/><ellipse cx="70.5" cy="226.5" rx="17" ry="9.5" transform="rotate(149.1 70.5 226.5)" fill="#b8473a" stroke="#7e2a1d" stroke-width="0.7"/><ellipse cx="72.9" cy="257.5" rx="4.8" ry="3.8" transform="rotate(151.6 72.9 257.5)" fill="#2a1d1b"/><ellipse cx="96.6" cy="250.7" rx="4.8" ry="3.8" transform="rotate(164.6 96.6 250.7)" fill="#2a1d1b"/><ellipse cx="59.4" cy="220.5" rx="4.8" ry="3.8" transform="rotate(154.4 59.4 220.5)" fill="#2a1d1b"/><ellipse cx="88.6" cy="226.4" rx="4.8" ry="3.8" transform="rotate(151.5 88.6 226.4)" fill="#2a1d1b"/><ellipse cx="65.8" cy="200.1" rx="11" ry="9" transform="rotate(260.0 65.8 200.1)" fill="#363c56" stroke="#55628a" stroke-width="1.1"/><ellipse cx="65.8" cy="200.1" rx="4.5" ry="3.2" transform="rotate(260.0 65.8 200.1)" fill="#4f5878" opacity="0.8"/><ellipse cx="61.2" cy="186.2" rx="17" ry="9.5" transform="rotate(167.9 61.2 186.2)" fill="#ad3f31" stroke="#7e2a1d" stroke-width="0.7"/><ellipse cx="52.7" cy="215.7" rx="4.8" ry="3.8" transform="rotate(180.5 52.7 215.7)" fill="#2a1d1b"/><ellipse cx="76.7" cy="217.0" rx="4.8" ry="3.8" transform="rotate(167.0 76.7 217.0)" fill="#2a1d1b"/><ellipse cx="51.4" cy="179.2" rx="4.8" ry="3.8" transform="rotate(166.2 51.4 179.2)" fill="#2a1d1b"/><ellipse cx="76.5" cy="193.5" rx="4.8" ry="3.8" transform="rotate(194.4 76.5 193.5)" fill="#2a1d1b"/><ellipse cx="65.8" cy="159.9" rx="11" ry="9" transform="rotate(280.0 65.8 159.9)" fill="#363c56" stroke="#55628a" stroke-width="1.1"/><ellipse cx="65.8" cy="159.9" rx="4.5" ry="3.2" transform="rotate(280.0 65.8 159.9)" fill="#4f5878" opacity="0.8"/><ellipse cx="66.2" cy="145.2" rx="17" ry="9.5" transform="rotate(193.8 66.2 145.2)" fill="#a43729" stroke="#7e2a1d" stroke-width="0.7"/><ellipse cx="49.0" cy="168.1" rx="4.8" ry="3.8" transform="rotate(178.8 49.0 168.1)" fill="#2a1d1b"/><ellipse cx="70.4" cy="176.4" rx="4.8" ry="3.8" transform="rotate(192.6 70.4 176.4)" fill="#2a1d1b"/><ellipse cx="59.1" cy="136.8" rx="4.8" ry="3.8" transform="rotate(197.3 59.1 136.8)" fill="#2a1d1b"/><ellipse cx="80.5" cy="153.4" rx="4.8" ry="3.8" transform="rotate(206.5 80.5 153.4)" fill="#2a1d1b"/><ellipse cx="79.5" cy="122.0" rx="11" ry="9" transform="rotate(300.0 79.5 122.0)" fill="#363c56" stroke="#55628a" stroke-width="1.1"/><ellipse cx="79.5" cy="122.0" rx="4.5" ry="3.2" transform="rotate(300.0 79.5 122.0)" fill="#4f5878" opacity="0.8"/><ellipse cx="85.0" cy="108.4" rx="17" ry="9.5" transform="rotate(211.8 85.0 108.4)" fill="#b8473a" stroke="#7e2a1d" stroke-width="0.7"/><ellipse cx="58.2" cy="124.1" rx="4.8" ry="3.8" transform="rotate(201.6 58.2 124.1)" fill="#2a1d1b"/><ellipse cx="79.7" cy="138.5" rx="4.8" ry="3.8" transform="rotate(183.8 79.7 138.5)" fill="#2a1d1b"/><ellipse cx="84.8" cy="96.4" rx="4.8" ry="3.8" transform="rotate(239.5 84.8 96.4)" fill="#2a1d1b"/><ellipse cx="93.0" cy="123.3" rx="4.8" ry="3.8" transform="rotate(181.2 93.0 123.3)" fill="#2a1d1b"/><ellipse cx="105.4" cy="91.1" rx="11" ry="9" transform="rotate(320.0 105.4 91.1)" fill="#363c56" stroke="#55628a" stroke-width="1.1"/><ellipse cx="105.4" cy="91.1" rx="4.5" ry="3.2" transform="rotate(320.0 105.4 91.1)" fill="#4f5878" opacity="0.8"/><ellipse cx="115.2" cy="80.2" rx="17" ry="9.5" transform="rotate(225.9 115.2 80.2)" fill="#a43729" stroke="#7e2a1d" stroke-width="0.7"/><ellipse cx="82.8" cy="90.2" rx="4.8" ry="3.8" transform="rotate(249.0 82.8 90.2)" fill="#2a1d1b"/><ellipse cx="97.7" cy="104.8" rx="4.8" ry="3.8" transform="rotate(255.9 97.7 104.8)" fill="#2a1d1b"/><ellipse cx="115.5" cy="68.6" rx="4.8" ry="3.8" transform="rotate(206.7 115.5 68.6)" fill="#2a1d1b"/><ellipse cx="117.9" cy="98.3" rx="4.8" ry="3.8" transform="rotate(202.6 117.9 98.3)" fill="#2a1d1b"/><ellipse cx="140.3" cy="71.0" rx="11" ry="9" transform="rotate(340.0 140.3 71.0)" fill="#363c56" stroke="#55628a" stroke-width="1.1"/><ellipse cx="140.3" cy="71.0" rx="4.5" ry="3.2" transform="rotate(340.0 140.3 71.0)" fill="#4f5878" opacity="0.8"/><ellipse cx="153.2" cy="64.0" rx="17" ry="9.5" transform="rotate(247.9 153.2 64.0)" fill="#bd4c3a" stroke="#7e2a1d" stroke-width="0.7"/><ellipse cx="123.0" cy="58.8" rx="4.8" ry="3.8" transform="rotate(257.7 123.0 58.8)" fill="#2a1d1b"/><ellipse cx="125.4" cy="86.0" rx="4.8" ry="3.8" transform="rotate(268.4 125.4 86.0)" fill="#2a1d1b"/><ellipse cx="158.0" cy="52.5" rx="4.8" ry="3.8" transform="rotate(260.0 158.0 52.5)" fill="#2a1d1b"/><ellipse cx="153.1" cy="78.7" rx="4.8" ry="3.8" transform="rotate(228.2 153.1 78.7)" fill="#2a1d1b"/></svg>
<div class="a" style="left:388px;top:84px;width:1px;height:609px;background:#45e2e8;"></div>
<div class="a" style="left:61px;top:397px;width:654px;height:1px;background:#45e2e8;"></div>
<svg class="a" style="left:440px;top:215px;" width="100" height="100" viewBox="0 0 100 100"><rect x="8.7" y="7" width="77" height="83" fill="none" stroke="#2f96e0" stroke-width="1.5"/><rect x="4.8999999999999995" y="3.2" width="7.6" height="7.6" fill="#ffffff" stroke="#2f96e0" stroke-width="1.5"/><rect x="4.8999999999999995" y="44.7" width="7.6" height="7.6" fill="#ffffff" stroke="#2f96e0" stroke-width="1.5"/><rect x="4.8999999999999995" y="86.2" width="7.6" height="7.6" fill="#ffffff" stroke="#2f96e0" stroke-width="1.5"/><rect x="43.400000000000006" y="3.2" width="7.6" height="7.6" fill="#ffffff" stroke="#2f96e0" stroke-width="1.5"/><rect x="43.400000000000006" y="86.2" width="7.6" height="7.6" fill="#ffffff" stroke="#2f96e0" stroke-width="1.5"/><rect x="81.9" y="3.2" width="7.6" height="7.6" fill="#ffffff" stroke="#2f96e0" stroke-width="1.5"/><rect x="81.9" y="44.7" width="7.6" height="7.6" fill="#ffffff" stroke="#2f96e0" stroke-width="1.5"/><rect x="81.9" y="86.2" width="7.6" height="7.6" fill="#ffffff" stroke="#2f96e0" stroke-width="1.5"/></svg>
<div class="a" style="left:733px;top:39px;width:367px;height:13px;background:#414141;"></div>
<svg class="a" style="left:1082px;top:42px;" width="14" height="8" viewBox="0 0 14 8"><path d="M2 1 L5 4 L2 7 M7 1 L10 4 L7 7" fill="none" stroke="#c8c8c8" stroke-width="1.1"/></svg>
<div class="a" style="left:733px;top:52px;width:365px;height:358px;background:#535353;"></div>
<div class="a" style="left:733px;top:52px;width:365px;height:27px;background:#434343;"></div>
<div class="a" style="left:734px;top:52px;width:66px;height:27.5px;background:#535353;"></div>
<div class="a" style="left:800px;top:52px;width:75px;height:27px;background:#474747;"></div>
<div class="a" style="left:875px;top:52px;width:1px;height:27px;background:#3e3e3e;"></div>
<div class="t" style="left:743px;top:58.31px;font-size:10.5px;line-height:10.5px;color:#f2f2f2;font-weight:700;font-style:normal;transform:scaleX(0.905);transform-origin:0 0;">Properties</div>
<div class="t" style="left:808.6px;top:58.31px;font-size:10.5px;line-height:10.5px;color:#b8b8b8;font-weight:700;font-style:normal;transform:scaleX(0.9);transform-origin:0 0;">Adjustments</div>
<svg class="a" style="left:1081px;top:60px;" width="14" height="11" viewBox="0 0 14 11"><path d="M1.5 1.5 H12.5 M1.5 3.6 H12.5 M1.5 5.7 H12.5 M1.5 7.8 H12.5" stroke="#cfcfcf" stroke-width="1.2"/></svg>
<div class="a" style="left:745px;top:85px;width:22.5px;height:22.5px;background:#3c3c3c;border:1px solid #484848;border-radius:2px"></div>
<svg class="a" style="left:748px;top:88px;" width="17" height="17" viewBox="0 0 17 17"><rect x="2" y="3" width="13" height="11" fill="none" stroke="#e6e6e6" stroke-width="1.3"/><path d="M3 13.5 L6.5 8.5 L8.5 11 L10.5 9 L14.5 13.5 Z" fill="#e6e6e6"/><circle cx="11.5" cy="6" r="1.2" fill="#e6e6e6"/></svg>
<div class="t" style="left:773px;top:91.49px;font-size:11px;line-height:11px;color:#dcdcdc;font-weight:400;font-style:normal;transform:scaleX(0.855);transform-origin:0 0;">Pixel Layer</div>
<div class="a" style="left:733px;top:112px;width:365px;height:1.5px;background:#474747;"></div>
<div class="a" style="left:1082px;top:113px;width:15.5px;height:273px;background:#4a4a4a;"></div>
<svg class="a" style="left:1083px;top:119px;" width="13" height="8" viewBox="0 0 13 8"><path d="M3 5.5 L6.5 2 L10 5.5" fill="none" stroke="#d0d0d0" stroke-width="1.1"/></svg>
<svg class="a" style="left:1083px;top:372px;" width="13" height="8" viewBox="0 0 13 8"><path d="M3 2.5 L6.5 6 L10 2.5" fill="none" stroke="#d0d0d0" stroke-width="1.1"/></svg>
<div class="a" style="left:1084.5px;top:130px;width:11px;height:188px;background:#666666;border-radius:1px"></div>
<svg class="a" style="left:740px;top:123px;" width="10" height="7" viewBox="0 0 10 7"><path d="M1 1 L5 5 L9 1" fill="none" stroke="#d6d6d6" stroke-width="1.2"/></svg>
<div class="t" style="left:757.7px;top:120.71px;font-size:10.5px;line-height:10.5px;color:#f2f2f2;font-weight:700;font-style:normal;transform:scaleX(0.985);transform-origin:0 0;">Transform</div>
<div class="t" style="left:777px;top:145.69px;font-size:11px;line-height:11px;color:#7e7e7e;font-weight:400;font-style:normal;transform:scaleX(0.87);transform-origin:0 0;">W</div>
<div class="a" style="left:793px;top:143.3px;width:52px;height:16.19999999999999px;background:#4d4d4d;border:1px solid #5a5a5a;border-radius:1px"></div>
<div class="t" style="left:796px;top:146.19px;font-size:11px;line-height:11px;color:#7e7e7e;font-weight:400;font-style:normal;transform:scaleX(0.87);transform-origin:0 0;">295 px</div>
<div class="t" style="left:863.5px;top:145.69px;font-size:11px;line-height:11px;color:#7e7e7e;font-weight:400;font-style:normal;transform:scaleX(0.87);transform-origin:0 0;">X</div>
<div class="a" style="left:875.5px;top:143.3px;width:52.0px;height:16.19999999999999px;background:#4d4d4d;border:1px solid #5a5a5a;border-radius:1px"></div>
<div class="t" style="left:878.5px;top:146.19px;font-size:11px;line-height:11px;color:#7e7e7e;font-weight:400;font-style:normal;transform:scaleX(0.87);transform-origin:0 0;">1227 px</div>
<div class="t" style="left:778px;top:170.69px;font-size:11px;line-height:11px;color:#7e7e7e;font-weight:400;font-style:normal;transform:scaleX(0.87);transform-origin:0 0;">H</div>
<div class="a" style="left:793px;top:168px;width:52px;height:16.5px;background:#4d4d4d;border:1px solid #5a5a5a;border-radius:1px"></div>
<div class="t" style="left:796px;top:170.99px;font-size:11px;line-height:11px;color:#7e7e7e;font-weight:400;font-style:normal;transform:scaleX(0.87);transform-origin:0 0;">315 px</div>
<div class="t" style="left:864px;top:170.69px;font-size:11px;line-height:11px;color:#7e7e7e;font-weight:400;font-style:normal;transform:scaleX(0.87);transform-origin:0 0;">Y</div>
<div class="a" style="left:875.5px;top:168px;width:52.0px;height:16.5px;background:#4d4d4d;border:1px solid #5a5a5a;border-radius:1px"></div>
<div class="t" style="left:878.5px;top:170.99px;font-size:11px;line-height:11px;color:#7e7e7e;font-weight:400;font-style:normal;transform:scaleX(0.87);transform-origin:0 0;">342 px</div>
<svg class="a" style="left:748px;top:155px;" width="12" height="18" viewBox="0 0 12 18"><path d="M4 7 V4 A2.2 2.2 0 0 1 8.4 4 V6.5 M4 9.5 V12.5 A2.2 2.2 0 0 0 8.4 12.5 V9.5" fill="none" stroke="#9a9a9a" stroke-width="1.3"/><path d="M6.2 5.5 V11" stroke="#9a9a9a" stroke-width="1.2"/></svg>
<svg class="a" style="left:772px;top:196px;" width="18" height="16" viewBox="0 0 18 16"><path d="M2.5 13 H15 M2.5 13 L13 4" fill="none" stroke="#d8d8d8" stroke-width="1.3"/><path d="M9 13 A7 7 0 0 0 7.5 9.2" fill="none" stroke="#d8d8d8" stroke-width="1.1"/></svg>
<div class="a" style="left:793px;top:197px;width:52px;height:16.5px;background:#4d4d4d;border:1px solid #5a5a5a;border-radius:1px"></div>
<div class="a" style="left:831px;top:198px;width:1px;height:14.5px;background:#5a5a5a;"></div>
<div class="t" style="left:797px;top:200.19px;font-size:11px;line-height:11px;color:#7e7e7e;font-weight:400;font-style:normal;transform:scaleX(0.87);transform-origin:0 0;">0,00°</div>
<svg class="a" style="left:834px;top:202px;" width="10" height="7" viewBox="0 0 10 7"><path d="M2 2 L5 5 L8 2" fill="none" stroke="#777" stroke-width="1"/></svg>
<svg class="a" style="left:877px;top:196px;" width="20" height="17" viewBox="0 0 20 17"><path d="M2.5 3 L7.5 8.5 L2.5 14 Z" fill="none" stroke="#b0b0b0" stroke-width="1.2"/><path d="M17.5 3 L12.5 8.5 L17.5 14 Z" fill="#b0b0b0"/><path d="M10 1.5 V15.5" stroke="#b0b0b0" stroke-width="1.1"/></svg>
<svg class="a" style="left:905px;top:194px;" width="18" height="19" viewBox="0 0 18 19"><path d="M3 3 H15 L9 8 Z" fill="none" stroke="#b0b0b0" stroke-width="1.2"/><path d="M3 16.5 H15 L9 11 Z" fill="#b0b0b0"/><path d="M2 9.5 H16" stroke="#b0b0b0" stroke-width="1" stroke-dasharray="1.3 0.9"/></svg>
<div class="a" style="left:733px;top:227px;width:349px;height:1.5px;background:#474747;"></div>
<svg class="a" style="left:740px;top:239px;" width="10" height="7" viewBox="0 0 10 7"><path d="M1 1 L5 5 L9 1" fill="none" stroke="#d6d6d6" stroke-width="1.2"/></svg>
<div class="t" style="left:757.7px;top:237.61px;font-size:10.5px;line-height:10.5px;color:#f2f2f2;font-weight:700;font-style:normal;transform:scaleX(0.995);transform-origin:0 0;">Align and Distribute</div>
<div class="t" style="left:743px;top:259.09px;font-size:11px;line-height:11px;color:#d0d0d0;font-weight:400;font-style:normal;transform:scaleX(0.83);transform-origin:0 0;">Align:</div>
<svg class="a" style="left:748px;top:283.5px;" width="15" height="15" viewBox="0 0 15 15"><path d="M1 0 V15" stroke="#9a9a9a" stroke-width="1.2"/><rect x="3" y="3" width="5.5" height="3.5" fill="#9a9a9a"/><rect x="3" y="8.5" width="10" height="3.5" fill="#9a9a9a"/></svg>
<svg class="a" style="left:776px;top:283.5px;" width="15" height="15" viewBox="0 0 15 15"><path d="M6.5 0 V15" stroke="#9a9a9a" stroke-width="1.2"/><rect x="3.5" y="3" width="6" height="3.5" fill="#9a9a9a"/><rect x="1" y="8.5" width="11" height="3.5" fill="#9a9a9a"/></svg>
<svg class="a" style="left:805px;top:283.5px;" width="15" height="15" viewBox="0 0 15 15"><path d="M13 0 V15" stroke="#9a9a9a" stroke-width="1.2"/><rect x="6" y="3" width="5.5" height="3.5" fill="#9a9a9a"/><rect x="1.5" y="8.5" width="10" height="3.5" fill="#9a9a9a"/></svg>
<svg class="a" style="left:850px;top:283.5px;" width="15" height="15" viewBox="0 0 15 15"><path d="M0 1 H15" stroke="#9a9a9a" stroke-width="1.2"/><rect x="2" y="2.5" width="3.5" height="12" fill="#9a9a9a"/><rect x="8" y="2.5" width="3.5" height="6" fill="#9a9a9a"/></svg>
<svg class="a" style="left:879px;top:283.5px;" width="15" height="15" viewBox="0 0 15 15"><path d="M0 7.5 H15" stroke="#9a9a9a" stroke-width="1.2"/><rect x="2" y="2" width="3.5" height="11" fill="#9a9a9a"/><rect x="8" y="4" width="3.5" height="7" fill="#9a9a9a"/></svg>
<svg class="a" style="left:907px;top:283.5px;" width="15" height="15" viewBox="0 0 15 15"><path d="M0 14 H15" stroke="#9a9a9a" stroke-width="1.2"/><rect x="2" y="1" width="3.5" height="12" fill="#9a9a9a"/><rect x="8" y="6" width="3.5" height="7" fill="#9a9a9a"/></svg>
<svg class="a" style="left:908px;top:318px;" width="18" height="8" viewBox="0 0 18 8"><circle cx="3" cy="4" r="1.6" fill="#ececec"/><circle cx="8.5" cy="4" r="1.6" fill="#ececec"/><circle cx="14" cy="4" r="1.6" fill="#ececec"/></svg>
<div class="a" style="left:733px;top:334.5px;width:349px;height:1.5px;background:#474747;"></div>
<svg class="a" style="left:740px;top:348px;" width="10" height="7" viewBox="0 0 10 7"><path d="M1 1 L5 5 L9 1" fill="none" stroke="#d6d6d6" stroke-width="1.2"/></svg>
<div class="t" style="left:757.7px;top:346.61px;font-size:10.5px;line-height:10.5px;color:#f2f2f2;font-weight:700;font-style:normal;transform:scaleX(0.955);transform-origin:0 0;">Quick Actions</div>
<div class="a" style="left:733px;top:410px;width:367px;height:3px;background:#3d3d3d;"></div>
<div class="a" style="left:733px;top:413px;width:365px;height:280px;background:#535353;"></div>
<div class="a" style="left:733px;top:413px;width:365px;height:28.5px;background:#434343;"></div>
<div class="a" style="left:735px;top:413px;width:46px;height:29px;background:#535353;"></div>
<div class="a" style="left:781.5px;top:413px;width:58px;height:28.5px;background:#474747;"></div>
<div class="a" style="left:840px;top:413px;width:43px;height:28.5px;background:#474747;"></div>
<div class="a" style="left:839.5px;top:413px;width:0.8px;height:28.5px;background:#3e3e3e;"></div>
<div class="a" style="left:883px;top:413px;width:1px;height:28.5px;background:#3e3e3e;"></div>
<div class="t" style="left:743.4px;top:421.11px;font-size:10.5px;line-height:10.5px;color:#f2f2f2;font-weight:700;font-style:normal;transform:scaleX(0.86);transform-origin:0 0;">Layers</div>
<div class="t" style="left:789.7px;top:421.11px;font-size:10.5px;line-height:10.5px;color:#b8b8b8;font-weight:700;font-style:normal;transform:scaleX(0.89);transform-origin:0 0;">Channels</div>
<div class="t" style="left:849.2px;top:421.11px;font-size:10.5px;line-height:10.5px;color:#b8b8b8;font-weight:700;font-style:normal;transform:scaleX(0.875);transform-origin:0 0;">Paths</div>
<svg class="a" style="left:1081px;top:423px;" width="14" height="11" viewBox="0 0 14 11"><path d="M1.5 1.5 H12.5 M1.5 3.6 H12.5 M1.5 5.7 H12.5 M1.5 7.8 H12.5" stroke="#cfcfcf" stroke-width="1.2"/></svg>
<div class="a" style="left:738px;top:450.5px;width:85.5px;height:17px;background:#4e4e4e;border:1px solid #616161;border-radius:3px"></div>
<svg class="a" style="left:743px;top:452px;" width="14" height="14" viewBox="0 0 14 14"><circle cx="6" cy="6" r="3.8" fill="none" stroke="#8e8e8e" stroke-width="1.3"/><path d="M8.8 8.8 L12 12" stroke="#8e8e8e" stroke-width="1.5"/></svg>
<div class="t" style="left:760px;top:453.69px;font-size:11px;line-height:11px;color:#8a8a8a;font-weight:400;font-style:normal;transform:scaleX(0.83);transform-origin:0 0;">Kind</div>
<svg class="a" style="left:811px;top:456px;" width="10" height="7" viewBox="0 0 10 7"><path d="M2 2 L5 5 L8 2" fill="none" stroke="#777" stroke-width="1"/></svg>
<svg class="a" style="left:834px;top:452px;" width="16" height="14" viewBox="0 0 16 14"><rect x="1.5" y="2" width="13" height="10" fill="none" stroke="#a8a8a8" stroke-width="1.4"/><path d="M3.5 10.5 L6 7 L8 9 L10 7.5 L12.5 10.5 Z" fill="#a8a8a8"/></svg>
<svg class="a" style="left:857px;top:451px;" width="15" height="15" viewBox="0 0 15 15"><circle cx="7.5" cy="7.5" r="5.2" fill="none" stroke="#a8a8a8" stroke-width="1.4"/><path d="M3.8 11.2 L11.2 3.8 A5.2 5.2 0 0 0 3.8 11.2 Z" fill="#a8a8a8"/></svg>
<svg class="a" style="left:882px;top:451px;" width="14" height="15" viewBox="0 0 14 15"><path d="M2 5 V2.5 H12 V5 M7 2.5 V13 M4.5 13 H9.5" fill="none" stroke="#a8a8a8" stroke-width="1.6"/></svg>
<svg class="a" style="left:905px;top:451px;" width="15" height="15" viewBox="0 0 15 15"><rect x="3" y="3" width="9" height="9" fill="none" stroke="#a8a8a8" stroke-width="1.3"/><circle cx="3" cy="3" r="1.6" fill="#a8a8a8"/><circle cx="12" cy="3" r="1.6" fill="#a8a8a8"/><circle cx="3" cy="12" r="1.6" fill="#a8a8a8"/><circle cx="12" cy="12" r="1.6" fill="#a8a8a8"/></svg>
<svg class="a" style="left:929px;top:451px;" width="15" height="15" viewBox="0 0 15 15"><path d="M5 1.5 H9.5 L12.5 4.5 V13 H7" fill="none" stroke="#a8a8a8" stroke-width="1.3"/><path d="M9.5 1.5 V4.5 H12.5" fill="none" stroke="#a8a8a8" stroke-width="1"/><rect x="2" y="7" width="6" height="6.5" fill="#a8a8a8"/></svg>
<div class="a" style="left:954px;top:456px;width:9.5px;height:13px;background:#4a4a4a;border-radius:5px"></div>
<svg class="a" style="left:953px;top:450px;" width="12" height="12" viewBox="0 0 12 12"><circle cx="6" cy="5.5" r="4.3" fill="#9c9c9c"/></svg>
<div class="a" style="left:733px;top:472.5px;width:365px;height:1.5px;background:#474747;"></div>
<div class="a" style="left:738px;top:478.5px;width:128px;height:17px;background:#424242;border:1px solid #626262;border-radius:3px"></div>
<div class="t" style="left:746.5px;top:481.29px;font-size:11px;line-height:11px;color:#ececec;font-weight:400;font-style:normal;transform:scaleX(0.855);transform-origin:0 0;">Normal</div>
<svg class="a" style="left:854px;top:484px;" width="10" height="7" viewBox="0 0 10 7"><path d="M1.5 1.5 L5 5 L8.5 1.5" fill="none" stroke="#e0e0e0" stroke-width="1.3"/></svg>
<div class="t" style="left:872.6px;top:481.29px;font-size:11px;line-height:11px;color:#dcdcdc;font-weight:400;font-style:normal;transform:scaleX(0.86);transform-origin:0 0;">Opacity:</div>
<div class="a" style="left:912px;top:478.5px;width:51px;height:17px;background:#4a4a4a;border:1px solid #626262;border-radius:3px"></div>
<div class="a" style="left:913.5px;top:480px;width:34px;height:14px;background:#3d3d3d;"></div>
<div class="a" style="left:948.5px;top:480px;width:13px;height:14px;background:#3d3d3d;"></div>
<svg class="a" style="left:950px;top:483.5px;" width="10" height="7" viewBox="0 0 10 7"><path d="M1.5 1.5 L5 5 L8.5 1.5" fill="none" stroke="#e6e6e6" stroke-width="1.3"/></svg>
<div class="t" style="left:915.5px;top:481.29px;font-size:11px;line-height:11px;color:#f0f0f0;font-weight:400;font-style:normal;transform:scaleX(0.85);transform-origin:0 0;">100%</div>
<div class="a" style="left:733px;top:499px;width:365px;height:1.5px;background:#474747;"></div>
<div class="t" style="left:740.6px;top:508.69px;font-size:11px;line-height:11px;color:#858585;font-weight:400;font-style:normal;transform:scaleX(0.84);transform-origin:0 0;">Lock:</div>
<svg class="a" style="left:771px;top:508px;" width="14" height="14" viewBox="0 0 14 14"><rect x="1" y="1" width="12" height="12" fill="none" stroke="#a0a0a0" stroke-width="1.2"/><rect x="1" y="1" width="3" height="3" fill="#a0a0a0"/><rect x="1" y="7" width="3" height="3" fill="#a0a0a0"/><rect x="4" y="4" width="3" height="3" fill="#a0a0a0"/><rect x="4" y="10" width="3" height="3" fill="#a0a0a0"/><rect x="7" y="1" width="3" height="3" fill="#a0a0a0"/><rect x="7" y="7" width="3" height="3" fill="#a0a0a0"/><rect x="10" y="4" width="3" height="3" fill="#a0a0a0"/><rect x="10" y="10" width="3" height="3" fill="#a0a0a0"/></svg>
<svg class="a" style="left:794px;top:507px;" width="15" height="16" viewBox="0 0 15 16"><path d="M13.5 1.5 Q10 6 7.5 9 L6 7.5 Q9.5 4.5 13.5 1.5 Z" fill="#a0a0a0"/><path d="M5.5 8 Q3 8.5 2.8 11 Q2.5 13.5 1.5 14.5 Q5.5 14.5 7 12.5 Q7.8 11.2 7.8 10 Z" fill="#a0a0a0"/></svg>
<svg class="a" style="left:814px;top:507px;" width="16" height="16" viewBox="0 0 16 16"><path d="M8 2.5 V13.5 M2.5 8 H13.5" stroke="#a0a0a0" stroke-width="1.3"/><path d="M8 1 L10.3 3.5 H5.7 Z M8 15 L10.3 12.5 H5.7 Z M1 8 L3.5 5.7 V10.3 Z M15 8 L12.5 5.7 V10.3 Z" fill="#a0a0a0"/></svg>
<svg class="a" style="left:836px;top:507px;" width="16" height="16" viewBox="0 0 16 16"><rect x="3.5" y="4" width="9" height="8" fill="none" stroke="#a0a0a0" stroke-width="1.2"/><path d="M1 4 H3.5 M12.5 12 H15 M3.5 1 V4 M12.5 12 V15 M1 12 H3.5 M3.5 12 V15" stroke="#a0a0a0" stroke-width="1.1"/></svg>
<svg class="a" style="left:858px;top:507px;" width="14" height="16" viewBox="0 0 14 16"><path d="M4 7 V4.5 A3 3 0 0 1 10 4.5 V7" fill="none" stroke="#a0a0a0" stroke-width="1.5"/><rect x="2.5" y="7" width="9" height="7.5" rx="0.8" fill="#a0a0a0"/><circle cx="7" cy="10.7" r="1.1" fill="#535353"/></svg>
<div class="t" style="left:893px;top:508.69px;font-size:11px;line-height:11px;color:#dcdcdc;font-weight:400;font-style:normal;transform:scaleX(0.86);transform-origin:0 0;">Fill:</div>
<div class="a" style="left:912px;top:506.0px;width:51px;height:16.5px;background:#4a4a4a;border:1px solid #626262;border-radius:3px"></div>
<div class="a" style="left:913.5px;top:507.5px;width:34px;height:13.5px;background:#3d3d3d;"></div>
<div class="a" style="left:948.5px;top:507.5px;width:13px;height:13.5px;background:#3d3d3d;"></div>
<svg class="a" style="left:950px;top:510.75px;" width="10" height="7" viewBox="0 0 10 7"><path d="M1.5 1.5 L5 5 L8.5 1.5" fill="none" stroke="#e6e6e6" stroke-width="1.3"/></svg>
<div class="t" style="left:915.5px;top:508.69px;font-size:11px;line-height:11px;color:#f0f0f0;font-weight:400;font-style:normal;transform:scaleX(0.85);transform-origin:0 0;">100%</div>
<div class="a" style="left:733px;top:527px;width:365px;height:1.5px;background:#474747;"></div>
<div class="a" style="left:1082px;top:530px;width:15.5px;height:163px;background:#4b4b4b;"></div>
<div class="a" style="left:764px;top:529px;width:1px;height:25px;background:#474747;"></div>
<svg class="a" style="left:741px;top:537.5px;" width="17" height="11" viewBox="0 0 17 11"><path d="M1.5 5.5 Q8.5 -2 15.5 5.5 Q8.5 13 1.5 5.5 Z" fill="#f0f0f0"/><circle cx="8.5" cy="5.5" r="3" fill="#3a3a3a"/><circle cx="8.8" cy="5" r="1.2" fill="#a0a0a0"/></svg>
<svg class="a" style="left:766px;top:538px;" width="8" height="10" viewBox="0 0 8 10"><path d="M2.5 1.5 L5.5 5 L2.5 8.5" fill="none" stroke="#d8d8d8" stroke-width="1.1"/></svg>
<svg class="a" style="left:778px;top:535px;" width="18" height="15" viewBox="0 0 18 15"><path d="M1.5 3 H6.5 L8 4.5 H15.5 V13.5 H1.5 Z" fill="#dcdcdc"/><path d="M1.5 5 H15.5" stroke="#bdbdbd" stroke-width="0.8"/></svg>
<div class="t" style="left:805.9px;top:536.89px;font-size:11px;line-height:11px;color:#e6e6e6;font-weight:400;font-style:normal;transform:scaleX(0.86);transform-origin:0 0;">Group 1</div>
<div class="a" style="left:733px;top:553px;width:349px;height:1px;background:#474747;"></div>
<div class="a" style="left:733px;top:554px;width:349px;height:41.5px;background:#6a6a6a;"></div>
<div class="a" style="left:733px;top:554px;width:31px;height:41.5px;background:#5a5a5a;"></div>
<div class="a" style="left:764px;top:554px;width:1px;height:41.5px;background:#4f4f4f;"></div>
<svg class="a" style="left:741px;top:570.5px;" width="17" height="11" viewBox="0 0 17 11"><path d="M1.5 5.5 Q8.5 -2 15.5 5.5 Q8.5 13 1.5 5.5 Z" fill="#f0f0f0"/><circle cx="8.5" cy="5.5" r="3" fill="#3a3a3a"/><circle cx="8.8" cy="5" r="1.2" fill="#a0a0a0"/></svg>
<svg class="a" style="left:765px;top:557.5px;" width="37" height="37" viewBox="0 0 37 37"><rect x="2.5" y="2.5" width="32" height="31.5" fill="#2a2a2a"/><g transform="translate(4,4)"><rect width="29" height="28.5" fill="#f4f4f4"/><rect x="0" y="0" width="2" height="2" fill="#cfcfcf"/><rect x="0" y="4" width="2" height="2" fill="#cfcfcf"/><rect x="0" y="8" width="2" height="2" fill="#cfcfcf"/><rect x="0" y="12" width="2" height="2" fill="#cfcfcf"/><rect x="0" y="16" width="2" height="2" fill="#cfcfcf"/><rect x="0" y="20" width="2" height="2" fill="#cfcfcf"/><rect x="0" y="24" width="2" height="2" fill="#cfcfcf"/><rect x="0" y="28" width="2" height="2" fill="#cfcfcf"/><rect x="2" y="2" width="2" height="2" fill="#cfcfcf"/><rect x="2" y="6" width="2" height="2" fill="#cfcfcf"/><rect x="2" y="10" width="2" height="2" fill="#cfcfcf"/><rect x="2" y="14" width="2" height="2" fill="#cfcfcf"/><rect x="2" y="18" width="2" height="2" fill="#cfcfcf"/><rect x="2" y="22" width="2" height="2" fill="#cfcfcf"/><rect x="2" y="26" width="2" height="2" fill="#cfcfcf"/><rect x="4" y="0" width="2" height="2" fill="#cfcfcf"/><rect x="4" y="4" width="2" height="2" fill="#cfcfcf"/><rect x="4" y="8" width="2" height="2" fill="#cfcfcf"/><rect x="4" y="12" width="2" height="2" fill="#cfcfcf"/><rect x="4" y="16" width="2" height="2" fill="#cfcfcf"/><rect x="4" y="20" width="2" height="2" fill="#cfcfcf"/><rect x="4" y="24" width="2" height="2" fill="#cfcfcf"/><rect x="4" y="28" width="2" height="2" fill="#cfcfcf"/><rect x="6" y="2" width="2" height="2" fill="#cfcfcf"/><rect x="6" y="6" width="2" height="2" fill="#cfcfcf"/><rect x="6" y="10" width="2" height="2" fill="#cfcfcf"/><rect x="6" y="14" width="2" height="2" fill="#cfcfcf"/><rect x="6" y="18" width="2" height="2" fill="#cfcfcf"/><rect x="6" y="22" width="2" height="2" fill="#cfcfcf"/><rect x="6" y="26" width="2" height="2" fill="#cfcfcf"/><rect x="8" y="0" width="2" height="2" fill="#cfcfcf"/><rect x="8" y="4" width="2" height="2" fill="#cfcfcf"/><rect x="8" y="8" width="2" height="2" fill="#cfcfcf"/><rect x="8" y="12" width="2" height="2" fill="#cfcfcf"/><rect x="8" y="16" width="2" height="2" fill="#cfcfcf"/><rect x="8" y="20" width="2" height="2" fill="#cfcfcf"/><rect x="8" y="24" width="2" height="2" fill="#cfcfcf"/><rect x="8" y="28" width="2" height="2" fill="#cfcfcf"/><rect x="10" y="2" width="2" height="2" fill="#cfcfcf"/><rect x="10" y="6" width="2" height="2" fill="#cfcfcf"/><rect x="10" y="10" width="2" height="2" fill="#cfcfcf"/><rect x="10" y="14" width="2" height="2" fill="#cfcfcf"/><rect x="10" y="18" width="2" height="2" fill="#cfcfcf"/><rect x="10" y="22" width="2" height="2" fill="#cfcfcf"/><rect x="10" y="26" width="2" height="2" fill="#cfcfcf"/><rect x="12" y="0" width="2" height="2" fill="#cfcfcf"/><rect x="12" y="4" width="2" height="2" fill="#cfcfcf"/><rect x="12" y="8" width="2" height="2" fill="#cfcfcf"/><rect x="12" y="12" width="2" height="2" fill="#cfcfcf"/><rect x="12" y="16" width="2" height="2" fill="#cfcfcf"/><rect x="12" y="20" width="2" height="2" fill="#cfcfcf"/><rect x="12" y="24" width="2" height="2" fill="#cfcfcf"/><rect x="12" y="28" width="2" height="2" fill="#cfcfcf"/><rect x="14" y="2" width="2" height="2" fill="#cfcfcf"/><rect x="14" y="6" width="2" height="2" fill="#cfcfcf"/><rect x="14" y="10" width="2" height="2" fill="#cfcfcf"/><rect x="14" y="14" width="2" height="2" fill="#cfcfcf"/><rect x="14" y="18" width="2" height="2" fill="#cfcfcf"/><rect x="14" y="22" width="2" height="2" fill="#cfcfcf"/><rect x="14" y="26" width="2" height="2" fill="#cfcfcf"/><rect x="16" y="0" width="2" height="2" fill="#cfcfcf"/><rect x="16" y="4" width="2" height="2" fill="#cfcfcf"/><rect x="16" y="8" width="2" height="2" fill="#cfcfcf"/><rect x="16" y="12" width="2" height="2" fill="#cfcfcf"/><rect x="16" y="16" width="2" height="2" fill="#cfcfcf"/><rect x="16" y="20" width="2" height="2" fill="#cfcfcf"/><rect x="16" y="24" width="2" height="2" fill="#cfcfcf"/><rect x="16" y="28" width="2" height="2" fill="#cfcfcf"/><rect x="18" y="2" width="2" height="2" fill="#cfcfcf"/><rect x="18" y="6" width="2" height="2" fill="#cfcfcf"/><rect x="18" y="10" width="2" height="2" fill="#cfcfcf"/><rect x="18" y="14" width="2" height="2" fill="#cfcfcf"/><rect x="18" y="18" width="2" height="2" fill="#cfcfcf"/><rect x="18" y="22" width="2" height="2" fill="#cfcfcf"/><rect x="18" y="26" width="2" height="2" fill="#cfcfcf"/><rect x="20" y="0" width="2" height="2" fill="#cfcfcf"/><rect x="20" y="4" width="2" height="2" fill="#cfcfcf"/><rect x="20" y="8" width="2" height="2" fill="#cfcfcf"/><rect x="20" y="12" width="2" height="2" fill="#cfcfcf"/><rect x="20" y="16" width="2" height="2" fill="#cfcfcf"/><rect x="20" y="20" width="2" height="2" fill="#cfcfcf"/><rect x="20" y="24" width="2" height="2" fill="#cfcfcf"/><rect x="20" y="28" width="2" height="2" fill="#cfcfcf"/><rect x="22" y="2" width="2" height="2" fill="#cfcfcf"/><rect x="22" y="6" width="2" height="2" fill="#cfcfcf"/><rect x="22" y="10" width="2" height="2" fill="#cfcfcf"/><rect x="22" y="14" width="2" height="2" fill="#cfcfcf"/><rect x="22" y="18" width="2" height="2" fill="#cfcfcf"/><rect x="22" y="22" width="2" height="2" fill="#cfcfcf"/><rect x="22" y="26" width="2" height="2" fill="#cfcfcf"/><rect x="24" y="0" width="2" height="2" fill="#cfcfcf"/><rect x="24" y="4" width="2" height="2" fill="#cfcfcf"/><rect x="24" y="8" width="2" height="2" fill="#cfcfcf"/><rect x="24" y="12" width="2" height="2" fill="#cfcfcf"/><rect x="24" y="16" width="2" height="2" fill="#cfcfcf"/><rect x="24" y="20" width="2" height="2" fill="#cfcfcf"/><rect x="24" y="24" width="2" height="2" fill="#cfcfcf"/><rect x="24" y="28" width="2" height="2" fill="#cfcfcf"/><rect x="26" y="2" width="2" height="2" fill="#cfcfcf"/><rect x="26" y="6" width="2" height="2" fill="#cfcfcf"/><rect x="26" y="10" width="2" height="2" fill="#cfcfcf"/><rect x="26" y="14" width="2" height="2" fill="#cfcfcf"/><rect x="26" y="18" width="2" height="2" fill="#cfcfcf"/><rect x="26" y="22" width="2" height="2" fill="#cfcfcf"/><rect x="26" y="26" width="2" height="2" fill="#cfcfcf"/><rect x="28" y="0" width="2" height="2" fill="#cfcfcf"/><rect x="28" y="4" width="2" height="2" fill="#cfcfcf"/><rect x="28" y="8" width="2" height="2" fill="#cfcfcf"/><rect x="28" y="12" width="2" height="2" fill="#cfcfcf"/><rect x="28" y="16" width="2" height="2" fill="#cfcfcf"/><rect x="28" y="20" width="2" height="2" fill="#cfcfcf"/><rect x="28" y="24" width="2" height="2" fill="#cfcfcf"/><rect x="28" y="28" width="2" height="2" fill="#cfcfcf"/></g><circle cx="25" cy="12" r="1.3" fill="#cf6a6a"/><path d="M1 9 V1 H9 M28 1 H36 V9 M36 28 V36 H28 M9 36 H1 V28" fill="none" stroke="#f2f2f2" stroke-width="1.4"/></svg>
<div class="t" style="left:809px;top:569.79px;font-size:11px;line-height:11px;color:#f2f2f2;font-weight:400;font-style:normal;transform:scaleX(0.855);transform-origin:0 0;">Layer 2</div>
<div class="a" style="left:733px;top:595.5px;width:349px;height:1px;background:#474747;"></div>
<div class="a" style="left:764px;top:596px;width:1px;height:40px;background:#474747;"></div>
<svg class="a" style="left:741px;top:610.9px;" width="17" height="11" viewBox="0 0 17 11"><path d="M1.5 5.5 Q8.5 -2 15.5 5.5 Q8.5 13 1.5 5.5 Z" fill="#f0f0f0"/><circle cx="8.5" cy="5.5" r="3" fill="#3a3a3a"/><circle cx="8.8" cy="5" r="1.2" fill="#a0a0a0"/></svg>
<div class="a" style="left:767.5px;top:600.5px;width:32px;height:32.5px;background:#ffffff;border:1.5px solid #2e2e2e;border-radius:1px 1px 3px 3px"></div>
<div class="t" style="left:809.3px;top:610.49px;font-size:11px;line-height:11px;color:#e6e6e6;font-weight:400;font-style:italic;transform:scaleX(0.87);transform-origin:0 0;">Background</div>
<svg class="a" style="left:1055px;top:609px;" width="13" height="14" viewBox="0 0 13 14"><path d="M3.8 6.5 V4.5 A2.7 2.7 0 0 1 9.2 4.5 V6.5" fill="none" stroke="#e6e6e6" stroke-width="1.2"/><rect x="2" y="6.5" width="9" height="7" rx="0.8" fill="none" stroke="#e6e6e6" stroke-width="1.2"/><circle cx="6.5" cy="10" r="1" fill="#e6e6e6"/></svg>
<div class="a" style="left:733px;top:636px;width:349px;height:1px;background:#474747;"></div>
<div class="a" style="left:1097.5px;top:50px;width:2.5px;height:643px;background:#3d3d3d;"></div>
<div class="a" style="left:5px;top:62.6px;width:39.2px;height:35.699999999999996px;background:transparent;border:5px solid #fe0000;border-radius:2px"></div>
<div class="a" style="left:966.6px;top:4.9px;width:37.19999999999993px;height:34.4px;background:transparent;border:5.5px solid #fe0000;border-radius:2px"></div>
<div class="a" style="left:729.3px;top:548.8px;width:361.0px;height:53.0px;background:transparent;border:5.5px solid #fe0000;border-radius:2px"></div>
</body></html>
